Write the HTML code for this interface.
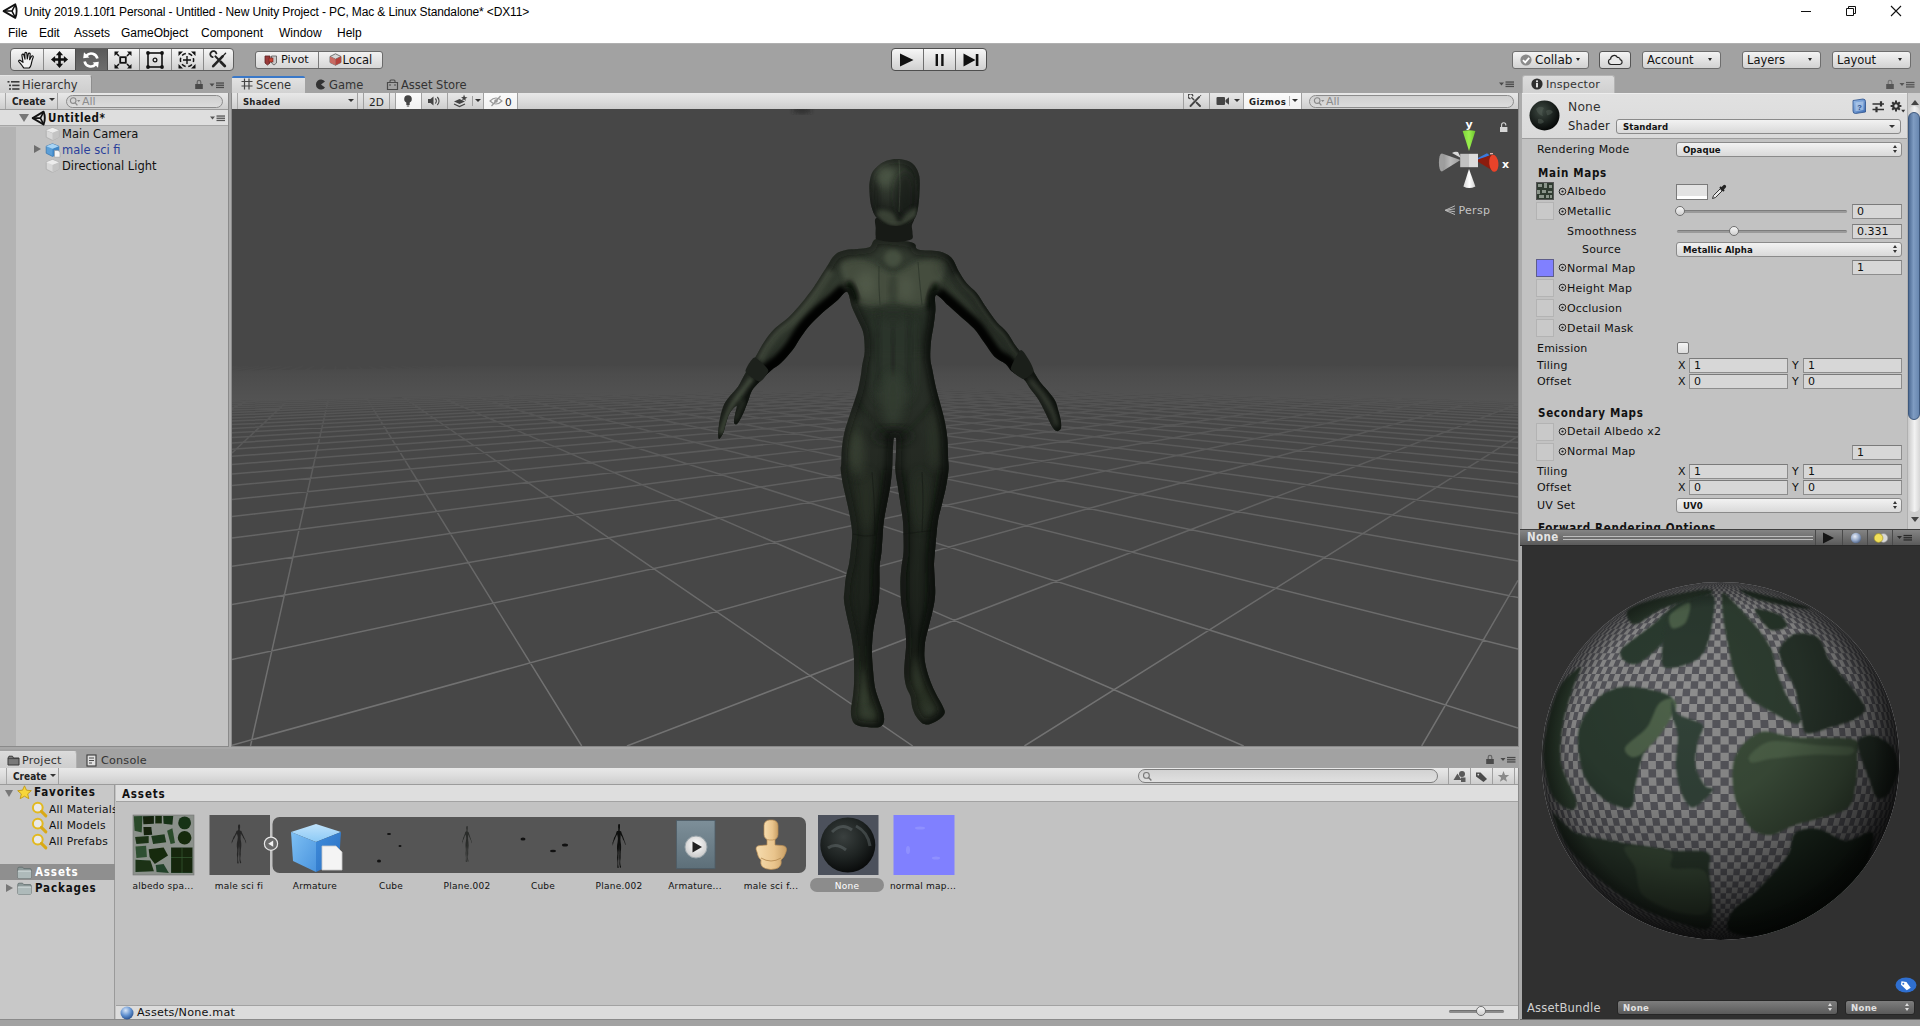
<!DOCTYPE html>
<html lang="en">
<head>
<meta charset="utf-8">
<title>Unity 2019.1.10f1 Personal - Untitled - New Unity Project</title>
<style>
html,body{margin:0;padding:0;width:1920px;height:1026px;overflow:hidden;background:#a2a2a2}
body{font-family:"DejaVu Sans","Liberation Sans",sans-serif;font-size:11px;color:#111;position:relative;line-height:1}
.a{position:absolute;box-sizing:border-box;white-space:nowrap}
.t{position:absolute;white-space:nowrap;line-height:16px;height:16px}
.win{font-family:"Liberation Sans",sans-serif;font-size:12px;color:#000}
.tb{background:linear-gradient(#e9e9e9,#cfcfcf);border:1px solid #7b7b7b}
.btn{background:linear-gradient(#f4f4f4,#d2d2d2);border:1px solid #6e6e6e;border-radius:4px}
.bar{background:linear-gradient(#e8e8e8 0%,#dcdcdc 50%,#cdcdcd 100%)}
.sep{position:absolute;width:1px;background:#8e8e8e}
.fld{position:absolute;box-sizing:border-box;background:#d7d7d7;border:1px solid #8d8d8d;border-top-color:#7a7a7a;height:16px;line-height:14px;padding-left:4px;font-size:11px}
.dd{position:absolute;box-sizing:border-box;background:linear-gradient(#f2f2f2,#d9d9d9);border:1px solid #8a8a8a;border-radius:3px;height:14px;line-height:12px;padding-left:6px;font-size:9.5px;font-weight:bold;font-stretch:condensed;color:#111;letter-spacing:0.1px}
.slot{position:absolute;box-sizing:border-box;width:18px;height:18px;background:#c9c9c9;border:1px solid #b3b3b3}
.lbl{position:absolute;white-space:nowrap;font-size:11.5px;line-height:16px;color:#111}
.ic{position:absolute}
</style>
</head>
<body>
<!-- ===== window title + menu ===== -->
<div class="a" style="left:0;top:0;width:1920px;height:43px;background:#fff"></div>
<svg class="ic" style="left:2px;top:2px" width="18" height="18" viewBox="0 0 18 18"><g fill="none" stroke="#111" stroke-linejoin="round" stroke-linecap="round"><path d="M1.6 9.1 L13.3 2.3 Q16 9.1 13.3 15.9 Z" stroke-width="1.8"/><path d="M1.6 9.1 H10 M10 9.1 L13.2 2.8 M10 9.1 L13.2 15.4" stroke-width="1.5"/></g></svg>
<div class="t win" style="left:24px;top:4px;font-size:12px;letter-spacing:-0.13px">Unity 2019.1.10f1 Personal - Untitled - New Unity Project - PC, Mac &amp; Linux Standalone* &lt;DX11&gt;</div>
<div class="t win" style="left:8px;top:25px">File</div>
<div class="t win" style="left:39px;top:25px">Edit</div>
<div class="t win" style="left:74px;top:25px">Assets</div>
<div class="t win" style="left:121px;top:25px">GameObject</div>
<div class="t win" style="left:201px;top:25px">Component</div>
<div class="t win" style="left:279px;top:25px">Window</div>
<div class="t win" style="left:337px;top:25px">Help</div>
<svg class="ic" style="left:1795px;top:0" width="125" height="24" viewBox="0 0 125 24"><g fill="none" stroke="#111" stroke-width="1"><path d="M6 11.5 H16"/><path d="M51.5 8.5 h7 v7 h-7 z M53.5 8.5 v-2 h7 v7 h-2"/><path d="M96 6 L106 16 M106 6 L96 16" stroke-width="1.1"/></g></svg>

<!-- ===== main toolbar ===== -->
<div class="a" style="left:0;top:43px;width:1920px;height:1px;background:#b0b0b0"></div>
<!-- transform tools -->
<div class="a btn" style="left:10px;top:48px;width:224px;height:23px;border-radius:4px;border-color:#5e5e5e;background:linear-gradient(#f6f6f6,#cfcfcf)"></div>
<div class="a" style="left:75px;top:49px;width:32px;height:21px;background:linear-gradient(#5a5a5a,#6c6c6c)"></div>
<div class="sep" style="left:43px;top:49px;height:21px;background:#8a8a8a"></div>
<div class="sep" style="left:75px;top:49px;height:21px;background:#4d4d4d"></div>
<div class="sep" style="left:107px;top:49px;height:21px;background:#4d4d4d"></div>
<div class="sep" style="left:139px;top:49px;height:21px;background:#8a8a8a"></div>
<div class="sep" style="left:171px;top:49px;height:21px;background:#8a8a8a"></div>
<div class="sep" style="left:203px;top:49px;height:21px;background:#8a8a8a"></div>
<!-- hand -->
<svg class="ic" style="left:17px;top:50px" width="20" height="20" viewBox="0 0 20 20"><path d="M6.8 18 C5.4 16 3.6 13.4 2 11.9 C1 10.9 2.3 9.6 3.5 10.5 L6 12.4 L4.9 5.4 C4.7 4 6.5 3.6 6.9 5 L8 9.2 L7.8 3.4 C7.8 2 9.7 2 9.8 3.4 L10.3 9 L11.3 4 C11.6 2.7 13.4 3 13.2 4.4 L12.6 9.6 L14.5 6.3 C15.2 5.2 16.8 6 16.2 7.3 C15.1 9.8 14.8 11.8 14.2 14.3 C13.8 16.1 13 17.4 12.2 18 Z" fill="#f2f2f2" stroke="#111" stroke-width="1.15" stroke-linejoin="round"/></svg>
<!-- move -->
<svg class="ic" style="left:49.5px;top:49.5px" width="19" height="19" viewBox="0 0 20 20"><path d="M10 1 L13.8 5.4 H11.4 V8.6 H14.6 V6.2 L19 10 L14.6 13.8 V11.4 H11.4 V14.6 H13.8 L10 19 L6.2 14.6 H8.6 V11.4 H5.4 V13.8 L1 10 L5.4 6.2 V8.6 H8.6 V5.4 H6.2 Z" fill="#111"/></svg>
<!-- rotate (active) -->
<svg class="ic" style="left:81px;top:50px;transform:scaleX(-1)" width="20" height="20" viewBox="0 0 20 20"><g fill="none" stroke="#fff" stroke-width="2.6"><path d="M3.6 8.6 A6.4 6.4 0 0 1 14.6 5.6"/><path d="M16.4 11.4 A6.4 6.4 0 0 1 5.4 14.4"/></g><path d="M11.6 7.6 L17.8 8.2 L17 2.2 Z" fill="#fff"/><path d="M8.4 12.4 L2.2 11.8 L3 17.8 Z" fill="#fff"/></svg>
<!-- scale -->
<svg class="ic" style="left:113px;top:50px" width="20" height="20" viewBox="0 0 20 20"><g stroke="#111" stroke-width="1.5" fill="none"><rect x="7.2" y="7.2" width="5.6" height="5.6" stroke-width="1.8"/><path d="M6 6 L2.5 2.5 M14 6 L17.5 2.5 M6 14 L2.5 17.5 M14 14 L17.5 17.5"/></g><path d="M1.5 1.5 H6 L1.5 6 Z M18.5 1.5 V6 L14 1.5 Z M1.5 18.5 V14 L6 18.5 Z M18.5 18.5 H14 L18.5 14 Z" fill="#111"/></svg>
<!-- rect -->
<svg class="ic" style="left:145px;top:50px" width="20" height="20" viewBox="0 0 20 20"><rect x="3" y="3" width="14" height="14" fill="none" stroke="#111" stroke-width="1.6"/><g fill="#111"><circle cx="3" cy="3" r="1.9"/><circle cx="17" cy="3" r="1.9"/><circle cx="3" cy="17" r="1.9"/><circle cx="17" cy="17" r="1.9"/></g><circle cx="10" cy="10" r="1.9" fill="none" stroke="#111" stroke-width="1.2"/></svg>
<!-- transform -->
<svg class="ic" style="left:177px;top:50px" width="20" height="20" viewBox="0 0 20 20"><circle cx="10" cy="10" r="6.6" fill="none" stroke="#111" stroke-width="1.5" stroke-dasharray="4.2 2.7" stroke-dashoffset="2.1"/><path d="M10 6 V14 M6 10 H14" stroke="#111" stroke-width="1.4"/><path d="M1.5 1.5 H6 L1.5 6 Z M18.5 1.5 V6 L14 1.5 Z M1.5 18.5 V14 L6 18.5 Z M18.5 18.5 H14 L18.5 14 Z" fill="#111"/></svg>
<!-- custom tools -->
<svg class="ic" style="left:209px;top:50px" width="20" height="20" viewBox="0 0 20 20"><g stroke="#222" fill="none" stroke-linecap="round"><path d="M4.2 16.2 L13.6 6.4" stroke-width="2.6"/><path d="M13.6 6.4 L16.6 3.2" stroke-width="1.3"/><path d="M9 9 L6.4 6.4" stroke-width="2"/><path d="M11.6 11.8 L15.8 16" stroke-width="2.8"/><path d="M7.4 3.4 A3.1 3.1 0 1 0 3.6 7.2" stroke-width="1.8"/></g></svg>
<!-- pivot / local -->
<div class="a btn" style="left:255px;top:51px;width:128px;height:18px;border-radius:3px;border-color:#6a6a6a;background:linear-gradient(#f2f2f2,#d6d6d6)"></div>
<div class="sep" style="left:318px;top:52px;height:16px;background:#7a7a7a"></div>
<svg class="ic" style="left:264px;top:54px" width="14" height="12" viewBox="0 0 14 12"><path d="M1 2 H6 V9 L3.5 11 L1 9 Z" fill="#9a3a3a" stroke="#5a2222" stroke-width="0.8"/><path d="M7.5 2 H12.5 V9 L10 11 L7.5 9 Z" fill="#c9c9c9" stroke="#555" stroke-width="0.8"/><rect x="5" y="4" width="4" height="4" fill="#c43" stroke="#622" stroke-width="0.6"/></svg>
<div class="t" style="left:281px;top:52px;font-size:11.3px">Pivot</div>
<svg class="ic" style="left:329px;top:53px" width="13" height="13" viewBox="0 0 13 13"><path d="M6.5 0.8 L12 3.5 V9.5 L6.5 12.2 L1 9.5 V3.5 Z" fill="#d9d9d9" stroke="#666" stroke-width="0.9"/><path d="M1 3.5 L6.5 6.2 L12 3.5 M6.5 6.2 V12.2" stroke="#666" stroke-width="0.9" fill="none"/><path d="M6.5 6.2 L12 3.5 V9.5 L6.5 12.2 Z" fill="#b4423c"/><path d="M1 3.5 L6.5 6.2 V12.2 L1 9.5 Z" fill="#c86a62"/></svg>
<div class="t" style="left:342.5px;top:52px;font-size:11.5px">Local</div>
<!-- play controls -->
<div class="a btn" style="left:891px;top:48px;width:96px;height:23px;border-radius:4px;border-color:#4e4e4e;background:linear-gradient(#f6f6f6,#d0d0d0)"></div>
<div class="sep" style="left:923px;top:49px;height:21px;background:#6e6e6e"></div>
<div class="sep" style="left:955px;top:49px;height:21px;background:#6e6e6e"></div>
<svg class="ic" style="left:891px;top:48px" width="96" height="23" viewBox="0 0 96 23"><path d="M9 5.5 L22.5 12 L9 18.5 Z" fill="#111"/><path d="M44.6 6 H47 V18 H44.6 Z M50.2 6 H52.6 V18 H50.2 Z" fill="#111"/><path d="M72.5 5.5 L84.5 12 L72.5 18.5 Z M84.8 6 H87.4 V18 H84.8 Z" fill="#111"/></svg>
<!-- right side -->
<div class="a btn" style="left:1512px;top:51px;width:77px;height:18px;border-radius:3px"></div>
<svg class="ic" style="left:1520px;top:54px" width="12" height="12" viewBox="0 0 12 12"><circle cx="6" cy="6" r="5.6" fill="#8a8a8a"/><path d="M3 6.2 L5.2 8.4 L9.2 3.8" stroke="#fff" stroke-width="1.8" fill="none"/></svg>
<div class="t" style="left:1535px;top:52px;font-size:12px">Collab</div>
<div class="a" style="left:1576px;top:58px;border-left:2.8px solid transparent;border-right:2.8px solid transparent;border-top:3.4px solid #222"></div>
<div class="a btn" style="left:1599px;top:51px;width:32px;height:18px;border-radius:3px;border-color:#555"></div>
<svg class="ic" style="left:1607px;top:54px" width="17" height="12" viewBox="0 0 17 12"><path d="M4 10.5 A2.8 2.8 0 0 1 3.6 5 A3.6 3.6 0 0 1 10.4 3.4 A2.4 2.4 0 0 1 13.2 5.6 A2.5 2.5 0 0 1 13 10.5 Z" fill="#e8e8e8" stroke="#222" stroke-width="1.2"/></svg>
<div class="a btn" style="left:1642px;top:51px;width:79px;height:18px;border-radius:3px"></div>
<div class="t" style="left:1647px;top:52px;font-size:11.5px">Account</div>
<div class="a" style="left:1708px;top:58px;border-left:2.8px solid transparent;border-right:2.8px solid transparent;border-top:3.4px solid #222"></div>
<div class="a btn" style="left:1742px;top:51px;width:79px;height:18px;border-radius:3px"></div>
<div class="t" style="left:1747px;top:52px;font-size:11.5px">Layers</div>
<div class="a" style="left:1808px;top:58px;border-left:2.8px solid transparent;border-right:2.8px solid transparent;border-top:3.4px solid #222"></div>
<div class="a btn" style="left:1832px;top:51px;width:79px;height:18px;border-radius:3px"></div>
<div class="t" style="left:1837px;top:52px;font-size:11.5px">Layout</div>
<div class="a" style="left:1898px;top:58px;border-left:2.8px solid transparent;border-right:2.8px solid transparent;border-top:3.4px solid #222"></div>

<!-- ===== hierarchy ===== -->
<!-- hierarchy tab -->
<div class="a" style="left:0;top:75px;width:92px;height:18px;background:linear-gradient(#dadada,#cecece);border-top:1px solid #e4e4e4;border-top-right-radius:3px;border-right:1px solid #8e8e8e"></div>
<svg class="ic" style="left:7px;top:80px" width="13" height="11" viewBox="0 0 13 11"><g fill="#3c3c3c"><rect x="0.5" y="1" width="2" height="1.6"/><rect x="4" y="1" width="8.5" height="1.6"/><rect x="2" y="4.6" width="2" height="1.6"/><rect x="5.2" y="4.6" width="7.3" height="1.6"/><rect x="2" y="8.2" width="2" height="1.6"/><rect x="5.2" y="8.2" width="7.3" height="1.6"/></g></svg>
<div class="t" style="left:22px;top:77px;font-size:11.5px;color:#333">Hierarchy</div>
<svg class="ic" style="left:193px;top:79px" width="34" height="11" viewBox="0 0 34 11"><g fill="#4a4a4a"><path d="M2.2 5 H9.8 V10 H2.2 Z"/><path d="M3.6 5 V3.2 A2.4 2.4 0 0 1 8.4 3.2 V5 H7.2 V3.3 A1.2 1.2 0 0 0 4.8 3.3 V5 Z" fill="#666"/><path d="M16.5 4.5 H21.5 L19 7.5 Z"/><rect x="23" y="3.4" width="8" height="1.3"/><rect x="23" y="5.6" width="8" height="1.3"/><rect x="23" y="7.8" width="8" height="1.3"/></g></svg>
<!-- panel body -->
<div class="a" style="left:0;top:93px;width:229px;height:654px;background:#c2c2c2;border-right:1px solid #8a8a8a;border-bottom:1px solid #8a8a8a"></div>
<div class="a bar" style="left:0;top:93px;width:228px;height:16px;border-bottom:1px solid #9b9b9b;box-sizing:content-box"></div>
<div class="sep" style="left:5px;top:93px;height:16px;background:#a8a8a8"></div>
<div class="t" style="left:12px;top:94px;font-size:10px;font-weight:bold;font-stretch:condensed;color:#222">Create</div>
<div class="a" style="left:49px;top:98px;border-left:3px solid transparent;border-right:3px solid transparent;border-top:3px solid #333"></div>
<div class="sep" style="left:57px;top:93px;height:16px;background:#a0a0a0"></div>
<div class="a" style="left:66px;top:95px;width:157px;height:13px;border:1px solid #8c8c8c;border-radius:7px;background:linear-gradient(#cfcfcf,#dcdcdc)"></div>
<svg class="ic" style="left:69px;top:96px" width="12" height="11" viewBox="0 0 12 11"><circle cx="4.2" cy="4.6" r="2.8" fill="none" stroke="#8a8a8a" stroke-width="1.1"/><path d="M6.2 6.8 L8.4 9.4" stroke="#8a8a8a" stroke-width="1.3"/><path d="M8 4 H11.4 L9.7 6 Z" fill="#8a8a8a"/></svg>
<div class="t" style="left:82px;top:94px;font-size:11px;color:#8c8c8c">All</div>
<!-- scene row -->
<div class="a" style="left:0;top:110px;width:228px;height:16px;background:#dedede;border-bottom:1px solid #a6a6a6"></div>
<div class="a" style="left:0;top:127px;width:16px;height:619px;background:#b3b3b3"></div>
<div class="a" style="left:19px;top:114px;border-left:5px solid transparent;border-right:5px solid transparent;border-top:8px solid #777"></div>
<svg class="ic" style="left:31px;top:109px" width="17" height="18" viewBox="0 0 18 18"><g fill="none" stroke="#111" stroke-linejoin="round" stroke-linecap="round"><path d="M1.8 9.1 L13.3 2.3 Q16 9.1 13.3 15.9 Z" stroke-width="2"/><path d="M1.8 9.1 H10 M10 9.1 L13.2 2.8 M10 9.1 L13.2 15.4" stroke-width="1.7"/></g></svg>
<div class="t" style="left:48px;top:110px;font-size:11.5px;font-weight:bold;font-stretch:condensed;letter-spacing:0.55px;color:#111">Untitled*</div>
<svg class="ic" style="left:209px;top:113px" width="18" height="10" viewBox="0 0 18 10"><g fill="#555"><path d="M1 3.5 H6 L3.5 6.5 Z"/><rect x="7.5" y="2.4" width="8.5" height="1.3"/><rect x="7.5" y="4.6" width="8.5" height="1.3"/><rect x="7.5" y="6.8" width="8.5" height="1.3"/></g></svg>
<!-- rows -->
<svg class="ic" style="left:45px;top:127px" width="15" height="14" viewBox="0 0 15 14"><path d="M7.5 0.8 L13.8 3.2 V10.2 L7.5 13.4 L1.2 10.2 V3.2 Z" fill="#d8d8d8" stroke="#a9a9a9" stroke-width="0.8"/><path d="M1.2 3.2 L7.5 5.8 L13.8 3.2" fill="none" stroke="#b5b5b5" stroke-width="0.8"/><path d="M7.5 5.8 L13.8 3.2 V10.2 L7.5 13.4 Z" fill="#c4c4c4"/><path d="M1.2 3.2 L7.5 0.8 L13.8 3.2 L7.5 5.8 Z" fill="#ececec"/></svg>
<div class="t" style="left:62px;top:126px;font-size:11.5px">Main Camera</div>
<div class="a" style="left:34px;top:145px;border-top:4.5px solid transparent;border-bottom:4.5px solid transparent;border-left:7px solid #6e6e6e"></div>
<svg class="ic" style="left:45px;top:143px" width="16" height="15" viewBox="0 0 16 15"><path d="M7.5 0.8 L13.8 3.2 V10.2 L7.5 13.4 L1.2 10.2 V3.2 Z" fill="#5b9fd8" stroke="#3d78b0" stroke-width="0.8"/><path d="M7.5 5.8 L13.8 3.2 V10.2 L7.5 13.4 Z" fill="#3f86c6"/><path d="M1.2 3.2 L7.5 0.8 L13.8 3.2 L7.5 5.8 Z" fill="#a8d4f4"/><path d="M9.5 7.5 H13.2 L15 9.3 V14.2 H9.5 Z" fill="#f4f4f4" stroke="#9a9a9a" stroke-width="0.6"/></svg>
<div class="t" style="left:62px;top:142px;font-size:11.5px;color:#2a3f9a">male sci fi</div>
<svg class="ic" style="left:45px;top:159px" width="15" height="14" viewBox="0 0 15 14"><path d="M7.5 0.8 L13.8 3.2 V10.2 L7.5 13.4 L1.2 10.2 V3.2 Z" fill="#d8d8d8" stroke="#a9a9a9" stroke-width="0.8"/><path d="M7.5 5.8 L13.8 3.2 V10.2 L7.5 13.4 Z" fill="#c4c4c4"/><path d="M1.2 3.2 L7.5 0.8 L13.8 3.2 L7.5 5.8 Z" fill="#ececec"/></svg>
<div class="t" style="left:62px;top:158px;font-size:11.5px">Directional Light</div>

<!-- ===== scene ===== -->
<!-- scene tabs -->
<div class="a" style="left:232px;top:76px;width:73px;height:17px;background:linear-gradient(#e2e2e2,#d2d2d2);border-top:2px solid #3a78c8;border-top-right-radius:2px;border-top-left-radius:2px"></div>
<svg class="ic" style="left:241px;top:78px" width="12" height="12" viewBox="0 0 12 12"><path d="M3.5 0.5 V11.5 M8 0.5 V11.5 M0.5 3.5 H11.5 M0.5 8 H11.5" stroke="#444" stroke-width="1.2" fill="none"/></svg>
<div class="t" style="left:256px;top:77px;font-size:11.5px;color:#333">Scene</div>
<svg class="ic" style="left:315px;top:79px" width="11" height="11" viewBox="0 0 11 11"><path d="M10 2.6 A5 5 0 1 0 10 8.4 L6 5.5 Z" fill="#333"/></svg>
<div class="t" style="left:329px;top:77px;font-size:11.5px;color:#333">Game</div>
<svg class="ic" style="left:386px;top:78px" width="13" height="13" viewBox="0 0 13 13"><path d="M1.5 4.5 H11.5 V11.5 H1.5 Z" fill="none" stroke="#4a4a4a" stroke-width="1.2"/><path d="M4 4.5 V3 A1 1 0 0 1 5 2 H8 A1 1 0 0 1 9 3 V4.5" fill="none" stroke="#4a4a4a" stroke-width="1.1"/><path d="M4 6 V8 M9 6 V8" stroke="#4a4a4a" stroke-width="1"/></svg>
<div class="t" style="left:401px;top:77px;font-size:11.5px;color:#333">Asset Store</div>
<svg class="ic" style="left:1498px;top:79px" width="18" height="10" viewBox="0 0 18 10"><g fill="#4a4a4a"><path d="M1 3.5 H6 L3.5 6.5 Z"/><rect x="7.5" y="2.4" width="8.5" height="1.3"/><rect x="7.5" y="4.6" width="8.5" height="1.3"/><rect x="7.5" y="6.8" width="8.5" height="1.3"/></g></svg>
<!-- scene toolbar -->
<div class="a bar" style="left:232px;top:93px;width:1287px;height:16px;border-right:1px solid #8a8a8a"></div>
<div class="a" style="left:231px;top:93px;width:1px;height:654px;background:#8a8a8a"></div>
<div class="sep" style="left:237px;top:93px;height:16px;background:#a8a8a8"></div>
<div class="t" style="left:243px;top:94px;font-size:9.5px;font-weight:bold;font-stretch:condensed;color:#222;letter-spacing:0.2px">Shaded</div>
<div class="a" style="left:348px;top:99px;border-left:3px solid transparent;border-right:3px solid transparent;border-top:3px solid #333"></div>
<div class="sep" style="left:357px;top:93px;height:16px;background:#a0a0a0"></div>
<div class="sep" style="left:363px;top:93px;height:16px;background:#a0a0a0"></div>
<div class="t" style="left:369px;top:93.5px;font-size:10.5px;color:#222">2D</div>
<div class="sep" style="left:389px;top:93px;height:16px;background:#a0a0a0"></div>
<div class="sep" style="left:395px;top:93px;height:16px;background:#a0a0a0"></div>
<div class="a" style="left:396px;top:93px;width:25px;height:16px;background:linear-gradient(#fbfbfb,#f1f1f1)"></div>
<svg class="ic" style="left:402px;top:94px" width="12" height="14" viewBox="0 0 12 14"><circle cx="6" cy="5" r="3.8" fill="#444"/><path d="M4.3 8 H7.7 V11 H4.3 Z" fill="#444"/><path d="M4.8 12 H7.2" stroke="#444" stroke-width="1"/></svg>
<div class="sep" style="left:421px;top:93px;height:16px;background:#a0a0a0"></div>
<svg class="ic" style="left:427px;top:95px" width="14" height="12" viewBox="0 0 14 12"><path d="M1 4 H3.5 L6.5 1.5 V10.5 L3.5 8 H1 Z" fill="#444"/><path d="M8.3 3.5 A3.5 3.5 0 0 1 8.3 8.5 M10.3 2 A5.5 5.5 0 0 1 10.3 10" stroke="#444" stroke-width="1.1" fill="none"/></svg>
<div class="sep" style="left:447px;top:93px;height:16px;background:#a0a0a0"></div>
<svg class="ic" style="left:453px;top:94px" width="15" height="14" viewBox="0 0 15 14"><path d="M1 7.5 L6.5 5 L12 7.5 L6.5 10 Z" fill="#444"/><path d="M1 10 L6.5 12.5 L12 10" stroke="#444" stroke-width="1.2" fill="none"/><path d="M11 0.5 L12 3 L14.5 3.5 L12.4 4.8 L12.8 7 L11 5.6 L9 6.6 L9.8 4.6 L8 3.2 L10.2 3 Z" fill="#444"/></svg>
<div class="sep" style="left:472px;top:96px;height:10px;background:#a0a0a0"></div>
<div class="a" style="left:475px;top:99px;border-left:3px solid transparent;border-right:3px solid transparent;border-top:3px solid #333"></div>
<div class="sep" style="left:483px;top:93px;height:16px;background:#a0a0a0"></div>
<div class="a" style="left:484px;top:93px;width:33px;height:16px;background:linear-gradient(#fbfbfb,#f1f1f1)"></div>
<svg class="ic" style="left:489px;top:95px" width="14" height="12" viewBox="0 0 14 12"><path d="M1 6 Q7 0 13 6 Q7 12 1 6 Z" fill="none" stroke="#9a9a9a" stroke-width="1.1"/><circle cx="7" cy="6" r="1.8" fill="#9a9a9a"/><path d="M11.5 1 L2.5 11" stroke="#9a9a9a" stroke-width="1.2"/></svg>
<div class="t" style="left:505px;top:93.5px;font-size:10.5px;color:#222">0</div>
<div class="sep" style="left:517px;top:93px;height:16px;background:#a0a0a0"></div>
<!-- right part of scene toolbar -->
<div class="sep" style="left:1183px;top:93px;height:16px;background:#a0a0a0"></div>
<svg class="ic" style="left:1188px;top:94px" width="15" height="14" viewBox="0 0 15 14"><g stroke="#444" fill="none" stroke-linecap="round"><path d="M2.5 12 L11 3.2" stroke-width="1.9"/><path d="M11 3.2 L12.8 1.4" stroke-width="1"/><path d="M5.8 5.8 L3.8 3.8" stroke-width="1.5"/><path d="M8.6 8.6 L12 12" stroke-width="2"/><path d="M4.8 1.8 A2.4 2.4 0 1 0 2 4.6" stroke-width="1.3"/></g></svg>
<div class="sep" style="left:1209px;top:93px;height:16px;background:#a0a0a0"></div>
<svg class="ic" style="left:1216px;top:96px" width="14" height="10" viewBox="0 0 14 10"><rect x="0.5" y="1" width="8.5" height="8" rx="1" fill="#444"/><path d="M9.5 4 L13 1.2 V8.8 L9.5 6 Z" fill="#444"/></svg>
<div class="a" style="left:1234px;top:99px;border-left:3px solid transparent;border-right:3px solid transparent;border-top:3px solid #333"></div>
<div class="sep" style="left:1243px;top:93px;height:16px;background:#a0a0a0"></div>
<div class="a" style="left:1244px;top:93px;width:57px;height:16px;background:linear-gradient(#fbfbfb,#f1f1f1)"></div>
<div class="t" style="left:1249px;top:94px;font-size:9.5px;font-weight:bold;font-stretch:condensed;color:#222;letter-spacing:0.4px">Gizmos</div>
<div class="sep" style="left:1289px;top:96px;height:10px;background:#b5b5b5"></div>
<div class="a" style="left:1292px;top:99px;border-left:3px solid transparent;border-right:3px solid transparent;border-top:3px solid #333"></div>
<div class="sep" style="left:1301px;top:93px;height:16px;background:#a0a0a0"></div>
<div class="a" style="left:1309px;top:95px;width:205px;height:13px;border:1px solid #8c8c8c;border-radius:7px;background:linear-gradient(#cfcfcf,#dcdcdc)"></div>
<svg class="ic" style="left:1313px;top:96px" width="12" height="11" viewBox="0 0 12 11"><circle cx="4.2" cy="4.6" r="2.8" fill="none" stroke="#8a8a8a" stroke-width="1.1"/><path d="M6.2 6.8 L8.4 9.4" stroke="#8a8a8a" stroke-width="1.3"/><path d="M8 4 H11.4 L9.7 6 Z" fill="#8a8a8a"/></svg>
<div class="t" style="left:1326px;top:94px;font-size:11px;color:#8c8c8c">All</div>
<!-- viewport -->
<svg class="ic" style="left:232px;top:109px" width="1286" height="637" viewBox="0 0 1286 637">
<defs>
<linearGradient id="gfade" x1="0" y1="0" x2="0" y2="1"><stop offset="0" stop-color="#474747"/><stop offset="0.03" stop-color="#474747" stop-opacity="0.88"/><stop offset="0.1" stop-color="#474747" stop-opacity="0.74"/><stop offset="0.2" stop-color="#474747" stop-opacity="0.62"/><stop offset="0.35" stop-color="#474747" stop-opacity="0.46"/><stop offset="0.5" stop-color="#474747" stop-opacity="0.32"/><stop offset="0.75" stop-color="#474747" stop-opacity="0.14"/><stop offset="1" stop-color="#474747" stop-opacity="0"/></linearGradient>
<linearGradient id="gbody" x1="0" y1="141" x2="0" y2="619" gradientUnits="userSpaceOnUse">
<stop offset="0" stop-color="#2f3a2b"/><stop offset="0.12" stop-color="#303b2b"/><stop offset="0.24" stop-color="#283226"/><stop offset="0.42" stop-color="#232b21"/><stop offset="0.55" stop-color="#1f281d"/><stop offset="0.8" stop-color="#1a2219"/><stop offset="0.92" stop-color="#27321f"/><stop offset="1" stop-color="#2d3a26"/></linearGradient>
<radialGradient id="ghead" cx="658" cy="66" r="40" gradientUnits="userSpaceOnUse"><stop offset="0" stop-color="#414f3a"/><stop offset="0.45" stop-color="#2d372a"/><stop offset="1" stop-color="#181e18"/></radialGradient>
<filter id="b2" x="-20%" y="-20%" width="140%" height="140%"><feGaussianBlur stdDeviation="2"/></filter>
<filter id="b4" x="-30%" y="-30%" width="160%" height="160%"><feGaussianBlur stdDeviation="4"/></filter>
<filter id="b7" x="-40%" y="-40%" width="180%" height="180%"><feGaussianBlur stdDeviation="7"/></filter>
<filter id="desat" filterUnits="userSpaceOnUse" x="450" y="30" width="420" height="610"><feColorMatrix type="saturate" values="0.72"/></filter>
<clipPath id="cbody"><path d="M645.6 129.7 C638.4 130.5 642.0 136.7 636.7 138.6 C631.4 140.5 619.6 139.8 613.9 141.1 C608.2 142.4 605.7 143.4 602.5 146.2 C599.3 148.9 598.3 152.4 594.9 157.6 C591.5 162.9 586.2 171.6 582.0 177.7 C577.8 183.8 573.6 189.1 569.4 194.2 C565.2 199.3 561.1 204.0 556.7 208.2 C552.3 212.4 546.8 215.6 542.8 219.6 C538.8 223.6 535.8 227.6 532.6 232.2 C529.4 236.8 527.0 242.1 523.8 247.4 C520.6 252.7 516.6 258.8 513.6 263.8 C510.6 268.9 508.8 273.7 506.0 277.7 C503.2 281.7 499.4 284.9 497.1 287.9 C494.8 290.9 493.6 292.1 492.1 295.5 C490.6 298.9 489.2 303.8 488.3 308.2 C487.3 312.6 486.6 318.5 486.4 322.1 C486.2 325.7 486.2 329.5 487.0 329.7 C487.8 329.9 490.1 326.3 491.4 323.4 C492.7 320.4 493.4 315.4 494.6 312.0 C495.8 308.6 496.7 305.6 498.4 303.1 C500.1 300.6 504.0 296.2 504.7 296.8 C505.4 297.4 503.2 304.0 502.8 306.9 C502.4 309.8 501.8 312.6 502.2 313.9 C502.6 315.2 503.9 316.1 505.4 314.5 C506.9 312.9 509.3 308.2 511.1 304.4 C512.9 300.6 514.7 295.5 516.2 291.7 C517.7 287.9 518.1 284.7 520.0 281.5 C521.9 278.3 524.4 276.1 527.6 272.7 C530.8 269.3 535.4 264.5 539.0 261.4 C542.6 258.2 545.5 257.2 549.1 253.8 C552.7 250.4 557.1 245.5 560.5 241.1 C563.9 236.7 566.4 231.4 569.4 227.2 C572.4 223.0 574.8 219.6 578.2 215.8 C581.6 212.0 585.2 208.4 589.6 204.4 C594.0 200.4 600.6 195.3 604.8 191.7 C609.0 188.1 612.5 181.8 615.0 182.8 C617.5 183.9 618.1 193.1 620.0 198.0 C621.9 202.9 624.5 207.6 626.4 212.0 C628.3 216.4 630.5 219.5 631.5 224.6 C632.5 229.7 632.9 237.2 632.7 242.4 C632.5 247.6 630.8 252.1 630.2 256.0 C629.6 259.9 629.5 262.2 628.9 266.0 C628.3 269.8 627.4 274.7 626.4 279.0 C625.4 283.3 624.1 287.1 622.6 291.7 C621.1 296.3 619.2 301.6 617.5 306.9 C615.8 312.2 613.7 317.9 612.4 323.4 C611.1 328.9 610.4 334.5 609.9 339.8 C609.4 345.1 609.5 351.5 609.3 355.0 C609.1 358.5 608.4 357.2 608.8 361.0 C609.1 364.8 610.3 372.0 611.4 377.5 C612.5 383.0 614.1 388.6 615.2 393.9 C616.4 399.2 617.5 404.0 618.3 409.1 C619.1 414.2 620.1 419.3 620.2 424.4 C620.3 429.5 619.5 434.5 619.0 439.6 C618.5 444.7 618.0 449.9 617.1 454.8 C616.2 459.6 614.6 464.3 613.9 468.7 C613.1 473.1 612.9 477.7 612.6 481.4 C612.3 485.1 611.6 486.4 612.0 491.0 C612.4 495.6 614.0 503.0 615.2 508.7 C616.4 514.4 618.0 519.7 619.0 525.2 C620.0 530.7 621.0 536.4 621.5 541.7 C622.0 547.0 622.0 551.6 622.1 556.9 C622.2 562.2 622.3 568.3 622.1 573.4 C621.9 578.5 621.4 582.9 620.9 587.3 C620.4 591.7 619.2 596.4 619.0 600.0 C618.8 603.6 618.8 606.2 619.6 608.8 C620.4 611.4 621.1 614.2 624.0 615.8 C626.9 617.4 632.7 618.0 636.7 618.3 C640.7 618.6 645.6 618.7 648.1 617.7 C650.6 616.8 651.4 614.9 651.9 612.6 C652.4 610.3 652.1 607.4 651.3 603.8 C650.4 600.2 648.2 595.3 646.8 591.1 C645.4 586.9 644.0 583.2 643.0 578.4 C642.0 573.5 641.6 567.7 641.1 562.0 C640.6 556.3 640.0 549.7 639.9 544.2 C639.8 538.7 640.1 534.1 640.5 529.0 C640.9 523.9 641.5 518.9 642.4 513.8 C643.2 508.7 644.9 502.4 645.6 498.6 C646.3 494.8 646.5 494.9 646.8 491.0 C647.1 487.1 647.4 480.6 647.5 475.0 C647.6 469.4 647.2 462.6 647.5 457.3 C647.8 452.0 648.9 448.5 649.4 443.4 C649.9 438.3 650.2 432.2 650.6 426.9 C651.0 421.6 651.1 417.2 651.9 411.7 C652.6 406.2 654.0 399.6 655.1 393.9 C656.2 388.2 657.4 383.0 658.2 377.5 C659.0 372.0 659.7 365.8 660.1 361.0 C660.5 356.2 660.4 353.7 660.6 348.7 C660.8 343.7 661.1 334.4 661.5 331.0 C661.9 327.6 662.3 328.5 662.8 328.5 C663.2 328.5 664.0 327.6 664.2 331.0 C664.4 334.4 663.9 343.7 663.8 348.7 C663.6 353.7 663.0 356.2 663.3 361.0 C663.6 365.8 664.9 372.0 665.8 377.5 C666.6 383.0 667.5 388.2 668.4 393.9 C669.2 399.6 670.4 406.2 670.9 411.7 C671.4 417.2 671.4 421.6 671.5 426.9 C671.6 432.2 671.8 438.3 671.5 443.4 C671.2 448.5 670.1 452.4 669.6 457.3 C669.1 462.1 668.5 466.9 668.4 472.5 C668.3 478.1 668.6 485.8 669.0 491.0 C669.4 496.2 670.2 498.9 670.9 503.7 C671.6 508.6 672.9 514.6 673.4 520.1 C673.9 525.6 674.2 531.3 674.1 536.6 C674.0 541.9 673.1 547.1 672.8 551.8 C672.5 556.4 672.0 560.3 672.2 564.5 C672.4 568.7 673.1 573.4 674.1 577.2 C675.1 581.0 677.5 583.7 678.5 587.3 C679.5 590.9 679.4 595.3 680.4 598.7 C681.4 602.1 682.6 605.1 684.2 607.6 C685.8 610.1 687.7 612.6 689.9 613.9 C692.1 615.2 694.5 615.8 697.5 615.2 C700.5 614.6 705.2 612.0 707.7 610.1 C710.2 608.2 712.3 606.1 712.7 603.8 C713.1 601.5 711.7 599.4 710.2 596.2 C708.7 593.0 705.8 588.6 703.9 584.8 C702.0 581.0 700.3 577.2 698.8 573.4 C697.3 569.6 696.1 566.2 695.0 562.0 C693.9 557.8 692.7 552.9 692.4 548.0 C692.1 543.1 692.5 537.6 693.1 532.8 C693.8 527.9 695.1 523.8 696.3 518.9 C697.5 514.0 699.0 508.4 700.1 503.7 C701.2 499.1 702.1 494.7 702.6 491.0 C703.1 487.3 703.2 485.1 703.2 481.4 C703.2 477.7 702.8 473.1 702.6 468.7 C702.4 464.3 701.9 459.6 702.0 454.8 C702.1 449.9 702.8 444.7 703.2 439.6 C703.6 434.5 704.0 429.5 704.5 424.4 C705.0 419.3 705.4 414.2 706.4 409.1 C707.4 404.0 708.9 399.2 710.2 393.9 C711.5 388.6 713.0 383.0 714.0 377.5 C715.0 372.0 716.1 365.8 716.5 361.0 C716.9 356.2 716.3 353.9 716.1 348.7 C715.9 343.5 715.9 335.6 715.4 329.7 C714.9 323.8 713.9 318.5 712.9 313.2 C711.9 307.9 710.6 303.7 709.1 298.0 C707.6 292.3 705.5 285.3 704.0 279.0 C702.5 272.7 701.2 265.1 700.2 260.0 C699.2 254.9 698.5 253.3 698.3 248.7 C698.1 244.1 698.5 237.5 699.0 232.2 C699.5 226.9 700.8 222.1 701.5 217.0 C702.2 211.9 703.0 207.0 703.4 201.8 C703.8 196.6 701.8 186.8 704.0 186.0 C706.2 185.2 712.5 193.1 716.7 196.8 C720.9 200.5 725.2 204.4 729.4 208.2 C733.6 212.0 738.2 215.4 742.0 219.6 C745.8 223.8 748.8 228.9 752.2 233.5 C755.6 238.1 758.7 243.8 762.3 247.4 C765.9 251.0 770.8 252.5 773.7 255.0 C776.7 257.5 777.0 260.1 780.0 262.6 C783.0 265.1 788.5 267.4 791.5 270.1 C794.5 272.8 795.5 275.8 797.8 279.0 C800.1 282.2 803.3 285.9 805.4 289.1 C807.5 292.3 808.8 294.8 810.5 298.0 C812.2 301.2 813.8 304.8 815.5 308.2 C817.2 311.6 819.0 316.0 820.6 318.3 C822.2 320.6 823.6 321.9 825.0 322.1 C826.4 322.3 828.2 321.3 828.8 319.6 C829.4 317.9 829.2 315.0 828.8 312.0 C828.4 309.0 827.2 305.2 826.3 301.8 C825.3 298.4 824.9 295.1 823.1 291.7 C821.3 288.3 818.0 284.7 815.5 281.5 C813.0 278.3 810.2 275.9 807.9 272.7 C805.6 269.5 803.9 266.3 801.6 262.5 C799.3 258.7 797.0 254.2 794.0 250.0 C791.0 245.8 787.1 241.7 783.9 237.3 C780.7 232.9 778.2 227.4 775.0 223.4 C771.8 219.4 768.2 217.2 764.8 213.2 C761.4 209.2 758.1 204.2 754.7 199.3 C751.3 194.5 748.0 188.3 744.6 184.1 C741.2 179.9 737.4 177.5 734.4 173.9 C731.4 170.3 729.3 166.7 726.8 162.5 C724.3 158.3 722.6 152.0 719.2 148.6 C715.8 145.2 712.1 143.7 706.6 142.3 C701.1 141.0 690.6 142.0 686.1 140.5 C681.6 139.0 686.5 135.3 679.8 133.5 C673.0 131.7 652.8 128.8 645.6 129.7 Z"/></clipPath>
<clipPath id="chead"><path d="M664.6 49.9 C661.4 49.9 658.0 50.5 655.0 51.5 C652.0 52.5 649.2 54.3 646.8 56.2 C644.4 58.1 642.0 60.5 640.5 63.0 C639.0 65.5 638.5 68.3 638.0 71.0 C637.5 73.7 637.2 75.1 637.3 79.0 C637.4 82.9 637.8 89.8 638.6 94.2 C639.5 98.6 641.1 103.0 642.4 105.6 C643.7 108.2 644.6 108.4 646.2 110.0 C647.8 111.6 649.0 113.8 652.0 115.0 C655.0 116.2 660.0 117.0 664.0 117.0 C668.0 117.0 673.0 116.2 676.0 115.0 C679.0 113.8 680.7 112.2 682.3 110.0 C683.9 107.8 684.6 105.9 685.5 101.8 C686.4 97.7 687.1 91.0 687.4 85.3 C687.7 79.6 688.2 72.5 687.4 67.6 C686.5 62.7 684.5 58.9 682.3 56.2 C680.1 53.5 677.0 52.4 674.0 51.3 C671.0 50.3 667.8 49.9 664.6 49.9 Z"/></clipPath>
</defs>
<rect width="1286" height="637" fill="#474747"/>
<path d="M5.2 257.0 L0.0 257.7 M16.2 257.0 L0.0 259.3 M27.1 257.0 L0.0 261.4 M38.1 257.0 L0.0 264.2 M49.1 257.0 L0.0 268.0 M60.0 257.0 L0.0 273.7 M71.0 257.0 L0.0 282.8 M81.9 257.0 L0.0 299.9 M92.9 257.0 L0.0 344.0 M103.8 257.0 L18.5 637.0 M114.7 257.0 L349.7 637.0 M125.6 257.0 L680.8 637.0 M136.6 257.0 L1011.7 637.0 M147.5 257.0 L1286.0 619.1 M158.4 257.0 L1286.0 539.9 M169.3 257.0 L1286.0 488.4 M180.2 257.0 L1286.0 452.1 M191.1 257.0 L1286.0 425.3 M201.9 257.0 L1286.0 404.6 M212.8 257.0 L1286.0 388.1 M223.7 257.0 L1286.0 374.7 M234.6 257.0 L1286.0 363.6 M245.4 257.0 L1286.0 354.2 M256.3 257.0 L1286.0 346.2 M267.1 257.0 L1286.0 339.3 M278.0 257.0 L1286.0 333.3 M288.8 257.0 L1286.0 328.0 M299.7 257.0 L1286.0 323.3 M310.5 257.0 L1286.0 319.1 M321.3 257.0 L1286.0 315.3 M332.1 257.0 L1286.0 311.9 M342.9 257.0 L1286.0 308.8 M353.8 257.0 L1286.0 305.9 M364.6 257.0 L1286.0 303.3 M375.4 257.0 L1286.0 300.9 M386.1 257.0 L1286.0 298.7 M396.9 257.0 L1286.0 296.7 M407.7 257.0 L1286.0 294.8 M418.5 257.0 L1286.0 293.1 M429.3 257.0 L1286.0 291.4 M440.0 257.0 L1286.0 289.9 M450.8 257.0 L1286.0 288.5 M461.5 257.0 L1286.0 287.1 M472.3 257.0 L1286.0 285.9 M483.0 257.0 L1286.0 284.7 M493.8 257.0 L1286.0 283.5 M504.5 257.0 L1286.0 282.5 M515.2 257.0 L1286.0 281.5 M526.0 257.0 L1286.0 280.5 M536.7 257.0 L1286.0 279.6 M547.4 257.0 L1286.0 278.7 M558.1 257.0 L1286.0 277.9 M568.8 257.0 L1286.0 277.1 M579.5 257.0 L1286.0 276.4 M590.2 257.0 L1286.0 275.7 M600.9 257.0 L1286.0 275.0 M611.6 257.0 L1286.0 274.3 M622.2 257.0 L1286.0 273.7 M632.9 257.0 L1286.0 273.1 M643.6 257.0 L1286.0 272.5 M654.2 257.0 L1286.0 272.0 M664.9 257.0 L1286.0 271.4 M675.5 257.0 L1286.0 270.9 M686.2 257.0 L1286.0 270.4 M696.8 257.0 L1286.0 269.9 M707.4 257.0 L1286.0 269.5 M718.1 257.0 L1286.0 269.0 M728.7 257.0 L1286.0 268.6 M739.3 257.0 L1286.0 268.2 M749.9 257.0 L1286.0 267.8 M760.5 257.0 L1286.0 267.4 M771.1 257.0 L1286.0 267.0 M781.7 257.0 L1286.0 266.7 M792.3 257.0 L1286.0 266.3 M802.9 257.0 L1286.0 266.0 M813.5 257.0 L1286.0 265.7 M824.1 257.0 L1286.0 265.3 M834.6 257.0 L1286.0 265.0 M845.2 257.0 L1286.0 264.7 M855.8 257.0 L1286.0 264.4 M866.3 257.0 L1286.0 264.2 M876.9 257.0 L1286.0 263.9 M887.4 257.0 L1286.0 263.6 M898.0 257.0 L1286.0 263.4 M908.5 257.0 L1286.0 263.1 M919.0 257.0 L1286.0 262.9 M929.5 257.0 L1286.0 262.6 M940.1 257.0 L1286.0 262.4 M950.6 257.0 L1286.0 262.2 M961.1 257.0 L1286.0 261.9 M971.6 257.0 L1286.0 261.7 M982.1 257.0 L1286.0 261.5 M992.6 257.0 L1286.0 261.3 M1003.1 257.0 L1286.0 261.1 M1013.6 257.0 L1286.0 260.9 M1024.0 257.0 L1286.0 260.7 M1034.5 257.0 L1286.0 260.5 M1045.0 257.0 L1286.0 260.3 M1055.4 257.0 L1286.0 260.2 M421.1 257.0 L0.0 262.3 M434.4 257.0 L0.0 262.6 M447.7 257.0 L0.0 262.8 M461.0 257.0 L0.0 263.1 M474.3 257.0 L0.0 263.3 M487.6 257.0 L0.0 263.6 M500.9 257.0 L0.0 263.9 M514.2 257.0 L0.0 264.2 M527.4 257.0 L0.0 264.4 M540.7 257.0 L0.0 264.8 M553.9 257.0 L0.0 265.1 M567.2 257.0 L0.0 265.4 M580.4 257.0 L0.0 265.7 M593.6 257.0 L0.0 266.1 M606.8 257.0 L0.0 266.4 M620.0 257.0 L0.0 266.8 M633.2 257.0 L0.0 267.1 M646.4 257.0 L0.0 267.5 M659.6 257.0 L0.0 267.9 M672.8 257.0 L0.0 268.4 M685.9 257.0 L0.0 268.8 M699.1 257.0 L0.0 269.2 M712.2 257.0 L0.0 269.7 M725.4 257.0 L0.0 270.2 M738.5 257.0 L0.0 270.7 M751.6 257.0 L0.0 271.2 M764.8 257.0 L0.0 271.7 M777.9 257.0 L0.0 272.3 M791.0 257.0 L0.0 272.9 M804.1 257.0 L0.0 273.5 M817.1 257.0 L0.0 274.1 M830.2 257.0 L0.0 274.8 M843.3 257.0 L0.0 275.5 M856.3 257.0 L0.0 276.2 M869.4 257.0 L0.0 276.9 M882.4 257.0 L0.0 277.7 M895.5 257.0 L0.0 278.6 M908.5 257.0 L0.0 279.4 M921.5 257.0 L0.0 280.3 M934.5 257.0 L0.0 281.3 M947.6 257.0 L0.0 282.3 M960.5 257.0 L0.0 283.4 M973.5 257.0 L0.0 284.6 M986.5 257.0 L0.0 285.8 M999.5 257.0 L0.0 287.0 M1012.5 257.0 L0.0 288.4 M1025.4 257.0 L0.0 289.9 M1038.4 257.0 L0.0 291.4 M1051.3 257.0 L0.0 293.1 M1064.2 257.0 L0.0 294.8 M1077.2 257.0 L0.0 296.8 M1090.1 257.0 L0.0 298.8 M1103.0 257.0 L0.0 301.1 M1115.9 257.0 L0.0 303.5 M1128.8 257.0 L0.0 306.1 M1141.7 257.0 L0.0 309.0 M1154.6 257.0 L0.0 312.1 M1167.4 257.0 L0.0 315.6 M1180.3 257.0 L0.0 319.5 M1193.2 257.0 L0.0 323.8 M1206.0 257.0 L0.0 328.6 M1218.9 257.0 L0.0 334.0 M1231.7 257.0 L0.0 340.2 M1244.5 257.0 L0.0 347.3 M1257.3 257.0 L0.0 355.5 M1270.1 257.0 L0.0 365.1 M1283.0 257.0 L0.0 376.6 M1286.0 258.0 L0.0 390.4 M1286.0 259.6 L0.0 407.5 M1286.0 261.6 L0.0 429.1 M1286.0 264.2 L0.0 457.3 M1286.0 267.8 L0.0 495.5 M1286.0 272.9 L0.0 550.5 M1286.0 280.9 L0.0 636.2 M1286.0 295.0 L394.9 637.0 M1286.0 327.2 L792.4 637.0 M1286.0 471.3 L1189.7 637.0" stroke="#ffffff" stroke-opacity="0.235" stroke-width="1.5" fill="none"/>
<rect x="0" y="255" width="1286" height="330" fill="url(#gfade)"/>
<ellipse cx="570" cy="1.5" rx="9" ry="3.2" fill="#2c2c2c" opacity="0.8" filter="url(#b2)"/>
<!--FIGURE-->
<g filter="url(#desat)"><path d="M645.6 129.7 C638.4 130.5 642.0 136.7 636.7 138.6 C631.4 140.5 619.6 139.8 613.9 141.1 C608.2 142.4 605.7 143.4 602.5 146.2 C599.3 148.9 598.3 152.4 594.9 157.6 C591.5 162.9 586.2 171.6 582.0 177.7 C577.8 183.8 573.6 189.1 569.4 194.2 C565.2 199.3 561.1 204.0 556.7 208.2 C552.3 212.4 546.8 215.6 542.8 219.6 C538.8 223.6 535.8 227.6 532.6 232.2 C529.4 236.8 527.0 242.1 523.8 247.4 C520.6 252.7 516.6 258.8 513.6 263.8 C510.6 268.9 508.8 273.7 506.0 277.7 C503.2 281.7 499.4 284.9 497.1 287.9 C494.8 290.9 493.6 292.1 492.1 295.5 C490.6 298.9 489.2 303.8 488.3 308.2 C487.3 312.6 486.6 318.5 486.4 322.1 C486.2 325.7 486.2 329.5 487.0 329.7 C487.8 329.9 490.1 326.3 491.4 323.4 C492.7 320.4 493.4 315.4 494.6 312.0 C495.8 308.6 496.7 305.6 498.4 303.1 C500.1 300.6 504.0 296.2 504.7 296.8 C505.4 297.4 503.2 304.0 502.8 306.9 C502.4 309.8 501.8 312.6 502.2 313.9 C502.6 315.2 503.9 316.1 505.4 314.5 C506.9 312.9 509.3 308.2 511.1 304.4 C512.9 300.6 514.7 295.5 516.2 291.7 C517.7 287.9 518.1 284.7 520.0 281.5 C521.9 278.3 524.4 276.1 527.6 272.7 C530.8 269.3 535.4 264.5 539.0 261.4 C542.6 258.2 545.5 257.2 549.1 253.8 C552.7 250.4 557.1 245.5 560.5 241.1 C563.9 236.7 566.4 231.4 569.4 227.2 C572.4 223.0 574.8 219.6 578.2 215.8 C581.6 212.0 585.2 208.4 589.6 204.4 C594.0 200.4 600.6 195.3 604.8 191.7 C609.0 188.1 612.5 181.8 615.0 182.8 C617.5 183.9 618.1 193.1 620.0 198.0 C621.9 202.9 624.5 207.6 626.4 212.0 C628.3 216.4 630.5 219.5 631.5 224.6 C632.5 229.7 632.9 237.2 632.7 242.4 C632.5 247.6 630.8 252.1 630.2 256.0 C629.6 259.9 629.5 262.2 628.9 266.0 C628.3 269.8 627.4 274.7 626.4 279.0 C625.4 283.3 624.1 287.1 622.6 291.7 C621.1 296.3 619.2 301.6 617.5 306.9 C615.8 312.2 613.7 317.9 612.4 323.4 C611.1 328.9 610.4 334.5 609.9 339.8 C609.4 345.1 609.5 351.5 609.3 355.0 C609.1 358.5 608.4 357.2 608.8 361.0 C609.1 364.8 610.3 372.0 611.4 377.5 C612.5 383.0 614.1 388.6 615.2 393.9 C616.4 399.2 617.5 404.0 618.3 409.1 C619.1 414.2 620.1 419.3 620.2 424.4 C620.3 429.5 619.5 434.5 619.0 439.6 C618.5 444.7 618.0 449.9 617.1 454.8 C616.2 459.6 614.6 464.3 613.9 468.7 C613.1 473.1 612.9 477.7 612.6 481.4 C612.3 485.1 611.6 486.4 612.0 491.0 C612.4 495.6 614.0 503.0 615.2 508.7 C616.4 514.4 618.0 519.7 619.0 525.2 C620.0 530.7 621.0 536.4 621.5 541.7 C622.0 547.0 622.0 551.6 622.1 556.9 C622.2 562.2 622.3 568.3 622.1 573.4 C621.9 578.5 621.4 582.9 620.9 587.3 C620.4 591.7 619.2 596.4 619.0 600.0 C618.8 603.6 618.8 606.2 619.6 608.8 C620.4 611.4 621.1 614.2 624.0 615.8 C626.9 617.4 632.7 618.0 636.7 618.3 C640.7 618.6 645.6 618.7 648.1 617.7 C650.6 616.8 651.4 614.9 651.9 612.6 C652.4 610.3 652.1 607.4 651.3 603.8 C650.4 600.2 648.2 595.3 646.8 591.1 C645.4 586.9 644.0 583.2 643.0 578.4 C642.0 573.5 641.6 567.7 641.1 562.0 C640.6 556.3 640.0 549.7 639.9 544.2 C639.8 538.7 640.1 534.1 640.5 529.0 C640.9 523.9 641.5 518.9 642.4 513.8 C643.2 508.7 644.9 502.4 645.6 498.6 C646.3 494.8 646.5 494.9 646.8 491.0 C647.1 487.1 647.4 480.6 647.5 475.0 C647.6 469.4 647.2 462.6 647.5 457.3 C647.8 452.0 648.9 448.5 649.4 443.4 C649.9 438.3 650.2 432.2 650.6 426.9 C651.0 421.6 651.1 417.2 651.9 411.7 C652.6 406.2 654.0 399.6 655.1 393.9 C656.2 388.2 657.4 383.0 658.2 377.5 C659.0 372.0 659.7 365.8 660.1 361.0 C660.5 356.2 660.4 353.7 660.6 348.7 C660.8 343.7 661.1 334.4 661.5 331.0 C661.9 327.6 662.3 328.5 662.8 328.5 C663.2 328.5 664.0 327.6 664.2 331.0 C664.4 334.4 663.9 343.7 663.8 348.7 C663.6 353.7 663.0 356.2 663.3 361.0 C663.6 365.8 664.9 372.0 665.8 377.5 C666.6 383.0 667.5 388.2 668.4 393.9 C669.2 399.6 670.4 406.2 670.9 411.7 C671.4 417.2 671.4 421.6 671.5 426.9 C671.6 432.2 671.8 438.3 671.5 443.4 C671.2 448.5 670.1 452.4 669.6 457.3 C669.1 462.1 668.5 466.9 668.4 472.5 C668.3 478.1 668.6 485.8 669.0 491.0 C669.4 496.2 670.2 498.9 670.9 503.7 C671.6 508.6 672.9 514.6 673.4 520.1 C673.9 525.6 674.2 531.3 674.1 536.6 C674.0 541.9 673.1 547.1 672.8 551.8 C672.5 556.4 672.0 560.3 672.2 564.5 C672.4 568.7 673.1 573.4 674.1 577.2 C675.1 581.0 677.5 583.7 678.5 587.3 C679.5 590.9 679.4 595.3 680.4 598.7 C681.4 602.1 682.6 605.1 684.2 607.6 C685.8 610.1 687.7 612.6 689.9 613.9 C692.1 615.2 694.5 615.8 697.5 615.2 C700.5 614.6 705.2 612.0 707.7 610.1 C710.2 608.2 712.3 606.1 712.7 603.8 C713.1 601.5 711.7 599.4 710.2 596.2 C708.7 593.0 705.8 588.6 703.9 584.8 C702.0 581.0 700.3 577.2 698.8 573.4 C697.3 569.6 696.1 566.2 695.0 562.0 C693.9 557.8 692.7 552.9 692.4 548.0 C692.1 543.1 692.5 537.6 693.1 532.8 C693.8 527.9 695.1 523.8 696.3 518.9 C697.5 514.0 699.0 508.4 700.1 503.7 C701.2 499.1 702.1 494.7 702.6 491.0 C703.1 487.3 703.2 485.1 703.2 481.4 C703.2 477.7 702.8 473.1 702.6 468.7 C702.4 464.3 701.9 459.6 702.0 454.8 C702.1 449.9 702.8 444.7 703.2 439.6 C703.6 434.5 704.0 429.5 704.5 424.4 C705.0 419.3 705.4 414.2 706.4 409.1 C707.4 404.0 708.9 399.2 710.2 393.9 C711.5 388.6 713.0 383.0 714.0 377.5 C715.0 372.0 716.1 365.8 716.5 361.0 C716.9 356.2 716.3 353.9 716.1 348.7 C715.9 343.5 715.9 335.6 715.4 329.7 C714.9 323.8 713.9 318.5 712.9 313.2 C711.9 307.9 710.6 303.7 709.1 298.0 C707.6 292.3 705.5 285.3 704.0 279.0 C702.5 272.7 701.2 265.1 700.2 260.0 C699.2 254.9 698.5 253.3 698.3 248.7 C698.1 244.1 698.5 237.5 699.0 232.2 C699.5 226.9 700.8 222.1 701.5 217.0 C702.2 211.9 703.0 207.0 703.4 201.8 C703.8 196.6 701.8 186.8 704.0 186.0 C706.2 185.2 712.5 193.1 716.7 196.8 C720.9 200.5 725.2 204.4 729.4 208.2 C733.6 212.0 738.2 215.4 742.0 219.6 C745.8 223.8 748.8 228.9 752.2 233.5 C755.6 238.1 758.7 243.8 762.3 247.4 C765.9 251.0 770.8 252.5 773.7 255.0 C776.7 257.5 777.0 260.1 780.0 262.6 C783.0 265.1 788.5 267.4 791.5 270.1 C794.5 272.8 795.5 275.8 797.8 279.0 C800.1 282.2 803.3 285.9 805.4 289.1 C807.5 292.3 808.8 294.8 810.5 298.0 C812.2 301.2 813.8 304.8 815.5 308.2 C817.2 311.6 819.0 316.0 820.6 318.3 C822.2 320.6 823.6 321.9 825.0 322.1 C826.4 322.3 828.2 321.3 828.8 319.6 C829.4 317.9 829.2 315.0 828.8 312.0 C828.4 309.0 827.2 305.2 826.3 301.8 C825.3 298.4 824.9 295.1 823.1 291.7 C821.3 288.3 818.0 284.7 815.5 281.5 C813.0 278.3 810.2 275.9 807.9 272.7 C805.6 269.5 803.9 266.3 801.6 262.5 C799.3 258.7 797.0 254.2 794.0 250.0 C791.0 245.8 787.1 241.7 783.9 237.3 C780.7 232.9 778.2 227.4 775.0 223.4 C771.8 219.4 768.2 217.2 764.8 213.2 C761.4 209.2 758.1 204.2 754.7 199.3 C751.3 194.5 748.0 188.3 744.6 184.1 C741.2 179.9 737.4 177.5 734.4 173.9 C731.4 170.3 729.3 166.7 726.8 162.5 C724.3 158.3 722.6 152.0 719.2 148.6 C715.8 145.2 712.1 143.7 706.6 142.3 C701.1 141.0 690.6 142.0 686.1 140.5 C681.6 139.0 686.5 135.3 679.8 133.5 C673.0 131.7 652.8 128.8 645.6 129.7 Z" fill="url(#gbody)"/>
<g clip-path="url(#cbody)">
<mask id="mdark" maskUnits="userSpaceOnUse" x="0" y="0" width="1286" height="637"><rect width="1286" height="637" fill="#fff"/><path d="M645.6 129.7 C638.4 130.5 642.0 136.7 636.7 138.6 C631.4 140.5 619.6 139.8 613.9 141.1 C608.2 142.4 605.7 143.4 602.5 146.2 C599.3 148.9 598.3 152.4 594.9 157.6 C591.5 162.9 586.2 171.6 582.0 177.7 C577.8 183.8 573.6 189.1 569.4 194.2 C565.2 199.3 561.1 204.0 556.7 208.2 C552.3 212.4 546.8 215.6 542.8 219.6 C538.8 223.6 535.8 227.6 532.6 232.2 C529.4 236.8 527.0 242.1 523.8 247.4 C520.6 252.7 516.6 258.8 513.6 263.8 C510.6 268.9 508.8 273.7 506.0 277.7 C503.2 281.7 499.4 284.9 497.1 287.9 C494.8 290.9 493.6 292.1 492.1 295.5 C490.6 298.9 489.2 303.8 488.3 308.2 C487.3 312.6 486.6 318.5 486.4 322.1 C486.2 325.7 486.2 329.5 487.0 329.7 C487.8 329.9 490.1 326.3 491.4 323.4 C492.7 320.4 493.4 315.4 494.6 312.0 C495.8 308.6 496.7 305.6 498.4 303.1 C500.1 300.6 504.0 296.2 504.7 296.8 C505.4 297.4 503.2 304.0 502.8 306.9 C502.4 309.8 501.8 312.6 502.2 313.9 C502.6 315.2 503.9 316.1 505.4 314.5 C506.9 312.9 509.3 308.2 511.1 304.4 C512.9 300.6 514.7 295.5 516.2 291.7 C517.7 287.9 518.1 284.7 520.0 281.5 C521.9 278.3 524.4 276.1 527.6 272.7 C530.8 269.3 535.4 264.5 539.0 261.4 C542.6 258.2 545.5 257.2 549.1 253.8 C552.7 250.4 557.1 245.5 560.5 241.1 C563.9 236.7 566.4 231.4 569.4 227.2 C572.4 223.0 574.8 219.6 578.2 215.8 C581.6 212.0 585.2 208.4 589.6 204.4 C594.0 200.4 600.6 195.3 604.8 191.7 C609.0 188.1 612.5 181.8 615.0 182.8 C617.5 183.9 618.1 193.1 620.0 198.0 C621.9 202.9 624.5 207.6 626.4 212.0 C628.3 216.4 630.5 219.5 631.5 224.6 C632.5 229.7 632.9 237.2 632.7 242.4 C632.5 247.6 630.8 252.1 630.2 256.0 C629.6 259.9 629.5 262.2 628.9 266.0 C628.3 269.8 627.4 274.7 626.4 279.0 C625.4 283.3 624.1 287.1 622.6 291.7 C621.1 296.3 619.2 301.6 617.5 306.9 C615.8 312.2 613.7 317.9 612.4 323.4 C611.1 328.9 610.4 334.5 609.9 339.8 C609.4 345.1 609.5 351.5 609.3 355.0 C609.1 358.5 608.4 357.2 608.8 361.0 C609.1 364.8 610.3 372.0 611.4 377.5 C612.5 383.0 614.1 388.6 615.2 393.9 C616.4 399.2 617.5 404.0 618.3 409.1 C619.1 414.2 620.1 419.3 620.2 424.4 C620.3 429.5 619.5 434.5 619.0 439.6 C618.5 444.7 618.0 449.9 617.1 454.8 C616.2 459.6 614.6 464.3 613.9 468.7 C613.1 473.1 612.9 477.7 612.6 481.4 C612.3 485.1 611.6 486.4 612.0 491.0 C612.4 495.6 614.0 503.0 615.2 508.7 C616.4 514.4 618.0 519.7 619.0 525.2 C620.0 530.7 621.0 536.4 621.5 541.7 C622.0 547.0 622.0 551.6 622.1 556.9 C622.2 562.2 622.3 568.3 622.1 573.4 C621.9 578.5 621.4 582.9 620.9 587.3 C620.4 591.7 619.2 596.4 619.0 600.0 C618.8 603.6 618.8 606.2 619.6 608.8 C620.4 611.4 621.1 614.2 624.0 615.8 C626.9 617.4 632.7 618.0 636.7 618.3 C640.7 618.6 645.6 618.7 648.1 617.7 C650.6 616.8 651.4 614.9 651.9 612.6 C652.4 610.3 652.1 607.4 651.3 603.8 C650.4 600.2 648.2 595.3 646.8 591.1 C645.4 586.9 644.0 583.2 643.0 578.4 C642.0 573.5 641.6 567.7 641.1 562.0 C640.6 556.3 640.0 549.7 639.9 544.2 C639.8 538.7 640.1 534.1 640.5 529.0 C640.9 523.9 641.5 518.9 642.4 513.8 C643.2 508.7 644.9 502.4 645.6 498.6 C646.3 494.8 646.5 494.9 646.8 491.0 C647.1 487.1 647.4 480.6 647.5 475.0 C647.6 469.4 647.2 462.6 647.5 457.3 C647.8 452.0 648.9 448.5 649.4 443.4 C649.9 438.3 650.2 432.2 650.6 426.9 C651.0 421.6 651.1 417.2 651.9 411.7 C652.6 406.2 654.0 399.6 655.1 393.9 C656.2 388.2 657.4 383.0 658.2 377.5 C659.0 372.0 659.7 365.8 660.1 361.0 C660.5 356.2 660.4 353.7 660.6 348.7 C660.8 343.7 661.1 334.4 661.5 331.0 C661.9 327.6 662.3 328.5 662.8 328.5 C663.2 328.5 664.0 327.6 664.2 331.0 C664.4 334.4 663.9 343.7 663.8 348.7 C663.6 353.7 663.0 356.2 663.3 361.0 C663.6 365.8 664.9 372.0 665.8 377.5 C666.6 383.0 667.5 388.2 668.4 393.9 C669.2 399.6 670.4 406.2 670.9 411.7 C671.4 417.2 671.4 421.6 671.5 426.9 C671.6 432.2 671.8 438.3 671.5 443.4 C671.2 448.5 670.1 452.4 669.6 457.3 C669.1 462.1 668.5 466.9 668.4 472.5 C668.3 478.1 668.6 485.8 669.0 491.0 C669.4 496.2 670.2 498.9 670.9 503.7 C671.6 508.6 672.9 514.6 673.4 520.1 C673.9 525.6 674.2 531.3 674.1 536.6 C674.0 541.9 673.1 547.1 672.8 551.8 C672.5 556.4 672.0 560.3 672.2 564.5 C672.4 568.7 673.1 573.4 674.1 577.2 C675.1 581.0 677.5 583.7 678.5 587.3 C679.5 590.9 679.4 595.3 680.4 598.7 C681.4 602.1 682.6 605.1 684.2 607.6 C685.8 610.1 687.7 612.6 689.9 613.9 C692.1 615.2 694.5 615.8 697.5 615.2 C700.5 614.6 705.2 612.0 707.7 610.1 C710.2 608.2 712.3 606.1 712.7 603.8 C713.1 601.5 711.7 599.4 710.2 596.2 C708.7 593.0 705.8 588.6 703.9 584.8 C702.0 581.0 700.3 577.2 698.8 573.4 C697.3 569.6 696.1 566.2 695.0 562.0 C693.9 557.8 692.7 552.9 692.4 548.0 C692.1 543.1 692.5 537.6 693.1 532.8 C693.8 527.9 695.1 523.8 696.3 518.9 C697.5 514.0 699.0 508.4 700.1 503.7 C701.2 499.1 702.1 494.7 702.6 491.0 C703.1 487.3 703.2 485.1 703.2 481.4 C703.2 477.7 702.8 473.1 702.6 468.7 C702.4 464.3 701.9 459.6 702.0 454.8 C702.1 449.9 702.8 444.7 703.2 439.6 C703.6 434.5 704.0 429.5 704.5 424.4 C705.0 419.3 705.4 414.2 706.4 409.1 C707.4 404.0 708.9 399.2 710.2 393.9 C711.5 388.6 713.0 383.0 714.0 377.5 C715.0 372.0 716.1 365.8 716.5 361.0 C716.9 356.2 716.3 353.9 716.1 348.7 C715.9 343.5 715.9 335.6 715.4 329.7 C714.9 323.8 713.9 318.5 712.9 313.2 C711.9 307.9 710.6 303.7 709.1 298.0 C707.6 292.3 705.5 285.3 704.0 279.0 C702.5 272.7 701.2 265.1 700.2 260.0 C699.2 254.9 698.5 253.3 698.3 248.7 C698.1 244.1 698.5 237.5 699.0 232.2 C699.5 226.9 700.8 222.1 701.5 217.0 C702.2 211.9 703.0 207.0 703.4 201.8 C703.8 196.6 701.8 186.8 704.0 186.0 C706.2 185.2 712.5 193.1 716.7 196.8 C720.9 200.5 725.2 204.4 729.4 208.2 C733.6 212.0 738.2 215.4 742.0 219.6 C745.8 223.8 748.8 228.9 752.2 233.5 C755.6 238.1 758.7 243.8 762.3 247.4 C765.9 251.0 770.8 252.5 773.7 255.0 C776.7 257.5 777.0 260.1 780.0 262.6 C783.0 265.1 788.5 267.4 791.5 270.1 C794.5 272.8 795.5 275.8 797.8 279.0 C800.1 282.2 803.3 285.9 805.4 289.1 C807.5 292.3 808.8 294.8 810.5 298.0 C812.2 301.2 813.8 304.8 815.5 308.2 C817.2 311.6 819.0 316.0 820.6 318.3 C822.2 320.6 823.6 321.9 825.0 322.1 C826.4 322.3 828.2 321.3 828.8 319.6 C829.4 317.9 829.2 315.0 828.8 312.0 C828.4 309.0 827.2 305.2 826.3 301.8 C825.3 298.4 824.9 295.1 823.1 291.7 C821.3 288.3 818.0 284.7 815.5 281.5 C813.0 278.3 810.2 275.9 807.9 272.7 C805.6 269.5 803.9 266.3 801.6 262.5 C799.3 258.7 797.0 254.2 794.0 250.0 C791.0 245.8 787.1 241.7 783.9 237.3 C780.7 232.9 778.2 227.4 775.0 223.4 C771.8 219.4 768.2 217.2 764.8 213.2 C761.4 209.2 758.1 204.2 754.7 199.3 C751.3 194.5 748.0 188.3 744.6 184.1 C741.2 179.9 737.4 177.5 734.4 173.9 C731.4 170.3 729.3 166.7 726.8 162.5 C724.3 158.3 722.6 152.0 719.2 148.6 C715.8 145.2 712.1 143.7 706.6 142.3 C701.1 141.0 690.6 142.0 686.1 140.5 C681.6 139.0 686.5 135.3 679.8 133.5 C673.0 131.7 652.8 128.8 645.6 129.7 Z" fill="#000" transform="translate(-5,-3)" filter="url(#b2)"/></mask>
<mask id="mlight" maskUnits="userSpaceOnUse" x="0" y="0" width="1286" height="637"><rect width="1286" height="637" fill="#fff"/><path d="M645.6 129.7 C638.4 130.5 642.0 136.7 636.7 138.6 C631.4 140.5 619.6 139.8 613.9 141.1 C608.2 142.4 605.7 143.4 602.5 146.2 C599.3 148.9 598.3 152.4 594.9 157.6 C591.5 162.9 586.2 171.6 582.0 177.7 C577.8 183.8 573.6 189.1 569.4 194.2 C565.2 199.3 561.1 204.0 556.7 208.2 C552.3 212.4 546.8 215.6 542.8 219.6 C538.8 223.6 535.8 227.6 532.6 232.2 C529.4 236.8 527.0 242.1 523.8 247.4 C520.6 252.7 516.6 258.8 513.6 263.8 C510.6 268.9 508.8 273.7 506.0 277.7 C503.2 281.7 499.4 284.9 497.1 287.9 C494.8 290.9 493.6 292.1 492.1 295.5 C490.6 298.9 489.2 303.8 488.3 308.2 C487.3 312.6 486.6 318.5 486.4 322.1 C486.2 325.7 486.2 329.5 487.0 329.7 C487.8 329.9 490.1 326.3 491.4 323.4 C492.7 320.4 493.4 315.4 494.6 312.0 C495.8 308.6 496.7 305.6 498.4 303.1 C500.1 300.6 504.0 296.2 504.7 296.8 C505.4 297.4 503.2 304.0 502.8 306.9 C502.4 309.8 501.8 312.6 502.2 313.9 C502.6 315.2 503.9 316.1 505.4 314.5 C506.9 312.9 509.3 308.2 511.1 304.4 C512.9 300.6 514.7 295.5 516.2 291.7 C517.7 287.9 518.1 284.7 520.0 281.5 C521.9 278.3 524.4 276.1 527.6 272.7 C530.8 269.3 535.4 264.5 539.0 261.4 C542.6 258.2 545.5 257.2 549.1 253.8 C552.7 250.4 557.1 245.5 560.5 241.1 C563.9 236.7 566.4 231.4 569.4 227.2 C572.4 223.0 574.8 219.6 578.2 215.8 C581.6 212.0 585.2 208.4 589.6 204.4 C594.0 200.4 600.6 195.3 604.8 191.7 C609.0 188.1 612.5 181.8 615.0 182.8 C617.5 183.9 618.1 193.1 620.0 198.0 C621.9 202.9 624.5 207.6 626.4 212.0 C628.3 216.4 630.5 219.5 631.5 224.6 C632.5 229.7 632.9 237.2 632.7 242.4 C632.5 247.6 630.8 252.1 630.2 256.0 C629.6 259.9 629.5 262.2 628.9 266.0 C628.3 269.8 627.4 274.7 626.4 279.0 C625.4 283.3 624.1 287.1 622.6 291.7 C621.1 296.3 619.2 301.6 617.5 306.9 C615.8 312.2 613.7 317.9 612.4 323.4 C611.1 328.9 610.4 334.5 609.9 339.8 C609.4 345.1 609.5 351.5 609.3 355.0 C609.1 358.5 608.4 357.2 608.8 361.0 C609.1 364.8 610.3 372.0 611.4 377.5 C612.5 383.0 614.1 388.6 615.2 393.9 C616.4 399.2 617.5 404.0 618.3 409.1 C619.1 414.2 620.1 419.3 620.2 424.4 C620.3 429.5 619.5 434.5 619.0 439.6 C618.5 444.7 618.0 449.9 617.1 454.8 C616.2 459.6 614.6 464.3 613.9 468.7 C613.1 473.1 612.9 477.7 612.6 481.4 C612.3 485.1 611.6 486.4 612.0 491.0 C612.4 495.6 614.0 503.0 615.2 508.7 C616.4 514.4 618.0 519.7 619.0 525.2 C620.0 530.7 621.0 536.4 621.5 541.7 C622.0 547.0 622.0 551.6 622.1 556.9 C622.2 562.2 622.3 568.3 622.1 573.4 C621.9 578.5 621.4 582.9 620.9 587.3 C620.4 591.7 619.2 596.4 619.0 600.0 C618.8 603.6 618.8 606.2 619.6 608.8 C620.4 611.4 621.1 614.2 624.0 615.8 C626.9 617.4 632.7 618.0 636.7 618.3 C640.7 618.6 645.6 618.7 648.1 617.7 C650.6 616.8 651.4 614.9 651.9 612.6 C652.4 610.3 652.1 607.4 651.3 603.8 C650.4 600.2 648.2 595.3 646.8 591.1 C645.4 586.9 644.0 583.2 643.0 578.4 C642.0 573.5 641.6 567.7 641.1 562.0 C640.6 556.3 640.0 549.7 639.9 544.2 C639.8 538.7 640.1 534.1 640.5 529.0 C640.9 523.9 641.5 518.9 642.4 513.8 C643.2 508.7 644.9 502.4 645.6 498.6 C646.3 494.8 646.5 494.9 646.8 491.0 C647.1 487.1 647.4 480.6 647.5 475.0 C647.6 469.4 647.2 462.6 647.5 457.3 C647.8 452.0 648.9 448.5 649.4 443.4 C649.9 438.3 650.2 432.2 650.6 426.9 C651.0 421.6 651.1 417.2 651.9 411.7 C652.6 406.2 654.0 399.6 655.1 393.9 C656.2 388.2 657.4 383.0 658.2 377.5 C659.0 372.0 659.7 365.8 660.1 361.0 C660.5 356.2 660.4 353.7 660.6 348.7 C660.8 343.7 661.1 334.4 661.5 331.0 C661.9 327.6 662.3 328.5 662.8 328.5 C663.2 328.5 664.0 327.6 664.2 331.0 C664.4 334.4 663.9 343.7 663.8 348.7 C663.6 353.7 663.0 356.2 663.3 361.0 C663.6 365.8 664.9 372.0 665.8 377.5 C666.6 383.0 667.5 388.2 668.4 393.9 C669.2 399.6 670.4 406.2 670.9 411.7 C671.4 417.2 671.4 421.6 671.5 426.9 C671.6 432.2 671.8 438.3 671.5 443.4 C671.2 448.5 670.1 452.4 669.6 457.3 C669.1 462.1 668.5 466.9 668.4 472.5 C668.3 478.1 668.6 485.8 669.0 491.0 C669.4 496.2 670.2 498.9 670.9 503.7 C671.6 508.6 672.9 514.6 673.4 520.1 C673.9 525.6 674.2 531.3 674.1 536.6 C674.0 541.9 673.1 547.1 672.8 551.8 C672.5 556.4 672.0 560.3 672.2 564.5 C672.4 568.7 673.1 573.4 674.1 577.2 C675.1 581.0 677.5 583.7 678.5 587.3 C679.5 590.9 679.4 595.3 680.4 598.7 C681.4 602.1 682.6 605.1 684.2 607.6 C685.8 610.1 687.7 612.6 689.9 613.9 C692.1 615.2 694.5 615.8 697.5 615.2 C700.5 614.6 705.2 612.0 707.7 610.1 C710.2 608.2 712.3 606.1 712.7 603.8 C713.1 601.5 711.7 599.4 710.2 596.2 C708.7 593.0 705.8 588.6 703.9 584.8 C702.0 581.0 700.3 577.2 698.8 573.4 C697.3 569.6 696.1 566.2 695.0 562.0 C693.9 557.8 692.7 552.9 692.4 548.0 C692.1 543.1 692.5 537.6 693.1 532.8 C693.8 527.9 695.1 523.8 696.3 518.9 C697.5 514.0 699.0 508.4 700.1 503.7 C701.2 499.1 702.1 494.7 702.6 491.0 C703.1 487.3 703.2 485.1 703.2 481.4 C703.2 477.7 702.8 473.1 702.6 468.7 C702.4 464.3 701.9 459.6 702.0 454.8 C702.1 449.9 702.8 444.7 703.2 439.6 C703.6 434.5 704.0 429.5 704.5 424.4 C705.0 419.3 705.4 414.2 706.4 409.1 C707.4 404.0 708.9 399.2 710.2 393.9 C711.5 388.6 713.0 383.0 714.0 377.5 C715.0 372.0 716.1 365.8 716.5 361.0 C716.9 356.2 716.3 353.9 716.1 348.7 C715.9 343.5 715.9 335.6 715.4 329.7 C714.9 323.8 713.9 318.5 712.9 313.2 C711.9 307.9 710.6 303.7 709.1 298.0 C707.6 292.3 705.5 285.3 704.0 279.0 C702.5 272.7 701.2 265.1 700.2 260.0 C699.2 254.9 698.5 253.3 698.3 248.7 C698.1 244.1 698.5 237.5 699.0 232.2 C699.5 226.9 700.8 222.1 701.5 217.0 C702.2 211.9 703.0 207.0 703.4 201.8 C703.8 196.6 701.8 186.8 704.0 186.0 C706.2 185.2 712.5 193.1 716.7 196.8 C720.9 200.5 725.2 204.4 729.4 208.2 C733.6 212.0 738.2 215.4 742.0 219.6 C745.8 223.8 748.8 228.9 752.2 233.5 C755.6 238.1 758.7 243.8 762.3 247.4 C765.9 251.0 770.8 252.5 773.7 255.0 C776.7 257.5 777.0 260.1 780.0 262.6 C783.0 265.1 788.5 267.4 791.5 270.1 C794.5 272.8 795.5 275.8 797.8 279.0 C800.1 282.2 803.3 285.9 805.4 289.1 C807.5 292.3 808.8 294.8 810.5 298.0 C812.2 301.2 813.8 304.8 815.5 308.2 C817.2 311.6 819.0 316.0 820.6 318.3 C822.2 320.6 823.6 321.9 825.0 322.1 C826.4 322.3 828.2 321.3 828.8 319.6 C829.4 317.9 829.2 315.0 828.8 312.0 C828.4 309.0 827.2 305.2 826.3 301.8 C825.3 298.4 824.9 295.1 823.1 291.7 C821.3 288.3 818.0 284.7 815.5 281.5 C813.0 278.3 810.2 275.9 807.9 272.7 C805.6 269.5 803.9 266.3 801.6 262.5 C799.3 258.7 797.0 254.2 794.0 250.0 C791.0 245.8 787.1 241.7 783.9 237.3 C780.7 232.9 778.2 227.4 775.0 223.4 C771.8 219.4 768.2 217.2 764.8 213.2 C761.4 209.2 758.1 204.2 754.7 199.3 C751.3 194.5 748.0 188.3 744.6 184.1 C741.2 179.9 737.4 177.5 734.4 173.9 C731.4 170.3 729.3 166.7 726.8 162.5 C724.3 158.3 722.6 152.0 719.2 148.6 C715.8 145.2 712.1 143.7 706.6 142.3 C701.1 141.0 690.6 142.0 686.1 140.5 C681.6 139.0 686.5 135.3 679.8 133.5 C673.0 131.7 652.8 128.8 645.6 129.7 Z" fill="#000" transform="translate(3,3)" filter="url(#b2)"/></mask>
<path d="M610.0 153.0 C614.0 148.5 629.5 147.3 638.0 149.0 C646.5 150.7 653.0 163.0 661.0 163.0 C669.0 163.0 677.2 150.7 686.0 149.0 C694.8 147.3 710.3 148.5 714.0 153.0 C717.7 157.5 710.0 169.2 708.0 176.0 C706.0 182.8 706.2 190.5 702.0 194.0 C697.8 197.5 689.8 197.0 683.0 197.0 C676.2 197.0 668.2 194.0 661.0 194.0 C653.8 194.0 646.8 197.0 640.0 197.0 C633.2 197.0 624.3 197.5 620.0 194.0 C615.7 190.5 615.7 182.8 614.0 176.0 C612.3 169.2 606.0 157.5 610.0 153.0 Z" fill="#46533d" opacity="0.85" filter="url(#b2)"/>
<path d="M640.0 135.0 C646.2 134.0 653.8 138.0 661.0 138.0 C668.2 138.0 676.8 134.0 683.0 135.0 C689.2 136.0 701.7 139.7 698.0 144.0 C694.3 148.3 673.3 161.0 661.0 161.0 C648.7 161.0 627.5 148.3 624.0 144.0 C620.5 139.7 633.8 136.0 640.0 135.0 Z" fill="#323e2e" opacity="0.75" filter="url(#b2)"/>
<ellipse cx="661.0" cy="149.0" rx="9" ry="9" fill="#4b5a40" opacity="0.7" filter="url(#b2)"/>
<ellipse cx="661.0" cy="181.0" rx="5" ry="16" fill="#2e3a2a" opacity="0.55" filter="url(#b2)"/>
<ellipse cx="634.0" cy="175.0" rx="10" ry="13" fill="#59664c" opacity="0.5" filter="url(#b4)"/>
<ellipse cx="674.0" cy="179.0" rx="8" ry="13" fill="#56634a" opacity="0.45" filter="url(#b4)"/>
<path d="M618.0 196.0 C620.0 192.5 632.8 199.8 640.0 200.0 C647.2 200.2 653.8 197.0 661.0 197.0 C668.2 197.0 675.8 200.2 683.0 200.0 C690.2 199.8 700.8 192.5 704.0 196.0 C707.2 199.5 702.8 213.5 702.0 221.0 C701.2 228.5 711.0 237.7 699.0 241.0 C687.0 244.3 641.8 244.3 630.0 241.0 C618.2 237.7 630.0 228.5 628.0 221.0 C626.0 213.5 616.0 199.5 618.0 196.0 Z" fill="#232d21" opacity="0.75" filter="url(#b4)"/>
<path d="M642.0 209.0 C645.5 205.2 654.7 213.0 661.0 213.0 C667.3 213.0 676.5 205.2 680.0 209.0 C683.5 212.8 682.0 223.2 682.0 236.0 C682.0 248.8 683.5 276.5 680.0 286.0 C676.5 295.5 667.3 293.0 661.0 293.0 C654.7 293.0 645.5 295.5 642.0 286.0 C638.5 276.5 640.0 248.8 640.0 236.0 C640.0 223.2 638.5 212.8 642.0 209.0 Z" fill="#2c3829" opacity="0.7" filter="url(#b4)"/>
<ellipse cx="661.0" cy="251.0" rx="2" ry="36" fill="#1c241b" opacity="0.55" filter="url(#b2)"/>
<ellipse cx="646.0" cy="241.0" rx="3" ry="40" fill="#1f281d" opacity="0.45" filter="url(#b2)"/>
<ellipse cx="677.0" cy="241.0" rx="3" ry="40" fill="#1f281d" opacity="0.45" filter="url(#b2)"/>
<ellipse cx="661.0" cy="289.0" rx="12" ry="27" fill="#33402d" opacity="0.8" filter="url(#b4)"/>
<ellipse cx="661.0" cy="327.0" rx="20" ry="8" fill="#161c15" opacity="0.7" filter="url(#b4)"/>
<ellipse cx="620.0" cy="331.0" rx="7" ry="30" fill="#36432e" opacity="0.7" filter="url(#b4)"/>
<ellipse cx="703.0" cy="331.0" rx="7" ry="30" fill="#2e3a28" opacity="0.5" filter="url(#b4)"/>
<ellipse cx="620.0" cy="183.0" rx="5" ry="12" fill="#050805" opacity="0.85" filter="url(#b2)" transform="rotate(-20 620.0 183.0)"/>
<ellipse cx="701.0" cy="187.0" rx="5" ry="14" fill="#050805" opacity="0.8" filter="url(#b2)" transform="rotate(15 701.0 187.0)"/>
<path d="M647.0 157.0 C647.0 160.2 646.8 169.5 647.0 176.0 C647.2 182.5 647.8 192.7 648.0 196.0" fill="none" stroke="#2c3828" stroke-width="1.1" opacity="0.8"/>
<path d="M686.0 153.0 C686.3 156.8 687.3 168.8 688.0 176.0 C688.7 183.2 689.7 192.7 690.0 196.0" fill="none" stroke="#2c3828" stroke-width="1.1" opacity="0.8"/>
<path d="M613.0 153.0 C617.2 152.5 630.0 148.2 638.0 150.0 C646.0 151.8 653.0 164.0 661.0 164.0 C669.0 164.0 677.2 151.8 686.0 150.0 C694.8 148.2 709.3 152.5 714.0 153.0" fill="none" stroke="#2a3526" stroke-width="1.2" opacity="0.55" filter="url(#b2)"/>
<path d="M712.0 153.0 C715.0 156.3 723.7 165.3 730.0 173.0 C736.3 180.7 743.0 190.3 750.0 199.0 C757.0 207.7 765.0 216.3 772.0 225.0 C779.0 233.7 788.7 246.7 792.0 251.0" fill="none" stroke="#222b20" stroke-width="16" opacity="0.6" filter="url(#b4)"/>
<path d="M724.0 159.0 C727.3 163.7 737.3 177.7 744.0 187.0 C750.7 196.3 757.3 206.0 764.0 215.0 C770.7 224.0 780.7 236.7 784.0 241.0" fill="none" stroke="#465640" stroke-width="3" opacity="0.5" filter="url(#b2)"/>
<path d="M614.0 361.0 C614.7 366.0 616.7 381.0 618.0 391.0 C619.3 401.0 622.0 410.2 622.0 421.0 C622.0 431.8 619.2 444.3 618.0 456.0 C616.8 467.7 614.5 478.5 615.0 491.0 C615.5 503.5 619.3 517.7 621.0 531.0 C622.7 544.3 624.3 564.3 625.0 571.0" fill="none" stroke="#2c3826" stroke-width="7" opacity="0.7" filter="url(#b4)"/>
<path d="M656.0 361.0 C655.3 367.7 653.3 388.5 652.0 401.0 C650.7 413.5 649.2 424.3 648.0 436.0 C646.8 447.7 646.0 458.5 645.0 471.0 C644.0 483.5 642.5 504.3 642.0 511.0" fill="none" stroke="#0d120d" stroke-width="8" opacity="0.7" filter="url(#b4)"/>
<path d="M667.0 361.0 C667.8 367.7 670.8 388.5 672.0 401.0 C673.2 413.5 674.2 424.3 674.0 436.0 C673.8 447.7 671.2 456.8 671.0 471.0 C670.8 485.2 672.3 504.3 673.0 521.0 C673.7 537.7 674.7 562.7 675.0 571.0" fill="none" stroke="#0e130e" stroke-width="7" opacity="0.65" filter="url(#b4)"/>
<path d="M712.0 361.0 C711.0 367.7 707.8 388.5 706.0 401.0 C704.2 413.5 702.0 424.3 701.0 436.0 C700.0 447.7 700.5 458.5 700.0 471.0 C699.5 483.5 699.3 499.3 698.0 511.0 C696.7 522.7 693.0 536.0 692.0 541.0" fill="none" stroke="#10150f" stroke-width="8" opacity="0.7" filter="url(#b4)"/>
<ellipse cx="688.0" cy="391.0" rx="9" ry="30" fill="#283222" opacity="0.6" filter="url(#b4)"/>
<ellipse cx="634.0" cy="391.0" rx="9" ry="30" fill="#2a3524" opacity="0.5" filter="url(#b4)"/>
<path d="M621.0 425.0 C623.2 425.3 629.2 427.0 634.0 427.0 C638.8 427.0 647.3 425.3 650.0 425.0" fill="none" stroke="#151b14" stroke-width="1" opacity="0.7"/>
<path d="M671.0 425.0 C673.8 424.7 682.3 423.7 688.0 423.0 C693.7 422.3 702.2 421.3 705.0 421.0" fill="none" stroke="#151b14" stroke-width="1" opacity="0.7"/>
<path d="M640.0 363.0 C640.3 367.7 641.5 380.7 642.0 391.0 C642.5 401.3 642.8 419.3 643.0 425.0" fill="none" stroke="#131912" stroke-width="1" opacity="0.6"/>
<path d="M690.0 363.0 C690.2 367.7 691.0 381.0 691.0 391.0 C691.0 401.0 690.2 417.7 690.0 423.0" fill="none" stroke="#131912" stroke-width="1" opacity="0.6"/>
<ellipse cx="630.0" cy="581.0" rx="4" ry="22" fill="#4a5b40" opacity="0.6" filter="url(#b4)"/>
<ellipse cx="634.0" cy="606.0" rx="10" ry="8" fill="#34422d" opacity="0.7" filter="url(#b4)"/>
<ellipse cx="686.0" cy="566.0" rx="4" ry="18" fill="#3d4c36" opacity="0.55" filter="url(#b4)"/>
<ellipse cx="698.0" cy="603.0" rx="9" ry="7" fill="#2f3b29" opacity="0.6" filter="url(#b4)"/>
<path d="M645.6 129.7 C638.4 130.5 642.0 136.7 636.7 138.6 C631.4 140.5 619.6 139.8 613.9 141.1 C608.2 142.4 605.7 143.4 602.5 146.2 C599.3 148.9 598.3 152.4 594.9 157.6 C591.5 162.9 586.2 171.6 582.0 177.7 C577.8 183.8 573.6 189.1 569.4 194.2 C565.2 199.3 561.1 204.0 556.7 208.2 C552.3 212.4 546.8 215.6 542.8 219.6 C538.8 223.6 535.8 227.6 532.6 232.2 C529.4 236.8 527.0 242.1 523.8 247.4 C520.6 252.7 516.6 258.8 513.6 263.8 C510.6 268.9 508.8 273.7 506.0 277.7 C503.2 281.7 499.4 284.9 497.1 287.9 C494.8 290.9 493.6 292.1 492.1 295.5 C490.6 298.9 489.2 303.8 488.3 308.2 C487.3 312.6 486.6 318.5 486.4 322.1 C486.2 325.7 486.2 329.5 487.0 329.7 C487.8 329.9 490.1 326.3 491.4 323.4 C492.7 320.4 493.4 315.4 494.6 312.0 C495.8 308.6 496.7 305.6 498.4 303.1 C500.1 300.6 504.0 296.2 504.7 296.8 C505.4 297.4 503.2 304.0 502.8 306.9 C502.4 309.8 501.8 312.6 502.2 313.9 C502.6 315.2 503.9 316.1 505.4 314.5 C506.9 312.9 509.3 308.2 511.1 304.4 C512.9 300.6 514.7 295.5 516.2 291.7 C517.7 287.9 518.1 284.7 520.0 281.5 C521.9 278.3 524.4 276.1 527.6 272.7 C530.8 269.3 535.4 264.5 539.0 261.4 C542.6 258.2 545.5 257.2 549.1 253.8 C552.7 250.4 557.1 245.5 560.5 241.1 C563.9 236.7 566.4 231.4 569.4 227.2 C572.4 223.0 574.8 219.6 578.2 215.8 C581.6 212.0 585.2 208.4 589.6 204.4 C594.0 200.4 600.6 195.3 604.8 191.7 C609.0 188.1 612.5 181.8 615.0 182.8 C617.5 183.9 618.1 193.1 620.0 198.0 C621.9 202.9 624.5 207.6 626.4 212.0 C628.3 216.4 630.5 219.5 631.5 224.6 C632.5 229.7 632.9 237.2 632.7 242.4 C632.5 247.6 630.8 252.1 630.2 256.0 C629.6 259.9 629.5 262.2 628.9 266.0 C628.3 269.8 627.4 274.7 626.4 279.0 C625.4 283.3 624.1 287.1 622.6 291.7 C621.1 296.3 619.2 301.6 617.5 306.9 C615.8 312.2 613.7 317.9 612.4 323.4 C611.1 328.9 610.4 334.5 609.9 339.8 C609.4 345.1 609.5 351.5 609.3 355.0 C609.1 358.5 608.4 357.2 608.8 361.0 C609.1 364.8 610.3 372.0 611.4 377.5 C612.5 383.0 614.1 388.6 615.2 393.9 C616.4 399.2 617.5 404.0 618.3 409.1 C619.1 414.2 620.1 419.3 620.2 424.4 C620.3 429.5 619.5 434.5 619.0 439.6 C618.5 444.7 618.0 449.9 617.1 454.8 C616.2 459.6 614.6 464.3 613.9 468.7 C613.1 473.1 612.9 477.7 612.6 481.4 C612.3 485.1 611.6 486.4 612.0 491.0 C612.4 495.6 614.0 503.0 615.2 508.7 C616.4 514.4 618.0 519.7 619.0 525.2 C620.0 530.7 621.0 536.4 621.5 541.7 C622.0 547.0 622.0 551.6 622.1 556.9 C622.2 562.2 622.3 568.3 622.1 573.4 C621.9 578.5 621.4 582.9 620.9 587.3 C620.4 591.7 619.2 596.4 619.0 600.0 C618.8 603.6 618.8 606.2 619.6 608.8 C620.4 611.4 621.1 614.2 624.0 615.8 C626.9 617.4 632.7 618.0 636.7 618.3 C640.7 618.6 645.6 618.7 648.1 617.7 C650.6 616.8 651.4 614.9 651.9 612.6 C652.4 610.3 652.1 607.4 651.3 603.8 C650.4 600.2 648.2 595.3 646.8 591.1 C645.4 586.9 644.0 583.2 643.0 578.4 C642.0 573.5 641.6 567.7 641.1 562.0 C640.6 556.3 640.0 549.7 639.9 544.2 C639.8 538.7 640.1 534.1 640.5 529.0 C640.9 523.9 641.5 518.9 642.4 513.8 C643.2 508.7 644.9 502.4 645.6 498.6 C646.3 494.8 646.5 494.9 646.8 491.0 C647.1 487.1 647.4 480.6 647.5 475.0 C647.6 469.4 647.2 462.6 647.5 457.3 C647.8 452.0 648.9 448.5 649.4 443.4 C649.9 438.3 650.2 432.2 650.6 426.9 C651.0 421.6 651.1 417.2 651.9 411.7 C652.6 406.2 654.0 399.6 655.1 393.9 C656.2 388.2 657.4 383.0 658.2 377.5 C659.0 372.0 659.7 365.8 660.1 361.0 C660.5 356.2 660.4 353.7 660.6 348.7 C660.8 343.7 661.1 334.4 661.5 331.0 C661.9 327.6 662.3 328.5 662.8 328.5 C663.2 328.5 664.0 327.6 664.2 331.0 C664.4 334.4 663.9 343.7 663.8 348.7 C663.6 353.7 663.0 356.2 663.3 361.0 C663.6 365.8 664.9 372.0 665.8 377.5 C666.6 383.0 667.5 388.2 668.4 393.9 C669.2 399.6 670.4 406.2 670.9 411.7 C671.4 417.2 671.4 421.6 671.5 426.9 C671.6 432.2 671.8 438.3 671.5 443.4 C671.2 448.5 670.1 452.4 669.6 457.3 C669.1 462.1 668.5 466.9 668.4 472.5 C668.3 478.1 668.6 485.8 669.0 491.0 C669.4 496.2 670.2 498.9 670.9 503.7 C671.6 508.6 672.9 514.6 673.4 520.1 C673.9 525.6 674.2 531.3 674.1 536.6 C674.0 541.9 673.1 547.1 672.8 551.8 C672.5 556.4 672.0 560.3 672.2 564.5 C672.4 568.7 673.1 573.4 674.1 577.2 C675.1 581.0 677.5 583.7 678.5 587.3 C679.5 590.9 679.4 595.3 680.4 598.7 C681.4 602.1 682.6 605.1 684.2 607.6 C685.8 610.1 687.7 612.6 689.9 613.9 C692.1 615.2 694.5 615.8 697.5 615.2 C700.5 614.6 705.2 612.0 707.7 610.1 C710.2 608.2 712.3 606.1 712.7 603.8 C713.1 601.5 711.7 599.4 710.2 596.2 C708.7 593.0 705.8 588.6 703.9 584.8 C702.0 581.0 700.3 577.2 698.8 573.4 C697.3 569.6 696.1 566.2 695.0 562.0 C693.9 557.8 692.7 552.9 692.4 548.0 C692.1 543.1 692.5 537.6 693.1 532.8 C693.8 527.9 695.1 523.8 696.3 518.9 C697.5 514.0 699.0 508.4 700.1 503.7 C701.2 499.1 702.1 494.7 702.6 491.0 C703.1 487.3 703.2 485.1 703.2 481.4 C703.2 477.7 702.8 473.1 702.6 468.7 C702.4 464.3 701.9 459.6 702.0 454.8 C702.1 449.9 702.8 444.7 703.2 439.6 C703.6 434.5 704.0 429.5 704.5 424.4 C705.0 419.3 705.4 414.2 706.4 409.1 C707.4 404.0 708.9 399.2 710.2 393.9 C711.5 388.6 713.0 383.0 714.0 377.5 C715.0 372.0 716.1 365.8 716.5 361.0 C716.9 356.2 716.3 353.9 716.1 348.7 C715.9 343.5 715.9 335.6 715.4 329.7 C714.9 323.8 713.9 318.5 712.9 313.2 C711.9 307.9 710.6 303.7 709.1 298.0 C707.6 292.3 705.5 285.3 704.0 279.0 C702.5 272.7 701.2 265.1 700.2 260.0 C699.2 254.9 698.5 253.3 698.3 248.7 C698.1 244.1 698.5 237.5 699.0 232.2 C699.5 226.9 700.8 222.1 701.5 217.0 C702.2 211.9 703.0 207.0 703.4 201.8 C703.8 196.6 701.8 186.8 704.0 186.0 C706.2 185.2 712.5 193.1 716.7 196.8 C720.9 200.5 725.2 204.4 729.4 208.2 C733.6 212.0 738.2 215.4 742.0 219.6 C745.8 223.8 748.8 228.9 752.2 233.5 C755.6 238.1 758.7 243.8 762.3 247.4 C765.9 251.0 770.8 252.5 773.7 255.0 C776.7 257.5 777.0 260.1 780.0 262.6 C783.0 265.1 788.5 267.4 791.5 270.1 C794.5 272.8 795.5 275.8 797.8 279.0 C800.1 282.2 803.3 285.9 805.4 289.1 C807.5 292.3 808.8 294.8 810.5 298.0 C812.2 301.2 813.8 304.8 815.5 308.2 C817.2 311.6 819.0 316.0 820.6 318.3 C822.2 320.6 823.6 321.9 825.0 322.1 C826.4 322.3 828.2 321.3 828.8 319.6 C829.4 317.9 829.2 315.0 828.8 312.0 C828.4 309.0 827.2 305.2 826.3 301.8 C825.3 298.4 824.9 295.1 823.1 291.7 C821.3 288.3 818.0 284.7 815.5 281.5 C813.0 278.3 810.2 275.9 807.9 272.7 C805.6 269.5 803.9 266.3 801.6 262.5 C799.3 258.7 797.0 254.2 794.0 250.0 C791.0 245.8 787.1 241.7 783.9 237.3 C780.7 232.9 778.2 227.4 775.0 223.4 C771.8 219.4 768.2 217.2 764.8 213.2 C761.4 209.2 758.1 204.2 754.7 199.3 C751.3 194.5 748.0 188.3 744.6 184.1 C741.2 179.9 737.4 177.5 734.4 173.9 C731.4 170.3 729.3 166.7 726.8 162.5 C724.3 158.3 722.6 152.0 719.2 148.6 C715.8 145.2 712.1 143.7 706.6 142.3 C701.1 141.0 690.6 142.0 686.1 140.5 C681.6 139.0 686.5 135.3 679.8 133.5 C673.0 131.7 652.8 128.8 645.6 129.7 Z" fill="none" stroke="#0a0e0a" stroke-width="11" opacity="0.62" filter="url(#b4)"/>
<rect width="1286" height="637" fill="#0c110c" opacity="0.8" mask="url(#mdark)"/>
<rect width="1286" height="637" fill="#6a7c5c" opacity="0.04" mask="url(#mlight)"/>
<path d="M598.9 161.6 C596.8 165.0 590.2 175.6 586.0 181.7 C581.8 187.8 577.6 193.1 573.4 198.2 C569.2 203.3 565.1 208.0 560.7 212.2 C556.3 216.4 550.8 219.6 546.8 223.6 C542.8 227.6 539.8 231.6 536.6 236.2 C533.4 240.8 529.3 248.9 527.8 251.4" fill="none" stroke="#56654b" stroke-width="7" opacity="0.5" filter="url(#b2)"/>
<path d="M612.5 180.0 C610.8 181.5 606.5 185.3 602.3 188.9 C598.1 192.5 591.5 197.6 587.1 201.6 C582.7 205.6 579.1 209.2 575.7 213.0 C572.3 216.8 569.9 220.2 566.9 224.4 C563.9 228.6 561.4 233.9 558.0 238.3 C554.6 242.7 550.2 247.6 546.6 251.0 C543.0 254.4 540.1 255.4 536.5 258.6 C532.9 261.7 527.0 268.0 525.1 269.9" fill="none" stroke="#040604" stroke-width="11" opacity="0.92" filter="url(#b2)"/>
<path d="M706.5 183.2 C708.6 185.0 715.0 190.3 719.2 194.0 C723.4 197.7 727.7 201.6 731.9 205.4 C736.1 209.2 740.7 212.6 744.5 216.8 C748.3 221.0 751.3 226.1 754.7 230.7 C758.1 235.3 761.2 241.0 764.8 244.6 C768.4 248.2 773.2 249.7 776.2 252.2 C779.2 254.7 779.5 257.3 782.5 259.8 C785.5 262.3 792.1 266.1 794.0 267.3" fill="none" stroke="#030503" stroke-width="11" opacity="0.92" filter="url(#b2)"/>
<path d="M723.3 166.0 C724.6 167.9 727.9 173.8 730.9 177.4 C733.9 181.0 737.7 183.4 741.1 187.6 C744.5 191.8 747.8 198.0 751.2 202.8 C754.6 207.7 757.9 212.7 761.3 216.7 C764.7 220.7 768.3 222.9 771.5 226.9 C774.7 230.9 777.2 236.4 780.4 240.8 C783.6 245.2 788.8 251.4 790.5 253.5" fill="none" stroke="#3f4d38" stroke-width="4" opacity="0.5" filter="url(#b2)"/>
<path d="M520.0 269.0 C518.0 271.7 511.7 280.0 508.0 285.0 C504.3 290.0 500.7 294.0 498.0 299.0 C495.3 304.0 493.5 310.7 492.0 315.0 C490.5 319.3 489.5 323.3 489.0 325.0" fill="none" stroke="#55654a" stroke-width="4.5" opacity="0.75" filter="url(#b2)"/>
<path d="M512.0 291.0 C511.2 293.0 508.3 299.7 507.0 303.0 C505.7 306.3 504.5 309.7 504.0 311.0" fill="none" stroke="#4a5a42" stroke-width="2.5" opacity="0.6" filter="url(#b2)"/>
<path d="M798.0 271.0 C800.2 273.7 807.3 281.8 811.0 287.0 C814.7 292.2 817.7 297.0 820.0 302.0 C822.3 307.0 824.2 314.5 825.0 317.0" fill="none" stroke="#46553e" stroke-width="3.5" opacity="0.7" filter="url(#b2)"/>
<path d="M624.0 289.0 C625.7 291.3 630.0 298.0 634.0 303.0 C638.0 308.0 644.0 314.7 648.0 319.0 C652.0 323.3 656.3 327.3 658.0 329.0" fill="none" stroke="#161c15" stroke-width="1.2" opacity="0.6" filter="url(#b2)"/>
<path d="M702.0 291.0 C700.3 293.3 696.3 300.0 692.0 305.0 C687.7 310.0 680.3 317.0 676.0 321.0 C671.7 325.0 667.7 327.7 666.0 329.0" fill="none" stroke="#161c15" stroke-width="1.2" opacity="0.6" filter="url(#b2)"/>
<ellipse cx="626.0" cy="346.0" rx="8" ry="22" fill="#3a4732" opacity="0.55" filter="url(#b4)"/>

</g>
<path d="M644.5 109.0 C641.5 110.0 643.8 115.9 643.7 118.9 C643.6 121.9 643.4 125.3 643.7 127.2 C644.0 129.1 642.6 129.5 645.6 130.5 C648.6 131.5 656.4 133.0 662.0 133.0 C667.6 133.0 676.0 132.0 679.1 130.5 C682.2 129.0 680.4 126.2 680.5 124.0 C680.6 121.8 679.7 119.5 679.8 117.0 C679.9 114.5 684.0 109.7 681.0 109.0 C678.0 108.3 668.1 113.0 662.0 113.0 C655.9 113.0 647.5 108.0 644.5 109.0 Z" fill="#161a15"/>
<path d="M664.6 49.9 C661.4 49.9 658.0 50.5 655.0 51.5 C652.0 52.5 649.2 54.3 646.8 56.2 C644.4 58.1 642.0 60.5 640.5 63.0 C639.0 65.5 638.5 68.3 638.0 71.0 C637.5 73.7 637.2 75.1 637.3 79.0 C637.4 82.9 637.8 89.8 638.6 94.2 C639.5 98.6 641.1 103.0 642.4 105.6 C643.7 108.2 644.6 108.4 646.2 110.0 C647.8 111.6 649.0 113.8 652.0 115.0 C655.0 116.2 660.0 117.0 664.0 117.0 C668.0 117.0 673.0 116.2 676.0 115.0 C679.0 113.8 680.7 112.2 682.3 110.0 C683.9 107.8 684.6 105.9 685.5 101.8 C686.4 97.7 687.1 91.0 687.4 85.3 C687.7 79.6 688.2 72.5 687.4 67.6 C686.5 62.7 684.5 58.9 682.3 56.2 C680.1 53.5 677.0 52.4 674.0 51.3 C671.0 50.3 667.8 49.9 664.6 49.9 Z" fill="url(#ghead)"/>
<g clip-path="url(#chead)">
<path d="M664.6 49.9 C661.4 49.9 658.0 50.5 655.0 51.5 C652.0 52.5 649.2 54.3 646.8 56.2 C644.4 58.1 642.0 60.5 640.5 63.0 C639.0 65.5 638.5 68.3 638.0 71.0 C637.5 73.7 637.2 75.1 637.3 79.0 C637.4 82.9 637.8 89.8 638.6 94.2 C639.5 98.6 641.1 103.0 642.4 105.6 C643.7 108.2 644.6 108.4 646.2 110.0 C647.8 111.6 649.0 113.8 652.0 115.0 C655.0 116.2 660.0 117.0 664.0 117.0 C668.0 117.0 673.0 116.2 676.0 115.0 C679.0 113.8 680.7 112.2 682.3 110.0 C683.9 107.8 684.6 105.9 685.5 101.8 C686.4 97.7 687.1 91.0 687.4 85.3 C687.7 79.6 688.2 72.5 687.4 67.6 C686.5 62.7 684.5 58.9 682.3 56.2 C680.1 53.5 677.0 52.4 674.0 51.3 C671.0 50.3 667.8 49.9 664.6 49.9 Z" fill="none" stroke="#0a0e0a" stroke-width="9" opacity="0.55" filter="url(#b4)"/>
<ellipse cx="652.0" cy="67.0" rx="8" ry="11" fill="#4b5a42" opacity="0.75" filter="url(#b4)"/>
<ellipse cx="673.0" cy="86.0" rx="10" ry="24" fill="#151a15" opacity="0.7" filter="url(#b4)"/>
<ellipse cx="644.0" cy="91.0" rx="4" ry="18" fill="#1a201a" opacity="0.5" filter="url(#b2)"/>
<path d="M667.0 51.0 C667.2 55.2 668.0 67.3 668.0 76.0 C668.0 84.7 667.2 98.5 667.0 103.0" fill="none" stroke="#566a4c" stroke-width="1" opacity="0.35"/>
<path d="M646.0 101.0 C648.2 99.7 657.5 102.0 661.0 104.0 C664.5 106.0 664.7 113.0 667.0 113.0 C669.3 113.0 672.2 106.3 675.0 104.0 C677.8 101.7 682.8 97.8 684.0 99.0 C685.2 100.2 685.3 107.8 682.0 111.0 C678.7 114.2 669.7 117.8 664.0 118.0 C658.3 118.2 651.0 114.8 648.0 112.0 C645.0 109.2 643.8 102.3 646.0 101.0 Z" fill="#46553d" opacity="0.7" filter="url(#b2)"/>
<path d="M644.0 110.0 C647.2 109.8 656.3 120.0 663.0 120.0 C669.7 120.0 680.5 109.8 684.0 110.0 C687.5 110.2 690.7 119.2 684.0 121.0 C677.3 122.8 650.7 122.8 644.0 121.0 C637.3 119.2 640.8 110.2 644.0 110.0 Z" fill="#0c0f0c" opacity="0.85" filter="url(#b2)"/>

</g>
<path d="M522.5 248.6 C520.2 248.7 513.1 260.1 513.6 262.5 C514.1 264.9 525.3 272.8 527.6 272.7 C529.9 272.6 536.9 263.7 536.4 261.3 C535.9 258.9 524.8 248.5 522.5 248.6 Z" fill="#1c211b"/><path d="M788.9 241.0 C787.0 241.8 778.5 257.1 778.8 260.0 C779.1 262.9 789.2 269.9 791.5 270.1 C793.8 270.4 801.0 264.3 801.6 262.5 C802.2 260.7 799.1 254.5 797.8 252.4 C796.5 250.2 790.8 240.2 788.9 241.0 Z" fill="#1a1f19"/></g>
<defs><linearGradient id="gzL" x1="0" y1="0" x2="1" y2="0"><stop offset="0" stop-color="#8a8a8a"/><stop offset="0.5" stop-color="#b9b9b9"/><stop offset="1" stop-color="#9c9c9c"/></linearGradient><linearGradient id="gzW" x1="0" y1="0" x2="1" y2="0"><stop offset="0" stop-color="#d8d8d8"/><stop offset="0.5" stop-color="#ffffff"/><stop offset="1" stop-color="#d0d0d0"/></linearGradient><linearGradient id="gzG" x1="0" y1="0" x2="1" y2="0"><stop offset="0" stop-color="#7fd83a"/><stop offset="0.5" stop-color="#9aef4e"/><stop offset="1" stop-color="#6cc22e"/></linearGradient></defs><path d="M1228.5 51.0 L1210.0 44.5 Q1206.5 53.0 1210.0 62.5 Z" fill="url(#gzL)"/><ellipse cx="1209.5" cy="53.5" rx="2.6" ry="9" fill="#9e9e9e"/><path d="M1229.0 49.0 L1220.0 44.0 Q1223.0 42.0 1226.0 43.0 Z" fill="#d9d9d9"/><path d="M1237.0 60.0 L1231.4 77.5 Q1237.0 80.5 1243.4 77.5 Z" fill="url(#gzW)"/><path d="M1237.0 42.0 L1230.7 22.0 Q1237.0 20.5 1243.4 22.0 Z" fill="url(#gzG)"/><path d="M1245.0 49.5 L1255.0 44.2 L1257.5 46.2 L1247.0 52.0 Z" fill="#3a7be0"/><path d="M1258.0 44.0 h3 v1.4 h-3 z" fill="#e8b0a8"/><path d="M1243.5 51.2 L1260.5 45.6 L1262.5 62.8 Z" fill="#8c1c0e"/><ellipse cx="1261.8" cy="54.30000000000001" rx="4.6" ry="8.6" fill="#e8432a" transform="rotate(-6 1261.8 54.30000000000001)"/><rect x="1228.2" y="44.80000000000001" width="8.8" height="13.4" fill="#c2c2c2"/><rect x="1237" y="44.80000000000001" width="9" height="13.4" fill="#dcdcdc"/><text x="1237" y="18.5" text-anchor="middle" font-family="DejaVu Sans,Liberation Sans,sans-serif" font-size="11" font-weight="bold" fill="#ffffff">y</text><text x="1273.5" y="59" text-anchor="middle" font-family="DejaVu Sans,Liberation Sans,sans-serif" font-size="11" font-weight="bold" fill="#ffffff">x</text><g fill="#d6d6d6"><rect x="1268" y="18" width="7.4" height="5" /><path d="M1269.6 18.0 V15.799999999999997 A2.1 2.1 0 0 1 1273.8 15.8 V16.400000000000006" fill="none" stroke="#d6d6d6" stroke-width="1.1"/></g><g stroke="#b8b8b8" stroke-width="1" fill="none"><path d="M1213.2 101.3 L1223.0 96.8 M1213.2 101.3 L1223.0 99.8 M1213.2 101.3 L1223.0 102.8 M1213.2 101.3 L1223.0 105.6"/></g><text x="1226.5" y="105.30000000000001" font-family="DejaVu Sans,Liberation Sans,sans-serif" font-size="11" fill="#c4c4c4" letter-spacing="0.3">Persp</text>
</svg>
<div class="a" style="left:1518px;top:93px;width:1px;height:654px;background:#8a8a8a"></div><div class="a" style="left:1519px;top:93px;width:3px;height:927px;background:#ababab"></div>
<div class="a" style="left:231px;top:746px;width:1288px;height:1px;background:#8a8a8a"></div><div class="a" style="left:0;top:747px;width:1519px;height:2px;background:#a8a8a8"></div><div class="a" style="left:229px;top:93px;width:2px;height:654px;background:#ababab"></div>

<!-- ===== inspector ===== -->
<div class="a" style="left:1522px;top:75px;width:93px;height:18px;background:linear-gradient(#dcdcdc,#d0d0d0);border-top-right-radius:3px;border-top-left-radius:3px;border:1px solid #b4b4b4;border-bottom:none"></div>
<svg class="ic" style="left:1531px;top:78px" width="12" height="12" viewBox="0 0 12 12"><circle cx="6" cy="6" r="5.6" fill="#2e2e2e"/><rect x="5" y="5" width="2" height="4.4" fill="#ddd"/><rect x="5" y="2.4" width="2" height="1.8" fill="#ddd"/></svg>
<div class="t" style="left:1546px;top:77px;font-size:11.2px;color:#333;letter-spacing:0.2px">Inspector</div>
<svg class="ic" style="left:1884px;top:78px" width="34" height="12" viewBox="0 0 34 12"><g fill="#555"><path d="M2.2 6 H9.8 V11 H2.2 Z"/><path d="M3.6 6 V4.2 A2.4 2.4 0 0 1 8.4 4.2 V6 H7.2 V4.3 A1.2 1.2 0 0 0 4.8 4.3 V6 Z" fill="#777"/><path d="M15.5 5 H20.5 L18 8 Z"/><rect x="22" y="3.9" width="8.5" height="1.3"/><rect x="22" y="6.1" width="8.5" height="1.3"/><rect x="22" y="8.3" width="8.5" height="1.3"/></g></svg>
<div class="a" style="left:1520px;top:93px;width:400px;height:436px;background:#c2c2c2;border-left:2px solid #ababab"></div>
<div class="a" style="left:1522px;top:93px;width:385px;height:46px;background:linear-gradient(#e1e1e1,#dadada);border-bottom:1px solid #9d9d9d;border-top:1px solid #ededed"></div>
<svg class="ic" style="left:1528px;top:99px" width="34" height="34" viewBox="0 0 34 34"><defs><radialGradient id="mb" cx="0.4" cy="0.35" r="0.65"><stop offset="0" stop-color="#3f4a43"/><stop offset="0.55" stop-color="#1f2622"/><stop offset="1" stop-color="#070908"/></radialGradient></defs><circle cx="16.5" cy="16.5" r="15" fill="url(#mb)"/><path d="M8 10 Q12 6 16 9 Q13 13 15 17 Q10 16 8 10 Z M18 12 Q22 9 25 13 Q22 17 19 16 Z M10 20 Q14 19 16 23 Q13 26 10 24 Z" fill="#59635c" opacity="0.45"/></svg>
<div class="t" style="left:1568px;top:99px;font-size:12.3px;color:#333;letter-spacing:0.2px">None</div>
<div class="t" style="left:1568px;top:118px;font-size:11.5px;color:#222;letter-spacing:0.2px">Shader</div>
<div class="dd" style="left:1616px;top:119px;width:285px;height:15px;line-height:13px">Standard</div>
<div class="a" style="left:1889px;top:125px;border-left:3px solid transparent;border-right:3px solid transparent;border-top:3px solid #333"></div>
<svg class="ic" style="left:1851px;top:98px" width="56" height="17" viewBox="0 0 56 17"><defs><linearGradient id="bk" x1="0" y1="0" x2="1" y2="1"><stop offset="0" stop-color="#9ec0ea"/><stop offset="1" stop-color="#3d6db4"/></linearGradient></defs><path d="M2 2.5 L12 1 Q14.5 1 14.5 3.5 V14 L4.5 15.5 Q2 15.5 2 13 Z" fill="url(#bk)" stroke="#2a4f8a" stroke-width="0.8"/><path d="M4.5 4.5 L12.5 3.3 V12 L4.5 13.2 Z" fill="#c9dcf4" opacity="0.55"/><text x="6.2" y="11.5" font-size="7.5" font-family="Liberation Sans,sans-serif" font-weight="bold" fill="#2a4f8a">?</text><g stroke="#333" stroke-width="1.5" fill="none"><path d="M21.5 6 H33 M21.5 11.5 H33"/><path d="M30 3.2 V8.6 M25.5 8.8 V14.2" stroke-width="2.2"/></g><g fill="#333"><circle cx="45" cy="8" r="3.8"/><g stroke="#333" stroke-width="2"><path d="M45 2.6 V13.4 M39.6 8 H50.4 M41.2 4.2 L48.8 11.8 M48.8 4.2 L41.2 11.8"/></g><circle cx="45" cy="8" r="1.7" fill="#dedede"/><path d="M50.2 11.8 H54.2 L52.2 14.4 Z"/></g></svg>
<div class="a" style="left:1907px;top:93px;width:13px;height:436px;background:#cdcdcd;border-left:1px solid #b0b0b0"></div>
<div class="a" style="left:1911px;top:100px;border-left:4px solid transparent;border-right:4px solid transparent;border-bottom:5px solid #444"></div>
<div class="a" style="left:1911px;top:517px;border-left:4px solid transparent;border-right:4px solid transparent;border-top:5px solid #444"></div>
<div class="a" style="left:1908px;top:106px;width:12px;height:406px;border-radius:6px;background:linear-gradient(90deg,#c9c9c9,#f2f2f2 55%,#d6d6d6)"></div>
<div class="a" style="left:1908px;top:112px;width:12px;height:308px;border-radius:6px;background:linear-gradient(90deg,#4f6d96,#7f9cc2 45%,#6887b0);border:1px solid #3d587d"></div>
<div class="t" style="left:1537px;top:141.5px;font-size:11px;color:#111;letter-spacing:0.2px">Rendering Mode</div>
<div class="dd" style="left:1676px;top:142px;width:226px;height:15px;line-height:13px">Opaque</div>
<div class="a" style="left:1893px;top:145px;border-left:2.5px solid transparent;border-right:2.5px solid transparent;border-bottom:3px solid #333"></div>
<div class="a" style="left:1893px;top:150px;border-left:2.5px solid transparent;border-right:2.5px solid transparent;border-top:3px solid #333"></div>
<div class="t" style="left:1538px;top:164.5px;font-size:11.5px;font-weight:bold;font-stretch:condensed;color:#111;letter-spacing:0.7px">Main Maps</div>
<svg class="ic" style="left:1536px;top:182px" width="18" height="18" viewBox="0 0 18 18"><rect width="18" height="18" fill="#2f3b30"/><g fill="#8a948a"><rect x="2" y="2" width="4" height="3"/><rect x="8" y="1" width="3" height="5"/><rect x="13" y="3" width="3" height="3"/><rect x="1" y="8" width="3" height="4"/><rect x="6" y="8" width="4" height="3"/><rect x="12" y="9" width="4" height="2"/><rect x="3" y="13" width="5" height="3"/><rect x="10" y="13" width="3" height="3"/><rect x="14" y="13" width="2" height="3"/></g><rect x="0.5" y="0.5" width="17" height="17" fill="none" stroke="#555"/></svg>
<svg class="ic" style="left:1558px;top:186.5px" width="9" height="9" viewBox="0 0 9 9"><circle cx="4.5" cy="4.5" r="3.3" fill="none" stroke="#222" stroke-width="1"/><circle cx="4.5" cy="4.5" r="1.1" fill="#222"/></svg>
<div class="t" style="left:1567px;top:184.0px;font-size:11px;color:#111;letter-spacing:0.2px">Albedo</div>
<div class="a" style="left:1676px;top:184px;width:32px;height:16px;background:#e3e3e3;border:1px solid #7a7a7a"></div>
<div class="a" style="left:1677px;top:196px;width:30px;height:3px;background:#fff"></div>
<svg class="ic" style="left:1711px;top:184px" width="16" height="16" viewBox="0 0 16 16"><path d="M1.5 14.5 L2.5 11.5 L9.5 4.5 L11.5 6.5 L4.5 13.5 Z" fill="#e8e8e8" stroke="#333" stroke-width="1"/><path d="M9 3 L13 7" stroke="#222" stroke-width="2"/><path d="M11 5 L13.5 2.5" stroke="#222" stroke-width="3.2" stroke-linecap="round"/></svg>
<div class="slot" style="left:1536px;top:202px;"></div>
<svg class="ic" style="left:1558px;top:206.5px" width="9" height="9" viewBox="0 0 9 9"><circle cx="4.5" cy="4.5" r="3.3" fill="none" stroke="#222" stroke-width="1"/><circle cx="4.5" cy="4.5" r="1.1" fill="#222"/></svg>
<div class="t" style="left:1567px;top:204.0px;font-size:11px;color:#111;letter-spacing:0.2px">Metallic</div>
<div class="a" style="left:1677px;top:210px;width:170px;height:3px;background:#9a9a9a;border-radius:2px;border-top:1px solid #7c7c7c"></div>
<div class="a" style="left:1675px;top:206px;width:10px;height:10px;border-radius:5px;background:linear-gradient(#f6f6f6,#d0d0d0);border:1px solid #707070"></div>
<div class="fld" style="left:1852px;top:204px;width:50px;height:15px;line-height:13px">0</div>
<div class="t" style="left:1567px;top:224.0px;font-size:11px;color:#111;letter-spacing:0.2px">Smoothness</div>
<div class="a" style="left:1677px;top:230px;width:170px;height:3px;background:#9a9a9a;border-radius:2px;border-top:1px solid #7c7c7c"></div>
<div class="a" style="left:1729px;top:226px;width:10px;height:10px;border-radius:5px;background:linear-gradient(#f6f6f6,#d0d0d0);border:1px solid #707070"></div>
<div class="fld" style="left:1852px;top:224px;width:50px;height:15px;line-height:13px">0.331</div>
<div class="t" style="left:1582px;top:242.0px;font-size:11px;color:#111;letter-spacing:0.2px">Source</div>
<div class="dd" style="left:1676px;top:242px;width:226px;height:15px;line-height:13px">Metallic Alpha</div>
<div class="a" style="left:1893px;top:245px;border-left:2.5px solid transparent;border-right:2.5px solid transparent;border-bottom:3px solid #333"></div>
<div class="a" style="left:1893px;top:250px;border-left:2.5px solid transparent;border-right:2.5px solid transparent;border-top:3px solid #333"></div>
<div class="slot" style="left:1536px;top:259px;background:#8080ff;border-color:#5d5d8a"></div>
<svg class="ic" style="left:1558px;top:263px" width="9" height="9" viewBox="0 0 9 9"><circle cx="4.5" cy="4.5" r="3.3" fill="none" stroke="#222" stroke-width="1"/><circle cx="4.5" cy="4.5" r="1.1" fill="#222"/></svg>
<div class="t" style="left:1567px;top:260.5px;font-size:11px;color:#111;letter-spacing:0.2px">Normal Map</div>
<div class="fld" style="left:1852px;top:260px;width:50px;height:15px;line-height:13px">1</div>
<div class="slot" style="left:1536px;top:279px;"></div>
<svg class="ic" style="left:1558px;top:283px" width="9" height="9" viewBox="0 0 9 9"><circle cx="4.5" cy="4.5" r="3.3" fill="none" stroke="#222" stroke-width="1"/><circle cx="4.5" cy="4.5" r="1.1" fill="#222"/></svg>
<div class="t" style="left:1567px;top:280.5px;font-size:11px;color:#111;letter-spacing:0.2px">Height Map</div>
<div class="slot" style="left:1536px;top:299px;"></div>
<svg class="ic" style="left:1558px;top:303px" width="9" height="9" viewBox="0 0 9 9"><circle cx="4.5" cy="4.5" r="3.3" fill="none" stroke="#222" stroke-width="1"/><circle cx="4.5" cy="4.5" r="1.1" fill="#222"/></svg>
<div class="t" style="left:1567px;top:300.5px;font-size:11px;color:#111;letter-spacing:0.2px">Occlusion</div>
<div class="slot" style="left:1536px;top:319px;"></div>
<svg class="ic" style="left:1558px;top:323px" width="9" height="9" viewBox="0 0 9 9"><circle cx="4.5" cy="4.5" r="3.3" fill="none" stroke="#222" stroke-width="1"/><circle cx="4.5" cy="4.5" r="1.1" fill="#222"/></svg>
<div class="t" style="left:1567px;top:320.5px;font-size:11px;color:#111;letter-spacing:0.2px">Detail Mask</div>
<div class="t" style="left:1537px;top:340.5px;font-size:11px;color:#111;letter-spacing:0.2px">Emission</div>
<div class="a" style="left:1677px;top:342px;width:12px;height:12px;border-radius:2px;background:linear-gradient(#f4f4f4,#dcdcdc);border:1px solid #777"></div>
<div class="t" style="left:1537px;top:358.0px;font-size:11px;color:#111;letter-spacing:0.2px">Tiling</div>
<div class="t" style="left:1678px;top:358.0px;font-size:11px;color:#111;letter-spacing:0.2px">X</div>
<div class="fld" style="left:1689px;top:358px;width:99px;height:15px;line-height:13px">1</div>
<div class="t" style="left:1792px;top:358.0px;font-size:11px;color:#111;letter-spacing:0.2px">Y</div>
<div class="fld" style="left:1803px;top:358px;width:99px;height:15px;line-height:13px">1</div>
<div class="t" style="left:1537px;top:374.0px;font-size:11px;color:#111;letter-spacing:0.2px">Offset</div>
<div class="t" style="left:1678px;top:374.0px;font-size:11px;color:#111;letter-spacing:0.2px">X</div>
<div class="fld" style="left:1689px;top:374px;width:99px;height:15px;line-height:13px">0</div>
<div class="t" style="left:1792px;top:374.0px;font-size:11px;color:#111;letter-spacing:0.2px">Y</div>
<div class="fld" style="left:1803px;top:374px;width:99px;height:15px;line-height:13px">0</div>
<div class="t" style="left:1538px;top:404.5px;font-size:11.5px;font-weight:bold;font-stretch:condensed;color:#111;letter-spacing:0.7px">Secondary Maps</div>
<div class="slot" style="left:1536px;top:423px;"></div>
<svg class="ic" style="left:1558px;top:426.5px" width="9" height="9" viewBox="0 0 9 9"><circle cx="4.5" cy="4.5" r="3.3" fill="none" stroke="#222" stroke-width="1"/><circle cx="4.5" cy="4.5" r="1.1" fill="#222"/></svg>
<div class="t" style="left:1567px;top:424.0px;font-size:11px;color:#111;letter-spacing:0.2px">Detail Albedo x2</div>
<div class="slot" style="left:1536px;top:443px;"></div>
<svg class="ic" style="left:1558px;top:446.5px" width="9" height="9" viewBox="0 0 9 9"><circle cx="4.5" cy="4.5" r="3.3" fill="none" stroke="#222" stroke-width="1"/><circle cx="4.5" cy="4.5" r="1.1" fill="#222"/></svg>
<div class="t" style="left:1567px;top:444.0px;font-size:11px;color:#111;letter-spacing:0.2px">Normal Map</div>
<div class="fld" style="left:1852px;top:445px;width:50px;height:15px;line-height:13px">1</div>
<div class="t" style="left:1537px;top:464.0px;font-size:11px;color:#111;letter-spacing:0.2px">Tiling</div>
<div class="t" style="left:1678px;top:464.0px;font-size:11px;color:#111;letter-spacing:0.2px">X</div>
<div class="fld" style="left:1689px;top:464px;width:99px;height:15px;line-height:13px">1</div>
<div class="t" style="left:1792px;top:464.0px;font-size:11px;color:#111;letter-spacing:0.2px">Y</div>
<div class="fld" style="left:1803px;top:464px;width:99px;height:15px;line-height:13px">1</div>
<div class="t" style="left:1537px;top:480.0px;font-size:11px;color:#111;letter-spacing:0.2px">Offset</div>
<div class="t" style="left:1678px;top:480.0px;font-size:11px;color:#111;letter-spacing:0.2px">X</div>
<div class="fld" style="left:1689px;top:480px;width:99px;height:15px;line-height:13px">0</div>
<div class="t" style="left:1792px;top:480.0px;font-size:11px;color:#111;letter-spacing:0.2px">Y</div>
<div class="fld" style="left:1803px;top:480px;width:99px;height:15px;line-height:13px">0</div>
<div class="t" style="left:1537px;top:498.0px;font-size:11px;color:#111;letter-spacing:0.2px">UV Set</div>
<div class="dd" style="left:1676px;top:498px;width:226px;height:15px;line-height:13px">UV0</div>
<div class="a" style="left:1893px;top:501px;border-left:2.5px solid transparent;border-right:2.5px solid transparent;border-bottom:3px solid #333"></div>
<div class="a" style="left:1893px;top:506px;border-left:2.5px solid transparent;border-right:2.5px solid transparent;border-top:3px solid #333"></div>
<div class="a" style="left:1522px;top:519px;width:385px;height:10px;overflow:hidden"><div class="t" style="left:16px;top:1px;font-size:11.5px;font-weight:bold;font-stretch:condensed;color:#111;letter-spacing:0.7px">Forward Rendering Options</div></div>
<div class="a" style="left:1520px;top:529px;width:400px;height:17px;background:linear-gradient(#848484,#5a5a5a);border-top:1px solid #3f3f3f;border-bottom:1px solid #2a2a2a"></div>
<div class="t" style="left:1527px;top:529px;font-size:11.5px;font-weight:bold;font-stretch:condensed;color:#e4e4e4;letter-spacing:0.4px">None</div>
<div class="a" style="left:1563px;top:536px;width:250px;height:1px;background:#bdbdbd"></div><div class="a" style="left:1563px;top:539px;width:250px;height:1px;background:#bdbdbd"></div>
<div class="sep" style="left:1815px;top:530px;height:15px;background:#4a4a4a"></div><div class="sep" style="left:1842px;top:530px;height:15px;background:#4a4a4a"></div><div class="sep" style="left:1867px;top:530px;height:15px;background:#4a4a4a"></div><div class="sep" style="left:1892px;top:530px;height:15px;background:#4a4a4a"></div>
<svg class="ic" style="left:1820px;top:531px" width="96" height="14" viewBox="0 0 96 14"><defs><radialGradient id="pb" cx="0.4" cy="0.35" r="0.7"><stop offset="0" stop-color="#e8eef8"/><stop offset="0.6" stop-color="#8fa3c4"/><stop offset="1" stop-color="#4c5f82"/></radialGradient></defs><path d="M3 1.5 L14 7 L3 12.5 Z" fill="#151515"/><circle cx="36" cy="7" r="5.2" fill="url(#pb)"/><circle cx="63.5" cy="7" r="4.4" fill="#d8d8d8" stroke="#8a8a8a" stroke-width="0.6"/><circle cx="58.5" cy="7" r="4.4" fill="#f1e05a" stroke="#9a8c20" stroke-width="0.6"/><g fill="#2a2a2a"><path d="M77 5 H82 L79.5 8 Z"/><rect x="83.5" y="3.9" width="8.5" height="1.3"/><rect x="83.5" y="6.1" width="8.5" height="1.3"/><rect x="83.5" y="8.3" width="8.5" height="1.3"/></g></svg>
<div class="a" style="left:1520px;top:546px;width:400px;height:473px;background:#303030;border-left:2px solid #ababab"></div>
<svg class="ic" style="left:1522px;top:547px" width="398" height="452" viewBox="0 0 398 452"><defs><clipPath id="csph"><circle cx="198.5" cy="214" r="179.0"/></clipPath><radialGradient id="sphsh" cx="0.4" cy="0.3" r="0.86"><stop offset="0" stop-color="#000" stop-opacity="0.08"/><stop offset="0.38" stop-color="#000" stop-opacity="0.16"/><stop offset="0.58" stop-color="#000" stop-opacity="0.4"/><stop offset="0.78" stop-color="#000" stop-opacity="0.76"/><stop offset="1" stop-color="#000" stop-opacity="0.93"/></radialGradient><radialGradient id="sphrim" cx="0.5" cy="0.5" r="0.5"><stop offset="0.86" stop-color="#000" stop-opacity="0"/><stop offset="1" stop-color="#000" stop-opacity="0.45"/></radialGradient><filter id="sb1"><feGaussianBlur stdDeviation="0.8"/><feColorMatrix type="saturate" values="0.78"/></filter></defs><g clip-path="url(#csph)"><rect width="398" height="452" fill="#9a9a9a"/><path d="M198.5 35.0 A179.00 179.0 0 0 0 198.5 393.0 A178.81 179.0 0 0 1 198.5 35.0 Z M198.5 35.0 A178.24 179.0 0 0 0 198.5 393.0 A177.28 179.0 0 0 1 198.5 35.0 Z M198.5 35.0 A175.95 179.0 0 0 0 198.5 393.0 A174.25 179.0 0 0 1 198.5 35.0 Z M198.5 35.0 A172.17 179.0 0 0 0 198.5 393.0 A169.72 179.0 0 0 1 198.5 35.0 Z M198.5 35.0 A166.91 179.0 0 0 0 198.5 393.0 A163.75 179.0 0 0 1 198.5 35.0 Z M198.5 35.0 A160.23 179.0 0 0 0 198.5 393.0 A156.38 179.0 0 0 1 198.5 35.0 Z M198.5 35.0 A152.19 179.0 0 0 0 198.5 393.0 A147.67 179.0 0 0 1 198.5 35.0 Z M198.5 35.0 A142.85 179.0 0 0 0 198.5 393.0 A137.71 179.0 0 0 1 198.5 35.0 Z M198.5 35.0 A132.28 179.0 0 0 0 198.5 393.0 A126.57 179.0 0 0 1 198.5 35.0 Z M198.5 35.0 A120.59 179.0 0 0 0 198.5 393.0 A114.35 179.0 0 0 1 198.5 35.0 Z M198.5 35.0 A107.87 179.0 0 0 0 198.5 393.0 A101.16 179.0 0 0 1 198.5 35.0 Z M198.5 35.0 A94.23 179.0 0 0 0 198.5 393.0 A87.10 179.0 0 0 1 198.5 35.0 Z M198.5 35.0 A79.79 179.0 0 0 0 198.5 393.0 A72.30 179.0 0 0 1 198.5 35.0 Z M198.5 35.0 A64.66 179.0 0 0 0 198.5 393.0 A56.88 179.0 0 0 1 198.5 35.0 Z M198.5 35.0 A48.99 179.0 0 0 0 198.5 393.0 A40.98 179.0 0 0 1 198.5 35.0 Z M198.5 35.0 A32.89 179.0 0 0 0 198.5 393.0 A24.73 179.0 0 0 1 198.5 35.0 Z M198.5 35.0 A16.52 179.0 0 0 0 198.5 393.0 A8.27 179.0 0 0 1 198.5 35.0 Z M198.5 35.0 L198.5 393.0 A8.27 179.0 0 0 0 198.5 35.0 Z M198.5 35.0 A16.52 179.0 0 0 1 198.5 393.0 A24.73 179.0 0 0 0 198.5 35.0 Z M198.5 35.0 A32.89 179.0 0 0 1 198.5 393.0 A40.98 179.0 0 0 0 198.5 35.0 Z M198.5 35.0 A48.99 179.0 0 0 1 198.5 393.0 A56.88 179.0 0 0 0 198.5 35.0 Z M198.5 35.0 A64.66 179.0 0 0 1 198.5 393.0 A72.30 179.0 0 0 0 198.5 35.0 Z M198.5 35.0 A79.79 179.0 0 0 1 198.5 393.0 A87.10 179.0 0 0 0 198.5 35.0 Z M198.5 35.0 A94.23 179.0 0 0 1 198.5 393.0 A101.16 179.0 0 0 0 198.5 35.0 Z M198.5 35.0 A107.87 179.0 0 0 1 198.5 393.0 A114.35 179.0 0 0 0 198.5 35.0 Z M198.5 35.0 A120.59 179.0 0 0 1 198.5 393.0 A126.57 179.0 0 0 0 198.5 35.0 Z M198.5 35.0 A132.28 179.0 0 0 1 198.5 393.0 A137.71 179.0 0 0 0 198.5 35.0 Z M198.5 35.0 A142.85 179.0 0 0 1 198.5 393.0 A147.67 179.0 0 0 0 198.5 35.0 Z M198.5 35.0 A152.19 179.0 0 0 1 198.5 393.0 A156.38 179.0 0 0 0 198.5 35.0 Z M198.5 35.0 A160.23 179.0 0 0 1 198.5 393.0 A163.75 179.0 0 0 0 198.5 35.0 Z M198.5 35.0 A166.91 179.0 0 0 1 198.5 393.0 A169.72 179.0 0 0 0 198.5 35.0 Z M198.5 35.0 A172.17 179.0 0 0 1 198.5 393.0 A174.25 179.0 0 0 0 198.5 35.0 Z M198.5 35.0 A175.95 179.0 0 0 1 198.5 393.0 A177.28 179.0 0 0 0 198.5 35.0 Z M198.5 35.0 A178.24 179.0 0 0 1 198.5 393.0 A178.81 179.0 0 0 0 198.5 35.0 Z M18.5 393.00 H378.5 V392.81 H18.5 Z M18.5 392.24 H378.5 V391.28 H18.5 Z M18.5 389.95 H378.5 V388.25 H18.5 Z M18.5 386.17 H378.5 V383.72 H18.5 Z M18.5 380.91 H378.5 V377.75 H18.5 Z M18.5 374.23 H378.5 V370.38 H18.5 Z M18.5 366.19 H378.5 V361.67 H18.5 Z M18.5 356.85 H378.5 V351.71 H18.5 Z M18.5 346.28 H378.5 V340.57 H18.5 Z M18.5 334.59 H378.5 V328.35 H18.5 Z M18.5 321.87 H378.5 V315.16 H18.5 Z M18.5 308.23 H378.5 V301.10 H18.5 Z M18.5 293.79 H378.5 V286.30 H18.5 Z M18.5 278.66 H378.5 V270.88 H18.5 Z M18.5 262.99 H378.5 V254.98 H18.5 Z M18.5 246.89 H378.5 V238.73 H18.5 Z M18.5 230.52 H378.5 V222.27 H18.5 Z M18.5 214.00 H378.5 V205.73 H18.5 Z M18.5 197.48 H378.5 V189.27 H18.5 Z M18.5 181.11 H378.5 V173.02 H18.5 Z M18.5 165.01 H378.5 V157.12 H18.5 Z M18.5 149.34 H378.5 V141.70 H18.5 Z M18.5 134.21 H378.5 V126.90 H18.5 Z M18.5 119.77 H378.5 V112.84 H18.5 Z M18.5 106.13 H378.5 V99.65 H18.5 Z M18.5 93.41 H378.5 V87.43 H18.5 Z M18.5 81.72 H378.5 V76.29 H18.5 Z M18.5 71.15 H378.5 V66.33 H18.5 Z M18.5 61.81 H378.5 V57.62 H18.5 Z M18.5 53.77 H378.5 V50.25 H18.5 Z M18.5 47.09 H378.5 V44.28 H18.5 Z M18.5 41.83 H378.5 V39.75 H18.5 Z M18.5 38.05 H378.5 V36.72 H18.5 Z M18.5 35.76 H378.5 V35.19 H18.5 Z" fill="#5e5e64" fill-rule="evenodd"/><path d="M105.3 63.7 C108.2 59.9 120.9 55.2 132.6 52.0 C144.2 48.8 175.0 42.8 183.2 42.2 C191.4 41.7 193.6 45.2 187.1 48.1 C180.7 51.0 151.5 57.3 140.4 61.7 C129.2 66.1 118.3 77.0 113.1 77.3 C107.8 77.6 102.3 67.5 105.3 63.7 Z" fill="#2a3f2e" filter="url(#sb1)"/><path d="M99.4 102.7 C103.2 97.4 120.2 86.3 128.7 79.3 C137.1 72.3 147.8 60.3 155.9 55.9 C164.1 51.5 182.1 47.7 183.2 50.0 C184.4 52.4 170.2 64.5 163.7 71.5 C157.3 78.5 147.4 90.1 140.4 96.8 C133.3 103.5 122.5 113.7 117.0 116.3 C111.4 118.9 105.9 116.4 103.3 114.4 C100.7 112.3 95.6 107.9 99.4 102.7 Z" fill="#2c4230" filter="url(#sb1)"/><path d="M146.2 71.5 C150.3 64.8 160.9 57.4 167.6 53.9 C174.4 50.4 187.5 45.5 191.0 48.1 C194.5 50.7 192.2 63.3 191.0 71.5 C189.9 79.7 186.7 95.9 183.2 102.7 C179.7 109.4 173.8 113.7 167.6 116.3 C161.5 118.9 146.4 122.8 142.3 120.2 C138.2 117.6 139.8 106.1 140.4 98.8 C140.9 91.5 142.1 78.2 146.2 71.5 Z" fill="#2b4130" filter="url(#sb1)"/><path d="M148.1 67.6 C150.8 63.8 165.3 54.7 167.6 55.9 C170.0 57.1 166.4 71.6 163.7 75.4 C161.1 79.2 152.4 82.4 150.1 81.2 C147.8 80.1 145.5 71.4 148.1 67.6 Z" fill="#4d6a48" filter="url(#sb1)"/><path d="M200.8 46.1 C202.5 44.4 207.5 50.9 212.5 55.9 C217.4 60.9 228.4 72.3 233.9 79.3 C239.5 86.3 246.3 95.7 249.5 102.7 C252.7 109.7 253.0 119.0 255.4 126.1 C257.7 133.1 261.6 142.7 265.1 149.5 C268.6 156.2 277.6 166.8 278.8 170.9 C279.9 175.0 277.3 177.6 272.9 176.7 C268.5 175.9 256.5 169.1 249.5 165.0 C242.5 161.0 231.7 155.3 226.1 149.5 C220.6 143.6 215.7 134.8 212.5 126.1 C209.3 117.3 206.4 99.7 204.7 91.0 C202.9 82.2 201.4 74.3 200.8 67.6 C200.2 60.9 199.0 47.9 200.8 46.1 Z" fill="#2e4533" filter="url(#sb1)"/><path d="M218.3 42.2 C224.2 42.8 262.4 53.0 272.9 55.9 C283.4 58.8 289.1 61.1 288.5 61.7 C287.9 62.3 277.2 61.2 269.0 59.8 C260.8 58.3 241.5 54.6 233.9 52.0 C226.3 49.4 212.5 41.7 218.3 42.2 Z" fill="#273a2b" filter="url(#sb1)"/><path d="M233.9 61.7 C236.8 61.1 252.6 64.9 257.3 67.6 C262.0 70.2 266.3 76.9 265.1 79.3 C263.9 81.6 253.6 84.3 249.5 83.2 C245.4 82.0 240.2 74.7 237.8 71.5 C235.5 68.3 231.0 62.3 233.9 61.7 Z" fill="#273a2b" filter="url(#sb1)"/><path d="M257.3 102.7 C258.8 97.4 267.1 88.8 272.9 87.1 C278.8 85.3 291.0 86.9 296.3 91.0 C301.6 95.1 303.3 107.3 308.0 114.4 C312.7 121.4 322.2 130.7 327.5 137.8 C332.7 144.8 342.5 155.9 343.1 161.1 C343.7 166.4 336.6 169.9 331.4 172.8 C326.1 175.8 315.0 178.6 308.0 180.6 C301.0 182.7 289.0 188.2 284.6 186.5 C280.2 184.7 280.5 175.7 278.8 168.9 C277.0 162.2 275.2 148.7 272.9 141.7 C270.6 134.6 265.5 128.0 263.2 122.2 C260.8 116.3 255.8 107.9 257.3 102.7 Z" fill="#25382a" filter="url(#sb1)"/><path d="M58.5 176.7 C61.7 168.6 71.5 155.0 78.0 149.5 C84.4 143.9 93.2 140.6 101.4 139.7 C109.6 138.8 125.2 141.8 132.6 143.6 C139.9 145.4 148.3 147.6 150.1 151.4 C151.9 155.2 146.9 164.0 144.2 168.9 C141.6 173.9 136.1 178.7 132.6 184.5 C129.0 190.4 123.8 199.7 120.9 207.9 C117.9 216.1 114.8 231.2 113.1 239.1 C111.3 247.0 113.3 258.2 109.2 260.6 C105.1 262.9 92.5 258.8 85.8 254.7 C79.0 250.6 68.7 240.9 64.3 233.3 C59.9 225.7 57.4 212.5 56.5 204.0 C55.7 195.6 55.3 184.9 58.5 176.7 Z" fill="#2c4331" filter="url(#sb1)"/><path d="M103.3 200.1 C105.7 195.7 119.8 187.1 124.8 180.6 C129.7 174.2 132.7 161.6 136.5 157.2 C140.3 152.9 147.5 150.8 150.1 151.4 C152.7 152.0 155.5 156.2 154.0 161.1 C152.5 166.1 145.3 177.8 140.4 184.5 C135.4 191.3 125.5 202.2 120.9 206.0 C116.2 209.8 111.8 210.8 109.2 209.9 C106.5 209.0 101.0 204.5 103.3 200.1 Z" fill="#506c49" filter="url(#sb1)"/><path d="M150.1 153.4 C151.0 153.1 152.1 163.8 155.9 167.0 C159.7 170.2 171.6 172.7 175.4 174.8 C179.2 176.8 181.3 177.4 181.3 180.6 C181.3 183.9 176.6 190.4 175.4 196.2 C174.3 202.1 172.3 213.2 173.5 219.6 C174.7 226.1 180.6 235.6 183.2 239.1 C185.9 242.6 192.8 239.8 191.0 243.0 C189.3 246.2 176.2 260.0 171.5 260.6 C166.9 261.1 162.5 253.1 159.8 246.9 C157.2 240.8 154.6 228.4 154.0 219.6 C153.4 210.9 156.5 196.0 155.9 188.4 C155.4 180.8 151.0 174.2 150.1 168.9 C149.2 163.7 149.2 153.6 150.1 153.4 Z" fill="#31493a" filter="url(#sb1)"/><path d="M212.5 211.8 C214.2 206.6 217.8 200.3 222.2 196.2 C226.6 192.1 234.1 185.4 241.7 184.5 C249.3 183.7 259.5 189.2 272.9 190.4 C286.4 191.6 322.0 189.7 331.4 192.3 C340.7 195.0 335.0 200.9 335.3 207.9 C335.6 214.9 335.1 230.9 333.3 239.1 C331.6 247.3 332.7 256.7 323.6 262.5 C314.5 268.4 284.0 274.3 272.9 278.1 C261.8 281.9 255.9 287.3 249.5 287.9 C243.1 288.4 235.3 287.0 230.0 282.0 C224.8 277.0 217.3 262.3 214.4 254.7 C211.5 247.1 210.8 237.8 210.5 231.3 C210.2 224.9 210.7 217.1 212.5 211.8 Z" fill="#3b5439" filter="url(#sb1)"/><path d="M228.1 207.9 C231.0 204.7 239.3 195.7 249.5 194.3 C259.7 192.8 284.3 197.3 296.3 198.2 C308.3 199.1 324.8 198.7 329.4 200.1 C334.1 201.6 333.6 206.8 327.5 207.9 C321.3 209.1 300.2 207.3 288.5 207.9 C276.8 208.5 258.3 210.7 249.5 211.8 C240.7 213.0 233.2 216.3 230.0 215.7 C226.8 215.1 225.1 211.1 228.1 207.9 Z" fill="#4e6a46" filter="url(#sb1)"/><path d="M21.4 207.9 C21.2 196.2 24.7 179.5 27.3 168.9 C29.9 158.4 34.3 145.1 39.0 137.8 C43.7 130.4 56.7 119.6 58.5 120.2 C60.2 120.8 53.3 133.2 50.7 141.7 C48.1 150.1 42.7 165.6 40.9 176.7 C39.2 187.9 36.9 204.0 39.0 215.7 C41.0 227.4 53.4 247.7 54.6 254.7 C55.8 261.7 50.6 263.7 46.8 262.5 C43.0 261.3 33.0 255.1 29.2 246.9 C25.4 238.7 21.7 219.6 21.4 207.9 Z" fill="#2f4632" filter="url(#sb1)"/><path d="M31.2 266.4 C32.4 264.1 44.1 281.5 54.6 285.9 C65.1 290.3 87.3 293.0 101.4 295.7 C115.4 298.3 135.6 302.0 148.1 303.4 C160.7 304.9 179.3 302.2 185.2 305.4 C191.0 308.6 186.5 313.8 187.1 324.9 C187.7 336.0 193.8 371.9 189.1 379.5 C184.4 387.1 166.8 378.5 155.9 375.6 C145.1 372.6 128.7 366.4 117.0 360.0 C105.3 353.5 88.5 341.5 78.0 332.7 C67.4 323.9 53.8 311.4 46.8 301.5 C39.8 291.6 30.0 268.8 31.2 266.4 Z" fill="#29402f" filter="url(#sb1)"/><path d="M103.3 299.5 C108.6 297.1 141.1 301.4 148.1 304.6 C155.2 307.8 144.8 318.0 150.1 321.0 C155.4 324.0 177.8 318.5 183.2 324.9 C188.7 331.3 190.4 357.7 186.4 363.9 C182.3 370.0 165.8 368.2 155.9 365.8 C146.1 363.5 127.3 355.0 120.9 348.3 C114.4 341.6 115.7 328.3 113.1 321.0 C110.4 313.7 98.1 302.0 103.3 299.5 Z" fill="#3a5238" filter="url(#sb1)"/><path d="M210.5 363.9 C214.6 358.0 225.7 352.6 233.9 344.4 C242.1 336.2 259.3 318.1 265.1 309.3 C271.0 300.5 268.2 290.0 272.9 285.9 C277.6 281.8 288.7 280.8 296.3 282.0 C303.9 283.2 315.4 293.1 323.6 293.7 C331.8 294.3 348.0 281.8 350.9 285.9 C353.8 290.0 348.9 310.5 343.1 321.0 C337.2 331.5 322.4 347.3 311.9 356.1 C301.4 364.9 284.6 374.5 272.9 379.5 C261.2 384.4 243.9 388.6 233.9 389.2 C224.0 389.8 210.1 387.2 206.6 383.4 C203.1 379.6 206.4 369.7 210.5 363.9 Z" fill="#1f3024" filter="url(#sb1)"/><path d="M335.3 196.2 C335.9 189.8 345.6 187.9 350.9 188.4 C356.1 189.0 366.6 194.9 370.4 200.1 C374.2 205.4 376.8 216.5 376.2 223.5 C375.6 230.5 369.7 242.8 366.5 246.9 C363.3 251.0 357.7 253.2 354.8 250.8 C351.9 248.5 349.9 239.5 347.0 231.3 C344.1 223.1 334.7 202.7 335.3 196.2 Z" fill="#26392b" filter="url(#sb1)"/><circle cx="198.5" cy="214" r="179.0" fill="url(#sphsh)"/><circle cx="198.5" cy="214" r="179.0" fill="url(#sphrim)"/></g></svg>
<div class="t" style="left:1527px;top:1000px;font-size:11.5px;color:#d0d0d0;letter-spacing:0.2px">AssetBundle</div>
<div class="a" style="left:1617px;top:1000px;width:221px;height:15px;border-radius:3px;background:linear-gradient(#7d7d7d,#5a5a5a);border:1px solid #262626;color:#e2e2e2;font-size:9.5px;font-weight:bold;font-stretch:condensed;line-height:13px;padding-left:5px;letter-spacing:0.3px">None</div>
<div class="a" style="left:1828px;top:1003px;border-left:2.5px solid transparent;border-right:2.5px solid transparent;border-bottom:3px solid #ddd"></div>
<div class="a" style="left:1828px;top:1008px;border-left:2.5px solid transparent;border-right:2.5px solid transparent;border-top:3px solid #ddd"></div>
<div class="a" style="left:1845px;top:1000px;width:70px;height:15px;border-radius:3px;background:linear-gradient(#7d7d7d,#5a5a5a);border:1px solid #262626;color:#e2e2e2;font-size:9.5px;font-weight:bold;font-stretch:condensed;line-height:13px;padding-left:5px;letter-spacing:0.3px">None</div>
<div class="a" style="left:1905px;top:1003px;border-left:2.5px solid transparent;border-right:2.5px solid transparent;border-bottom:3px solid #ddd"></div>
<div class="a" style="left:1905px;top:1008px;border-left:2.5px solid transparent;border-right:2.5px solid transparent;border-top:3px solid #ddd"></div>
<svg class="ic" style="left:1895px;top:977px" width="22" height="16" viewBox="0 0 22 16"><ellipse cx="11" cy="8" rx="10.5" ry="7.5" fill="#2f6fd0"/><path d="M6 5 H11 L16 10 L12.5 13 L6 8.5 Z" fill="#fff" transform="rotate(8 11 8)"/><circle cx="8.3" cy="6.8" r="1" fill="#2f6fd0"/></svg>
<div class="a" style="left:1520px;top:1019px;width:400px;height:7px;background:#a2a2a2;border-top:1px solid #6a6a6a"></div>
<!-- ===== project ===== -->
<div class="a" style="left:0;top:751px;width:77px;height:17px;background:linear-gradient(#dadada,#cecece);border-top-right-radius:3px;border-right:1px solid #b0b0b0;border-top:1px solid #dcdcdc"></div>
<svg class="ic" style="left:7px;top:755px" width="13" height="11" viewBox="0 0 13 11"><path d="M1 3 V10 H12 V3 H6.5 L5.5 1.2 H2 L1 3 Z" fill="#7a7a7a" stroke="#3a3a3a" stroke-width="1"/><path d="M1 3.6 H12" stroke="#3a3a3a" stroke-width="0.8"/></svg>
<div class="t" style="left:22px;top:753px;font-size:11.2px;color:#333;letter-spacing:0.2px">Project</div>
<svg class="ic" style="left:86px;top:754px" width="11" height="13" viewBox="0 0 11 13"><rect x="1" y="1" width="9" height="11" fill="#e0e0e0" stroke="#3a3a3a" stroke-width="1.1"/><path d="M3 4 H8 M3 6.5 H8 M3 9 H6" stroke="#3a3a3a" stroke-width="0.9"/></svg>
<div class="t" style="left:101px;top:753px;font-size:11.2px;color:#333;letter-spacing:0.2px">Console</div>
<svg class="ic" style="left:1483px;top:753px" width="34" height="12" viewBox="0 0 34 12"><g fill="#4a4a4a"><path d="M3.2 6 H10.8 V11 H3.2 Z"/><path d="M4.6 6 V4.2 A2.4 2.4 0 0 1 9.4 4.2 V6 H8.2 V4.3 A1.2 1.2 0 0 0 5.8 4.3 V6 Z" fill="#666"/><path d="M17.5 5 H22.5 L20 8 Z"/><rect x="24" y="3.9" width="8.5" height="1.3"/><rect x="24" y="6.1" width="8.5" height="1.3"/><rect x="24" y="8.3" width="8.5" height="1.3"/></g></svg>
<div class="a" style="left:0;top:768px;width:1519px;height:252px;background:#c2c2c2;border-right:1px solid #8a8a8a;border-bottom:1px solid #8a8a8a"></div>
<div class="a bar" style="left:0;top:768px;width:1518px;height:16px;border-bottom:1px solid #9b9b9b;box-sizing:content-box"></div>
<div class="sep" style="left:6px;top:768px;height:16px;background:#a8a8a8"></div>
<div class="t" style="left:13px;top:769px;font-size:10px;font-weight:bold;font-stretch:condensed;color:#222">Create</div>
<div class="a" style="left:50px;top:774px;border-left:3px solid transparent;border-right:3px solid transparent;border-top:3px solid #333"></div>
<div class="sep" style="left:58px;top:768px;height:16px;background:#a0a0a0"></div>
<div class="a" style="left:1138px;top:769px;width:300px;height:14px;border:1px solid #7e7e7e;border-radius:7px;background:linear-gradient(#d2d2d2,#e0e0e0)"></div>
<svg class="ic" style="left:1142px;top:771px" width="11" height="11" viewBox="0 0 11 11"><circle cx="4.4" cy="4.4" r="2.9" fill="none" stroke="#777" stroke-width="1.1"/><path d="M6.5 6.6 L9.4 9.6" stroke="#777" stroke-width="1.4"/></svg>
<div class="sep" style="left:1448px;top:768px;height:16px;background:#a0a0a0"></div>
<div class="sep" style="left:1470px;top:768px;height:16px;background:#a0a0a0"></div>
<div class="sep" style="left:1492px;top:768px;height:16px;background:#a0a0a0"></div>
<div class="sep" style="left:1514px;top:768px;height:16px;background:#a0a0a0"></div>
<svg class="ic" style="left:1449px;top:769px" width="66" height="15" viewBox="0 0 66 15"><g fill="#5a5a5a"><circle cx="13" cy="5" r="3"/><path d="M4.5 11 L8.5 4.5 L12.5 11 Z"/><rect x="12" y="8.5" width="4.5" height="4.5"/></g><path d="M27 3.5 H31.5 L38 10 L34.5 13 L27 7.5 Z" fill="#4a4a4a"/><circle cx="29.3" cy="5.6" r="0.9" fill="#ddd"/><path d="M54.5 2 L56 6 L60.2 6.1 L56.9 8.7 L58.1 12.8 L54.5 10.4 L50.9 12.8 L52.1 8.7 L48.8 6.1 L53 6 Z" fill="#8a8a8a"/></svg>
<div class="a" style="left:0;top:785px;width:115px;height:234px;background:#c8c8c8;border-right:1px solid #9a9a9a"></div>
<div class="a" style="left:5px;top:790px;border-left:4.5px solid transparent;border-right:4.5px solid transparent;border-top:7px solid #777"></div>
<svg class="ic" style="left:17px;top:785px" width="15" height="15" viewBox="0 0 15 15"><path d="M7.5 0.8 L9.5 5.2 L14.3 5.7 L10.7 8.9 L11.8 13.7 L7.5 11.2 L3.2 13.7 L4.3 8.9 L0.7 5.7 L5.5 5.2 Z" fill="#f7d63a" stroke="#c39a12" stroke-width="0.9"/></svg>
<div class="t" style="left:34px;top:784px;font-size:11.5px;font-weight:bold;font-stretch:condensed;color:#111;letter-spacing:0.85px">Favorites</div>
<svg class="ic" style="left:31px;top:801px" width="17" height="17" viewBox="0 0 16 16"><circle cx="6.4" cy="6.2" r="4.6" fill="#e9e9e9" stroke="#e2b91f" stroke-width="1.9"/><path d="M9.8 9.8 L14 14" stroke="#d9a916" stroke-width="2.8" stroke-linecap="round"/></svg>
<div class="t" style="left:49px;top:802px;font-size:10.7px;color:#111;letter-spacing:0.25px;max-width:66px;overflow:hidden">All Materials</div>
<svg class="ic" style="left:31px;top:817px" width="17" height="17" viewBox="0 0 16 16"><circle cx="6.4" cy="6.2" r="4.6" fill="#e9e9e9" stroke="#e2b91f" stroke-width="1.9"/><path d="M9.8 9.8 L14 14" stroke="#d9a916" stroke-width="2.8" stroke-linecap="round"/></svg>
<div class="t" style="left:49px;top:818px;font-size:10.7px;color:#111;letter-spacing:0.25px;max-width:66px;overflow:hidden">All Models</div>
<svg class="ic" style="left:31px;top:833px" width="17" height="17" viewBox="0 0 16 16"><circle cx="6.4" cy="6.2" r="4.6" fill="#e9e9e9" stroke="#e2b91f" stroke-width="1.9"/><path d="M9.8 9.8 L14 14" stroke="#d9a916" stroke-width="2.8" stroke-linecap="round"/></svg>
<div class="t" style="left:49px;top:834px;font-size:10.7px;color:#111;letter-spacing:0.25px;max-width:66px;overflow:hidden">All Prefabs</div>
<div class="a" style="left:0;top:864px;width:115px;height:16px;background:#8f8f8f"></div>
<svg class="ic" style="left:17px;top:866px" width="15" height="13" viewBox="0 0 15 13"><path d="M0.8 2.6 Q0.8 1.2 2 1.2 H5.6 L6.8 2.6 H13 Q14.2 2.6 14.2 3.8 V11 Q14.2 12.2 13 12.2 H2 Q0.8 12.2 0.8 11 Z" fill="#8d9a9a" stroke="#5f6b6b" stroke-width="0.8"/><path d="M0.8 5 H14.2 V11 Q14.2 12.2 13 12.2 H2 Q0.8 12.2 0.8 11 Z" fill="#aebaba"/><path d="M1 5 H14" stroke="#dfe6e6" stroke-width="0.9"/></svg>
<div class="t" style="left:35px;top:864px;font-size:11.5px;font-weight:bold;font-stretch:condensed;color:#fff;letter-spacing:0.85px">Assets</div>
<div class="a" style="left:6px;top:884px;border-top:4.5px solid transparent;border-bottom:4.5px solid transparent;border-left:7px solid #777"></div>
<svg class="ic" style="left:17px;top:882px" width="15" height="13" viewBox="0 0 15 13"><path d="M0.8 2.6 Q0.8 1.2 2 1.2 H5.6 L6.8 2.6 H13 Q14.2 2.6 14.2 3.8 V11 Q14.2 12.2 13 12.2 H2 Q0.8 12.2 0.8 11 Z" fill="#8d9a9a" stroke="#5f6b6b" stroke-width="0.8"/><path d="M0.8 5 H14.2 V11 Q14.2 12.2 13 12.2 H2 Q0.8 12.2 0.8 11 Z" fill="#aebaba"/><path d="M1 5 H14" stroke="#dfe6e6" stroke-width="0.9"/></svg>
<div class="t" style="left:35px;top:880px;font-size:11.5px;font-weight:bold;font-stretch:condensed;color:#111;letter-spacing:0.85px">Packages</div>
<div class="a" style="left:116px;top:785px;width:1402px;height:17px;background:#dedede;border-bottom:1px solid #a2a2a2"></div>
<div class="t" style="left:122px;top:786px;font-size:11.5px;font-weight:bold;font-stretch:condensed;color:#111;letter-spacing:0.85px">Assets</div>
<div class="a" style="left:116px;top:1005px;width:1402px;height:14px;background:#dcdcdc;border-top:1px solid #a2a2a2"></div>
<svg class="ic" style="left:120px;top:1006px" width="14" height="14" viewBox="0 0 14 14"><defs><radialGradient id="bb" cx="0.4" cy="0.3" r="0.75"><stop offset="0" stop-color="#d8e6f8"/><stop offset="0.55" stop-color="#5e8fcf"/><stop offset="1" stop-color="#244a86"/></radialGradient></defs><circle cx="7" cy="7" r="6.5" fill="url(#bb)"/></svg>
<div class="t" style="left:137px;top:1005px;font-size:11.2px;color:#111;letter-spacing:0.2px">Assets/None.mat</div>
<div class="a" style="left:1449px;top:1010px;width:55px;height:3px;background:#8c8c8c;border-radius:2px;border-top:1px solid #707070"></div>
<div class="a" style="left:1476px;top:1006px;width:10px;height:10px;border-radius:5px;background:linear-gradient(#f6f6f6,#d0d0d0);border:1px solid #707070"></div>
<div class="a" style="left:0;top:1020px;width:1520px;height:6px;background:#a2a2a2"></div>
<svg class="ic" style="left:116px;top:803px" width="1402" height="202" viewBox="0 0 1402 202"><defs><linearGradient id="cubeL" x1="0" y1="0" x2="1" y2="1"><stop offset="0" stop-color="#7ec0f4"/><stop offset="1" stop-color="#4a94de"/></linearGradient><linearGradient id="cubeR" x1="0" y1="0" x2="1" y2="1"><stop offset="0" stop-color="#3f8cdc"/><stop offset="1" stop-color="#2a6fc0"/></linearGradient><linearGradient id="cubeT" x1="0" y1="0" x2="0" y2="1"><stop offset="0" stop-color="#bfe2fb"/><stop offset="1" stop-color="#8ccaf6"/></linearGradient><linearGradient id="clip" x1="0" y1="0" x2="0" y2="1"><stop offset="0" stop-color="#7d8f99"/><stop offset="1" stop-color="#5d6f79"/></linearGradient><radialGradient id="msph" cx="0.42" cy="0.35" r="0.65"><stop offset="0" stop-color="#3a403f"/><stop offset="0.6" stop-color="#1e2322"/><stop offset="1" stop-color="#0a0c0c"/></radialGradient><radialGradient id="pbtn" cx="0.5" cy="0.4" r="0.6"><stop offset="0" stop-color="#ffffff"/><stop offset="1" stop-color="#c9c9c9"/></radialGradient><linearGradient id="skin" x1="0" y1="0" x2="1" y2="0"><stop offset="0" stop-color="#f6dcae"/><stop offset="0.6" stop-color="#e9c48c"/><stop offset="1" stop-color="#c9a066"/></linearGradient><filter id="tb1"><feGaussianBlur stdDeviation="0.7"/></filter></defs><rect x="17.0" y="12.0" width="61" height="60" fill="#8b918b" /><polygon points="17.8,13.3 26.5,12.9 25.7,29.6 18.6,27.8" fill="#2a4a2c" filter="url(#tb1)"/><polygon points="27.0,13.3 37.9,12.9 37.9,20.8 27.4,21.2" fill="#12240f" filter="url(#tb1)"/><polygon points="39.3,12.9 45.8,12.9 45.8,20.4 39.3,20.4" fill="#14290f" filter="url(#tb1)"/><polygon points="47.2,12.9 57.2,12.9 56.4,21.7 47.6,20.8" fill="#183016" filter="url(#tb1)"/><polygon points="27.4,23.9 35.3,23.9 36.2,31.8 27.9,32.2" fill="#12240f" filter="url(#tb1)"/><polygon points="51.1,27.8 56.4,25.2 59.0,40.1 54.6,41.0" fill="#2b4b2c" filter="url(#tb1)"/><polygon points="19.1,33.9 32.7,33.1 32.7,40.1 20.4,41.0" fill="#1a3317" filter="url(#tb1)"/><polygon points="35.3,33.1 48.5,31.3 50.2,39.2 37.1,41.0" fill="#1d381a" filter="url(#tb1)"/><polygon points="19.5,43.6 30.1,42.7 30.9,54.1 20.4,55.0" fill="#2f5030" filter="url(#tb1)"/><polygon points="32.7,46.2 47.6,44.5 52.0,52.4 38.8,61.1 33.6,54.1" fill="#15290f" filter="url(#tb1)"/><polygon points="55.1,44.5 76.5,44.5 76.5,69.9 55.1,69.9" fill="#14280f" filter="url(#tb1)"/><polygon points="19.5,56.8 34.4,57.6 37.9,68.2 19.5,69.0" fill="#1a3317" filter="url(#tb1)"/><polygon points="39.7,62.0 47.6,61.1 52.9,69.9 40.6,69.0" fill="#24422a" filter="url(#tb1)"/><circle cx="68.6" cy="19.9" r="6.4" fill="#183016" filter="url(#tb1)"/><circle cx="68.6" cy="34.8" r="6.8" fill="#15290f" filter="url(#tb1)"/><path d="M55 54.5 H76.5 M66 45 V70" stroke="#3f6a3f" stroke-width="0.8" opacity="0.7"/><rect x="17.0" y="12.0" width="61" height="60" fill="none" stroke="#777" stroke-width="0.6"/><rect x="93.5" y="12.0" width="60.5" height="60" fill="#555555" /><path d="M122.3 27.0 C122.0 27.0 122.2 27.5 121.9 27.6 C121.7 27.7 121.2 27.7 121.0 27.8 C120.7 27.8 120.6 27.9 120.5 28.1 C120.4 28.3 120.3 28.5 120.2 28.9 C120.0 29.2 119.8 29.9 119.6 30.3 C119.4 30.7 119.3 31.1 119.1 31.4 C118.9 31.7 118.7 32.1 118.5 32.4 C118.4 32.7 118.1 32.9 118.0 33.1 C117.8 33.4 117.7 33.7 117.5 34.0 C117.4 34.3 117.3 34.7 117.1 35.1 C117.0 35.4 116.8 35.8 116.7 36.2 C116.6 36.5 116.5 36.9 116.4 37.1 C116.3 37.4 116.1 37.6 116.0 37.8 C115.9 38.0 115.9 38.1 115.8 38.4 C115.7 38.6 115.7 38.9 115.6 39.2 C115.6 39.5 115.6 39.9 115.6 40.2 C115.5 40.4 115.5 40.7 115.6 40.7 C115.6 40.7 115.7 40.5 115.8 40.3 C115.8 40.1 115.9 39.7 115.9 39.5 C115.9 39.3 116.0 39.0 116.1 38.9 C116.1 38.7 116.3 38.4 116.3 38.4 C116.4 38.5 116.3 38.9 116.2 39.1 C116.2 39.3 116.2 39.5 116.2 39.6 C116.2 39.7 116.3 39.8 116.4 39.7 C116.4 39.5 116.5 39.2 116.6 39.0 C116.7 38.7 116.8 38.4 116.8 38.1 C116.9 37.8 116.9 37.6 117.0 37.4 C117.1 37.2 117.2 37.0 117.3 36.8 C117.4 36.6 117.6 36.2 117.8 36.0 C117.9 35.8 118.1 35.7 118.2 35.5 C118.4 35.3 118.6 34.9 118.7 34.6 C118.8 34.3 119.0 34.0 119.1 33.7 C119.2 33.4 119.3 33.1 119.5 32.9 C119.6 32.6 119.8 32.4 119.9 32.1 C120.1 31.8 120.4 31.5 120.6 31.2 C120.8 31.0 120.9 30.5 121.0 30.6 C121.1 30.7 121.2 31.3 121.2 31.7 C121.3 32.0 121.4 32.3 121.5 32.6 C121.6 32.9 121.7 33.1 121.7 33.5 C121.8 33.8 121.8 34.3 121.8 34.7 C121.8 35.1 121.7 35.4 121.7 35.6 C121.6 35.9 121.6 36.1 121.6 36.3 C121.6 36.6 121.6 36.9 121.5 37.2 C121.5 37.5 121.4 37.8 121.3 38.1 C121.3 38.4 121.2 38.8 121.1 39.1 C121.1 39.5 121.0 39.9 120.9 40.3 C120.9 40.6 120.8 41.0 120.8 41.4 C120.8 41.8 120.8 42.2 120.8 42.4 C120.8 42.7 120.7 42.6 120.8 42.8 C120.8 43.1 120.8 43.6 120.9 44.0 C120.9 44.4 121.0 44.7 121.0 45.1 C121.1 45.5 121.1 45.8 121.2 46.1 C121.2 46.5 121.2 46.8 121.2 47.2 C121.2 47.5 121.2 47.9 121.2 48.2 C121.2 48.6 121.1 48.9 121.1 49.3 C121.1 49.6 121.0 49.9 121.0 50.2 C120.9 50.5 120.9 50.9 120.9 51.1 C120.9 51.4 120.9 51.5 120.9 51.8 C120.9 52.1 121.0 52.6 121.0 53.0 C121.1 53.4 121.1 53.7 121.2 54.1 C121.2 54.5 121.3 54.9 121.3 55.2 C121.3 55.6 121.3 55.9 121.3 56.3 C121.3 56.6 121.3 57.1 121.3 57.4 C121.3 57.8 121.3 58.1 121.3 58.4 C121.3 58.7 121.2 59.0 121.2 59.2 C121.2 59.5 121.2 59.7 121.2 59.8 C121.3 60.0 121.3 60.2 121.4 60.3 C121.5 60.4 121.8 60.5 121.9 60.5 C122.1 60.5 122.3 60.5 122.4 60.5 C122.5 60.4 122.6 60.3 122.6 60.1 C122.6 59.9 122.6 59.8 122.6 59.5 C122.5 59.3 122.4 58.9 122.4 58.6 C122.3 58.3 122.3 58.1 122.2 57.8 C122.2 57.4 122.2 57.0 122.1 56.6 C122.1 56.2 122.1 55.8 122.1 55.4 C122.1 55.0 122.1 54.7 122.1 54.4 C122.1 54.0 122.2 53.7 122.2 53.3 C122.2 53.0 122.3 52.5 122.3 52.3 C122.4 52.0 122.4 52.0 122.4 51.8 C122.4 51.5 122.4 51.1 122.4 50.7 C122.4 50.3 122.4 49.8 122.4 49.5 C122.4 49.1 122.5 48.8 122.5 48.5 C122.5 48.2 122.5 47.7 122.5 47.4 C122.6 47.0 122.6 46.7 122.6 46.3 C122.6 45.9 122.7 45.5 122.7 45.1 C122.8 44.7 122.8 44.4 122.9 44.0 C122.9 43.6 122.9 43.2 122.9 42.8 C123.0 42.5 123.0 42.3 123.0 42.0 C123.0 41.7 123.0 41.0 123.0 40.8 C123.0 40.6 123.0 40.6 123.1 40.6 C123.1 40.6 123.1 40.6 123.1 40.8 C123.1 41.0 123.1 41.7 123.1 42.0 C123.1 42.3 123.1 42.5 123.1 42.8 C123.1 43.2 123.1 43.6 123.2 44.0 C123.2 44.4 123.3 44.7 123.3 45.1 C123.3 45.5 123.4 45.9 123.4 46.3 C123.4 46.7 123.4 47.0 123.4 47.4 C123.4 47.7 123.4 48.2 123.4 48.5 C123.4 48.8 123.4 49.1 123.3 49.5 C123.3 49.8 123.3 50.1 123.3 50.5 C123.3 50.9 123.3 51.4 123.3 51.8 C123.3 52.1 123.4 52.3 123.4 52.6 C123.4 53.0 123.5 53.4 123.5 53.8 C123.5 54.1 123.5 54.5 123.5 54.9 C123.5 55.3 123.5 55.6 123.5 55.9 C123.5 56.3 123.4 56.5 123.5 56.8 C123.5 57.1 123.5 57.4 123.5 57.7 C123.6 57.9 123.7 58.1 123.7 58.4 C123.8 58.6 123.8 58.9 123.8 59.2 C123.8 59.4 123.9 59.6 124.0 59.8 C124.0 59.9 124.1 60.1 124.2 60.2 C124.3 60.3 124.4 60.3 124.5 60.3 C124.7 60.2 124.9 60.1 125.0 59.9 C125.1 59.8 125.2 59.7 125.2 59.5 C125.2 59.3 125.1 59.2 125.1 59.0 C125.0 58.8 124.9 58.5 124.8 58.2 C124.7 57.9 124.6 57.7 124.6 57.4 C124.5 57.2 124.5 56.9 124.4 56.6 C124.4 56.3 124.3 56.0 124.3 55.7 C124.3 55.3 124.3 55.0 124.3 54.6 C124.4 54.3 124.4 54.0 124.5 53.7 C124.5 53.3 124.6 53.0 124.6 52.6 C124.7 52.3 124.7 52.0 124.7 51.8 C124.8 51.5 124.8 51.4 124.8 51.1 C124.8 50.9 124.8 50.5 124.7 50.2 C124.7 49.9 124.7 49.6 124.7 49.3 C124.7 48.9 124.8 48.6 124.8 48.2 C124.8 47.9 124.8 47.5 124.8 47.2 C124.9 46.8 124.9 46.5 124.9 46.1 C125.0 45.8 125.0 45.5 125.1 45.1 C125.1 44.7 125.2 44.4 125.2 44.0 C125.3 43.6 125.3 43.2 125.3 42.8 C125.4 42.5 125.3 42.4 125.3 42.0 C125.3 41.6 125.3 41.1 125.3 40.7 C125.3 40.3 125.2 39.9 125.2 39.6 C125.1 39.2 125.1 38.9 125.0 38.5 C125.0 38.1 124.9 37.7 124.8 37.2 C124.7 36.8 124.7 36.3 124.6 35.9 C124.6 35.6 124.6 35.5 124.6 35.1 C124.6 34.8 124.6 34.4 124.6 34.0 C124.6 33.6 124.7 33.3 124.7 33.0 C124.7 32.6 124.8 32.3 124.8 31.9 C124.8 31.6 124.7 30.9 124.8 30.8 C124.9 30.8 125.2 31.3 125.3 31.6 C125.5 31.8 125.7 32.1 125.9 32.4 C126.1 32.6 126.3 32.9 126.4 33.1 C126.6 33.4 126.7 33.8 126.9 34.1 C127.0 34.4 127.1 34.8 127.3 35.1 C127.4 35.3 127.6 35.4 127.8 35.6 C127.9 35.7 127.9 35.9 128.0 36.1 C128.2 36.3 128.4 36.4 128.5 36.6 C128.7 36.8 128.7 37.0 128.8 37.2 C128.9 37.4 129.0 37.7 129.1 37.9 C129.2 38.1 129.3 38.3 129.3 38.5 C129.4 38.7 129.5 39.0 129.6 39.2 C129.6 39.5 129.7 39.8 129.8 39.9 C129.8 40.1 129.9 40.2 130.0 40.2 C130.0 40.2 130.1 40.1 130.1 40.0 C130.1 39.9 130.1 39.7 130.1 39.5 C130.1 39.3 130.1 39.0 130.0 38.8 C130.0 38.6 130.0 38.3 129.9 38.1 C129.8 37.9 129.7 37.6 129.6 37.4 C129.4 37.2 129.3 37.0 129.2 36.8 C129.1 36.6 129.1 36.3 129.0 36.1 C128.9 35.8 128.8 35.5 128.6 35.2 C128.5 34.9 128.3 34.7 128.2 34.4 C128.1 34.1 128.0 33.7 127.8 33.4 C127.7 33.1 127.5 33.0 127.4 32.7 C127.3 32.4 127.1 32.1 127.0 31.8 C126.8 31.4 126.7 31.0 126.5 30.7 C126.4 30.4 126.2 30.3 126.1 30.0 C126.0 29.8 125.9 29.5 125.8 29.2 C125.7 28.9 125.6 28.5 125.5 28.3 C125.3 28.0 125.2 27.9 124.9 27.8 C124.7 27.7 124.2 27.8 124.0 27.7 C123.9 27.6 124.1 27.4 123.8 27.2 C123.5 27.1 122.6 26.9 122.3 27.0 Z" fill="#262626" opacity="1.0"/><path d="M123.1 21.5 C123.0 21.5 122.8 21.5 122.7 21.6 C122.6 21.7 122.5 21.8 122.4 21.9 C122.3 22.1 122.2 22.2 122.1 22.4 C122.0 22.6 122.0 22.8 122.0 22.9 C122.0 23.1 122.0 23.2 122.0 23.5 C122.0 23.8 122.0 24.2 122.0 24.5 C122.1 24.8 122.1 25.1 122.2 25.3 C122.2 25.5 122.3 25.5 122.3 25.6 C122.4 25.7 122.5 25.9 122.6 26.0 C122.7 26.0 122.9 26.1 123.1 26.1 C123.3 26.1 123.5 26.0 123.6 26.0 C123.7 25.9 123.8 25.8 123.9 25.6 C124.0 25.5 124.0 25.3 124.0 25.1 C124.1 24.8 124.1 24.3 124.1 23.9 C124.1 23.5 124.1 23.0 124.1 22.7 C124.1 22.4 124.0 22.1 123.9 21.9 C123.8 21.7 123.7 21.7 123.5 21.6 C123.4 21.5 123.3 21.5 123.1 21.5 Z" fill="#262626" opacity="1.0"/><path d="M122.3 25.6 C122.1 25.6 122.2 26.0 122.2 26.2 C122.2 26.4 122.2 26.7 122.2 26.8 C122.3 26.9 122.2 27.0 122.3 27.0 C122.5 27.1 122.8 27.2 123.0 27.2 C123.3 27.2 123.6 27.1 123.7 27.0 C123.9 26.9 123.8 26.7 123.8 26.6 C123.8 26.4 123.8 26.3 123.8 26.1 C123.8 25.9 124.0 25.6 123.8 25.6 C123.7 25.5 123.3 25.8 123.0 25.8 C122.8 25.8 122.4 25.5 122.3 25.6 Z" fill="#262626" opacity="1.0"/><rect x="156.5" y="14" width="533.5" height="56" rx="7" fill="#555555"/><circle cx="155" cy="40.700000000000045" r="6.6" fill="#6a6a6a" stroke="#e6e6e6" stroke-width="1.2"/><path d="M157.2 37.60000000000002 V43.799999999999955 L152.2 40.700000000000045 Z" fill="#f2f2f2"/><path d="M175.0 29.0 L200.0 21.0 L225.0 29.0 L200.0 39.0 Z" fill="url(#cubeT)"/><path d="M175.0 29.0 L200.0 39.0 L200.0 69.0 L177.0 58.0 Z" fill="url(#cubeL)"/><path d="M225.0 29.0 L200.0 39.0 L200.0 69.0 L223.0 58.0 Z" fill="url(#cubeR)"/><path d="M206.0 43.0 H220 L226.0 49.0 V67 H206 Z" fill="#f4f4f4" stroke="#c8c8c8" stroke-width="0.8"/><ellipse cx="273" cy="31" rx="2.0" ry="1.0" fill="#111"/><ellipse cx="284" cy="43" rx="1.5" ry="1.0" fill="#111"/><ellipse cx="263" cy="58" rx="2.0" ry="1.5" fill="#111"/><path d="M350.5 28.1 C350.3 28.1 350.4 28.5 350.3 28.6 C350.1 28.7 349.8 28.7 349.6 28.8 C349.5 28.9 349.4 28.9 349.3 29.1 C349.2 29.3 349.2 29.5 349.1 29.8 C349.0 30.2 348.9 30.7 348.7 31.1 C348.6 31.5 348.5 31.8 348.4 32.1 C348.3 32.5 348.1 32.8 348.0 33.0 C347.9 33.3 347.7 33.5 347.6 33.7 C347.5 34.0 347.4 34.3 347.3 34.5 C347.2 34.8 347.2 35.2 347.1 35.5 C347.0 35.8 346.9 36.2 346.8 36.5 C346.7 36.9 346.6 37.2 346.6 37.4 C346.5 37.7 346.4 37.9 346.3 38.1 C346.2 38.3 346.2 38.3 346.2 38.6 C346.1 38.8 346.1 39.1 346.1 39.4 C346.0 39.6 346.0 40.0 346.0 40.2 C346.0 40.5 346.0 40.7 346.0 40.7 C346.1 40.7 346.1 40.5 346.2 40.3 C346.2 40.1 346.2 39.8 346.2 39.6 C346.3 39.4 346.3 39.2 346.4 39.0 C346.4 38.9 346.5 38.6 346.5 38.6 C346.6 38.7 346.5 39.1 346.5 39.3 C346.5 39.5 346.4 39.6 346.5 39.7 C346.5 39.8 346.5 39.9 346.6 39.8 C346.6 39.7 346.7 39.4 346.7 39.1 C346.8 38.9 346.8 38.6 346.9 38.3 C346.9 38.1 346.9 37.9 347.0 37.7 C347.0 37.5 347.1 37.3 347.2 37.1 C347.3 36.9 347.4 36.6 347.5 36.4 C347.6 36.2 347.7 36.1 347.8 35.9 C347.9 35.7 348.0 35.4 348.1 35.1 C348.2 34.8 348.3 34.5 348.4 34.2 C348.5 34.0 348.5 33.7 348.6 33.5 C348.7 33.3 348.8 33.0 349.0 32.8 C349.1 32.5 349.3 32.2 349.4 32.0 C349.5 31.8 349.6 31.4 349.7 31.4 C349.7 31.5 349.8 32.1 349.8 32.4 C349.9 32.7 349.9 33.0 350.0 33.3 C350.1 33.5 350.1 33.7 350.1 34.1 C350.2 34.4 350.2 34.9 350.2 35.2 C350.2 35.5 350.1 35.8 350.1 36.1 C350.1 36.3 350.1 36.4 350.1 36.7 C350.1 36.9 350.0 37.2 350.0 37.5 C350.0 37.8 349.9 38.0 349.9 38.3 C349.8 38.6 349.8 38.9 349.7 39.3 C349.7 39.6 349.6 40.0 349.6 40.3 C349.6 40.7 349.5 41.0 349.5 41.4 C349.5 41.7 349.5 42.1 349.5 42.3 C349.5 42.5 349.5 42.5 349.5 42.7 C349.5 42.9 349.5 43.4 349.6 43.7 C349.6 44.1 349.6 44.5 349.7 44.8 C349.7 45.1 349.7 45.4 349.8 45.8 C349.8 46.1 349.8 46.4 349.8 46.7 C349.8 47.0 349.8 47.4 349.8 47.7 C349.8 48.0 349.8 48.3 349.7 48.6 C349.7 49.0 349.7 49.2 349.6 49.5 C349.6 49.8 349.6 50.1 349.6 50.3 C349.6 50.6 349.6 50.6 349.6 50.9 C349.6 51.2 349.6 51.7 349.7 52.1 C349.7 52.4 349.8 52.8 349.8 53.1 C349.8 53.5 349.8 53.8 349.9 54.1 C349.9 54.5 349.9 54.8 349.9 55.1 C349.9 55.4 349.9 55.8 349.9 56.2 C349.9 56.5 349.9 56.8 349.8 57.0 C349.8 57.3 349.8 57.6 349.8 57.8 C349.8 58.1 349.8 58.2 349.8 58.4 C349.8 58.6 349.8 58.7 349.9 58.8 C350.0 58.9 350.2 59.0 350.3 59.0 C350.4 59.0 350.5 59.0 350.6 59.0 C350.7 58.9 350.7 58.8 350.7 58.6 C350.7 58.5 350.7 58.3 350.7 58.1 C350.7 57.9 350.6 57.5 350.6 57.3 C350.5 57.0 350.5 56.8 350.5 56.5 C350.4 56.2 350.4 55.8 350.4 55.4 C350.4 55.1 350.4 54.7 350.4 54.3 C350.4 54.0 350.4 53.7 350.4 53.3 C350.4 53.0 350.4 52.7 350.5 52.4 C350.5 52.1 350.5 51.7 350.5 51.4 C350.6 51.2 350.6 51.2 350.6 50.9 C350.6 50.7 350.6 50.3 350.6 49.9 C350.6 49.6 350.6 49.1 350.6 48.8 C350.6 48.5 350.6 48.2 350.7 47.9 C350.7 47.6 350.7 47.2 350.7 46.9 C350.7 46.5 350.7 46.3 350.7 45.9 C350.7 45.6 350.8 45.1 350.8 44.8 C350.8 44.4 350.9 44.1 350.9 43.7 C350.9 43.4 350.9 43.0 351.0 42.7 C351.0 42.4 351.0 42.2 351.0 41.9 C351.0 41.6 351.0 41.0 351.0 40.8 C351.0 40.6 351.0 40.6 351.0 40.6 C351.0 40.6 351.1 40.6 351.1 40.8 C351.1 41.0 351.1 41.6 351.1 41.9 C351.1 42.2 351.0 42.4 351.1 42.7 C351.1 43.0 351.1 43.4 351.1 43.7 C351.1 44.1 351.2 44.4 351.2 44.8 C351.2 45.1 351.3 45.6 351.3 45.9 C351.3 46.3 351.3 46.5 351.3 46.9 C351.3 47.2 351.3 47.6 351.3 47.9 C351.3 48.2 351.2 48.5 351.2 48.8 C351.2 49.1 351.2 49.4 351.2 49.8 C351.2 50.1 351.2 50.6 351.2 50.9 C351.2 51.3 351.2 51.4 351.3 51.7 C351.3 52.0 351.3 52.4 351.3 52.8 C351.4 53.1 351.4 53.5 351.4 53.8 C351.4 54.2 351.3 54.5 351.3 54.8 C351.3 55.1 351.3 55.3 351.3 55.6 C351.3 55.9 351.3 56.2 351.4 56.4 C351.4 56.6 351.5 56.8 351.5 57.0 C351.5 57.3 351.5 57.5 351.5 57.8 C351.6 58.0 351.6 58.2 351.6 58.3 C351.7 58.5 351.7 58.6 351.8 58.7 C351.9 58.8 351.9 58.8 352.0 58.8 C352.1 58.8 352.2 58.6 352.3 58.5 C352.4 58.4 352.4 58.2 352.5 58.1 C352.5 57.9 352.4 57.8 352.4 57.6 C352.3 57.4 352.3 57.1 352.2 56.9 C352.2 56.6 352.1 56.4 352.1 56.2 C352.0 55.9 352.0 55.7 352.0 55.4 C351.9 55.2 351.9 54.9 351.9 54.5 C351.9 54.2 351.9 53.9 351.9 53.6 C351.9 53.3 352.0 53.0 352.0 52.7 C352.0 52.4 352.1 52.0 352.1 51.7 C352.1 51.4 352.2 51.2 352.2 50.9 C352.2 50.7 352.2 50.6 352.2 50.3 C352.2 50.1 352.2 49.8 352.2 49.5 C352.2 49.2 352.2 49.0 352.2 48.6 C352.2 48.3 352.2 48.0 352.2 47.7 C352.2 47.4 352.2 47.0 352.2 46.7 C352.2 46.4 352.3 46.1 352.3 45.8 C352.3 45.4 352.4 45.1 352.4 44.8 C352.4 44.5 352.5 44.1 352.5 43.7 C352.5 43.4 352.6 43.0 352.6 42.7 C352.6 42.4 352.6 42.3 352.6 41.9 C352.6 41.6 352.6 41.1 352.5 40.7 C352.5 40.3 352.5 40.0 352.5 39.7 C352.4 39.3 352.4 39.1 352.4 38.7 C352.3 38.4 352.3 37.9 352.2 37.5 C352.2 37.1 352.1 36.6 352.1 36.3 C352.1 36.0 352.1 35.9 352.0 35.6 C352.0 35.3 352.1 34.9 352.1 34.5 C352.1 34.2 352.1 33.9 352.1 33.6 C352.2 33.3 352.2 32.9 352.2 32.6 C352.2 32.3 352.1 31.7 352.2 31.6 C352.3 31.6 352.5 32.1 352.6 32.3 C352.7 32.5 352.8 32.8 352.9 33.0 C353.1 33.3 353.2 33.5 353.3 33.7 C353.4 34.0 353.5 34.3 353.6 34.6 C353.7 34.9 353.8 35.3 353.9 35.5 C354.0 35.7 354.1 35.8 354.2 36.0 C354.3 36.2 354.3 36.3 354.4 36.5 C354.5 36.6 354.6 36.8 354.7 36.9 C354.8 37.1 354.8 37.3 354.9 37.5 C355.0 37.7 355.0 37.9 355.1 38.1 C355.2 38.4 355.2 38.5 355.2 38.7 C355.3 38.9 355.3 39.1 355.4 39.4 C355.4 39.6 355.5 39.9 355.5 40.0 C355.6 40.1 355.6 40.2 355.7 40.2 C355.7 40.3 355.8 40.2 355.8 40.1 C355.8 40.0 355.8 39.8 355.8 39.6 C355.8 39.4 355.7 39.2 355.7 39.0 C355.7 38.7 355.7 38.5 355.6 38.3 C355.6 38.1 355.5 37.9 355.4 37.7 C355.3 37.5 355.2 37.3 355.2 37.1 C355.1 36.9 355.1 36.7 355.0 36.5 C354.9 36.2 354.9 35.9 354.8 35.7 C354.7 35.4 354.6 35.1 354.5 34.9 C354.4 34.6 354.3 34.2 354.2 34.0 C354.1 33.7 354.0 33.6 353.9 33.3 C353.8 33.1 353.8 32.8 353.7 32.5 C353.6 32.2 353.5 31.8 353.4 31.5 C353.3 31.2 353.2 31.1 353.1 30.9 C353.0 30.6 352.9 30.4 352.9 30.1 C352.8 29.9 352.7 29.5 352.6 29.3 C352.5 29.0 352.4 28.9 352.3 28.9 C352.1 28.8 351.8 28.8 351.7 28.7 C351.6 28.6 351.7 28.4 351.5 28.3 C351.3 28.2 350.8 28.0 350.5 28.1 Z" fill="#2a2c2a" opacity="1.0"/><path d="M351.1 23.0 C351.0 23.0 350.9 23.0 350.8 23.1 C350.7 23.2 350.6 23.3 350.6 23.4 C350.5 23.5 350.4 23.7 350.4 23.8 C350.4 24.0 350.3 24.2 350.3 24.3 C350.3 24.5 350.3 24.6 350.3 24.8 C350.3 25.1 350.3 25.5 350.3 25.8 C350.4 26.1 350.4 26.4 350.5 26.5 C350.5 26.7 350.5 26.7 350.6 26.8 C350.6 26.9 350.6 27.0 350.7 27.1 C350.8 27.2 351.0 27.2 351.1 27.2 C351.2 27.2 351.3 27.2 351.4 27.1 C351.5 27.0 351.5 26.9 351.6 26.8 C351.6 26.7 351.7 26.5 351.7 26.3 C351.7 26.0 351.7 25.6 351.7 25.2 C351.7 24.9 351.8 24.4 351.7 24.1 C351.7 23.8 351.7 23.6 351.6 23.4 C351.5 23.2 351.4 23.2 351.4 23.1 C351.3 23.0 351.2 23.0 351.1 23.0 Z" fill="#2a2c2a" opacity="1.0"/><path d="M350.5 26.7 C350.4 26.8 350.5 27.2 350.5 27.4 C350.5 27.6 350.5 27.8 350.5 27.9 C350.5 28.0 350.5 28.0 350.5 28.1 C350.6 28.2 350.9 28.3 351.0 28.3 C351.2 28.3 351.4 28.2 351.5 28.1 C351.6 28.0 351.5 27.8 351.5 27.7 C351.5 27.6 351.5 27.4 351.5 27.2 C351.5 27.1 351.6 26.8 351.6 26.7 C351.5 26.7 351.2 27.0 351.0 27.0 C350.8 27.0 350.6 26.7 350.5 26.7 Z" fill="#2a2c2a" opacity="1.0"/><ellipse cx="407" cy="36" rx="2.5" ry="1.5" fill="#111"/><ellipse cx="449" cy="42" rx="3.0" ry="1.5" fill="#111"/><ellipse cx="437" cy="48" rx="3.0" ry="1.25" fill="#111"/><path d="M502.4 27.2 C502.1 27.2 502.2 27.7 502.0 27.9 C501.8 28.0 501.4 28.0 501.2 28.1 C500.9 28.2 500.8 28.2 500.7 28.5 C500.6 28.7 500.6 28.9 500.4 29.3 C500.3 29.7 500.1 30.4 499.9 30.9 C499.8 31.4 499.6 31.8 499.4 32.2 C499.3 32.6 499.1 32.9 498.9 33.3 C498.8 33.6 498.6 33.8 498.4 34.1 C498.3 34.4 498.1 34.8 498.0 35.1 C497.9 35.5 497.8 35.9 497.7 36.3 C497.5 36.7 497.4 37.2 497.3 37.6 C497.2 37.9 497.1 38.3 497.0 38.6 C496.9 38.9 496.7 39.2 496.6 39.4 C496.5 39.7 496.5 39.8 496.4 40.0 C496.4 40.3 496.3 40.7 496.3 41.0 C496.3 41.3 496.2 41.8 496.2 42.1 C496.2 42.3 496.2 42.6 496.2 42.7 C496.3 42.7 496.4 42.4 496.4 42.2 C496.5 41.9 496.5 41.6 496.5 41.3 C496.6 41.0 496.6 40.8 496.7 40.6 C496.8 40.4 496.9 40.1 496.9 40.1 C497.0 40.2 496.9 40.7 496.9 40.9 C496.8 41.1 496.8 41.3 496.8 41.4 C496.9 41.5 496.9 41.6 497.0 41.5 C497.0 41.4 497.1 41.0 497.2 40.7 C497.2 40.4 497.3 40.0 497.4 39.7 C497.4 39.4 497.4 39.2 497.5 38.9 C497.6 38.7 497.7 38.5 497.8 38.2 C497.9 38.0 498.1 37.6 498.3 37.4 C498.4 37.1 498.5 37.0 498.6 36.8 C498.8 36.5 499.0 36.1 499.1 35.8 C499.2 35.5 499.3 35.1 499.4 34.7 C499.5 34.4 499.6 34.1 499.8 33.8 C499.9 33.5 500.0 33.3 500.2 33.0 C500.4 32.6 500.6 32.3 500.8 32.0 C501.0 31.7 501.1 31.2 501.2 31.3 C501.3 31.4 501.3 32.1 501.4 32.5 C501.5 32.8 501.6 33.2 501.6 33.5 C501.7 33.9 501.8 34.1 501.8 34.5 C501.9 34.9 501.9 35.5 501.9 35.9 C501.9 36.3 501.8 36.6 501.8 37.0 C501.8 37.3 501.8 37.4 501.7 37.7 C501.7 38.0 501.7 38.4 501.6 38.7 C501.6 39.1 501.6 39.4 501.5 39.7 C501.4 40.1 501.4 40.5 501.3 40.9 C501.2 41.3 501.1 41.7 501.1 42.2 C501.1 42.6 501.0 43.0 501.0 43.4 C501.0 43.8 501.0 44.3 501.0 44.6 C501.0 44.9 500.9 44.8 501.0 45.1 C501.0 45.4 501.0 45.9 501.1 46.4 C501.1 46.8 501.2 47.2 501.2 47.6 C501.3 48.0 501.3 48.4 501.3 48.8 C501.4 49.2 501.4 49.6 501.4 50.0 C501.4 50.4 501.4 50.8 501.4 51.2 C501.3 51.6 501.3 52.0 501.3 52.3 C501.2 52.7 501.2 53.1 501.2 53.4 C501.1 53.8 501.1 54.1 501.1 54.4 C501.1 54.7 501.1 54.8 501.1 55.1 C501.1 55.5 501.2 56.1 501.2 56.5 C501.3 57.0 501.3 57.4 501.4 57.8 C501.4 58.2 501.4 58.7 501.5 59.1 C501.5 59.5 501.5 59.8 501.5 60.2 C501.5 60.7 501.5 61.1 501.5 61.5 C501.5 61.9 501.4 62.3 501.4 62.6 C501.4 62.9 501.4 63.3 501.4 63.6 C501.3 63.9 501.3 64.1 501.4 64.3 C501.4 64.5 501.4 64.7 501.5 64.8 C501.7 64.9 501.9 65.0 502.0 65.0 C502.2 65.0 502.4 65.0 502.5 65.0 C502.6 64.9 502.6 64.7 502.6 64.6 C502.6 64.4 502.6 64.2 502.6 63.9 C502.6 63.6 502.5 63.2 502.4 62.9 C502.4 62.6 502.3 62.3 502.3 61.9 C502.2 61.5 502.2 61.1 502.2 60.6 C502.2 60.2 502.2 59.7 502.2 59.3 C502.2 58.8 502.2 58.5 502.2 58.1 C502.2 57.7 502.2 57.3 502.3 56.9 C502.3 56.5 502.4 56.0 502.4 55.7 C502.4 55.4 502.4 55.5 502.4 55.1 C502.4 54.8 502.5 54.3 502.5 53.9 C502.5 53.5 502.4 52.9 502.5 52.5 C502.5 52.1 502.5 51.9 502.5 51.5 C502.6 51.1 502.6 50.6 502.6 50.2 C502.6 49.8 502.6 49.4 502.6 49.0 C502.7 48.6 502.7 48.1 502.8 47.6 C502.8 47.2 502.8 46.8 502.9 46.4 C502.9 45.9 502.9 45.5 502.9 45.1 C503.0 44.7 503.0 44.5 503.0 44.1 C503.0 43.7 503.0 43.0 503.0 42.8 C503.0 42.5 503.0 42.6 503.1 42.6 C503.1 42.6 503.1 42.5 503.1 42.8 C503.1 43.0 503.1 43.7 503.1 44.1 C503.1 44.5 503.1 44.7 503.1 45.1 C503.1 45.5 503.1 45.9 503.2 46.4 C503.2 46.8 503.2 47.2 503.3 47.6 C503.3 48.1 503.3 48.6 503.4 49.0 C503.4 49.4 503.4 49.8 503.4 50.2 C503.4 50.6 503.4 51.1 503.4 51.5 C503.4 51.9 503.3 52.2 503.3 52.5 C503.3 52.9 503.3 53.3 503.3 53.7 C503.3 54.1 503.3 54.7 503.3 55.1 C503.3 55.5 503.3 55.8 503.4 56.1 C503.4 56.5 503.4 57.0 503.5 57.4 C503.5 57.8 503.5 58.3 503.5 58.7 C503.5 59.1 503.4 59.5 503.4 59.9 C503.4 60.2 503.4 60.5 503.4 60.8 C503.4 61.2 503.4 61.5 503.5 61.8 C503.5 62.1 503.6 62.3 503.7 62.6 C503.7 62.9 503.7 63.2 503.7 63.5 C503.8 63.7 503.8 64.0 503.9 64.2 C503.9 64.4 504.0 64.6 504.1 64.7 C504.2 64.8 504.3 64.8 504.4 64.8 C504.5 64.7 504.7 64.5 504.8 64.4 C504.9 64.2 505.0 64.1 505.0 63.9 C505.0 63.7 504.9 63.5 504.9 63.3 C504.8 63.0 504.7 62.7 504.6 62.4 C504.6 62.1 504.5 61.8 504.4 61.5 C504.4 61.2 504.3 61.0 504.3 60.6 C504.3 60.3 504.2 59.9 504.2 59.6 C504.2 59.2 504.2 58.8 504.2 58.4 C504.2 58.0 504.3 57.7 504.3 57.3 C504.4 56.9 504.5 56.5 504.5 56.1 C504.5 55.8 504.6 55.4 504.6 55.1 C504.6 54.9 504.6 54.7 504.6 54.4 C504.6 54.1 504.6 53.8 504.6 53.4 C504.6 53.1 504.6 52.7 504.6 52.3 C504.6 52.0 504.6 51.6 504.6 51.2 C504.6 50.8 504.6 50.4 504.7 50.0 C504.7 49.6 504.7 49.2 504.7 48.8 C504.8 48.4 504.8 48.0 504.9 47.6 C504.9 47.2 505.0 46.8 505.0 46.4 C505.1 45.9 505.1 45.5 505.1 45.1 C505.1 44.7 505.1 44.5 505.1 44.1 C505.1 43.7 505.1 43.1 505.1 42.7 C505.1 42.2 505.0 41.8 505.0 41.4 C504.9 41.0 504.9 40.6 504.8 40.2 C504.8 39.8 504.7 39.2 504.6 38.7 C504.6 38.2 504.5 37.7 504.5 37.3 C504.5 36.9 504.4 36.7 504.4 36.4 C504.4 36.0 504.4 35.5 504.5 35.1 C504.5 34.7 504.5 34.3 504.5 33.9 C504.6 33.5 504.6 33.2 504.6 32.8 C504.6 32.4 504.6 31.6 504.6 31.5 C504.7 31.5 505.0 32.1 505.1 32.4 C505.3 32.7 505.5 33.0 505.6 33.3 C505.8 33.5 506.0 33.8 506.1 34.1 C506.3 34.5 506.4 34.9 506.5 35.2 C506.6 35.6 506.8 36.0 506.9 36.3 C507.0 36.6 507.2 36.7 507.3 36.9 C507.5 37.1 507.5 37.3 507.6 37.5 C507.7 37.7 507.9 37.8 508.0 38.0 C508.1 38.3 508.2 38.5 508.3 38.7 C508.4 39.0 508.5 39.3 508.6 39.5 C508.7 39.8 508.7 40.0 508.8 40.2 C508.8 40.5 508.9 40.7 509.0 41.0 C509.0 41.3 509.1 41.6 509.2 41.8 C509.2 42.0 509.3 42.1 509.3 42.1 C509.4 42.1 509.5 42.0 509.5 41.9 C509.5 41.7 509.5 41.5 509.5 41.3 C509.5 41.1 509.4 40.8 509.4 40.5 C509.3 40.2 509.3 40.0 509.3 39.7 C509.2 39.5 509.1 39.2 509.0 38.9 C508.9 38.7 508.8 38.5 508.7 38.2 C508.6 38.0 508.5 37.8 508.4 37.5 C508.3 37.2 508.2 36.8 508.1 36.5 C508.0 36.2 507.9 35.8 507.7 35.5 C507.6 35.2 507.5 34.7 507.4 34.4 C507.3 34.1 507.1 34.0 507.0 33.6 C506.9 33.3 506.7 32.9 506.6 32.6 C506.5 32.2 506.3 31.7 506.2 31.4 C506.1 31.1 505.9 30.9 505.8 30.6 C505.7 30.3 505.6 30.0 505.5 29.7 C505.4 29.4 505.4 28.9 505.2 28.6 C505.1 28.4 505.0 28.3 504.7 28.2 C504.5 28.0 504.1 28.1 504.0 28.0 C503.8 27.9 504.0 27.6 503.7 27.5 C503.4 27.3 502.7 27.1 502.4 27.2 Z" fill="#0e0f0e" opacity="1.0"/><path d="M503.1 21.0 C503.0 21.0 502.9 21.0 502.7 21.1 C502.6 21.2 502.5 21.3 502.4 21.5 C502.3 21.6 502.2 21.8 502.2 22.0 C502.1 22.2 502.1 22.4 502.1 22.6 C502.1 22.8 502.1 23.0 502.1 23.3 C502.1 23.6 502.1 24.1 502.1 24.4 C502.1 24.8 502.2 25.1 502.3 25.3 C502.3 25.5 502.3 25.5 502.4 25.7 C502.5 25.8 502.5 25.9 502.6 26.0 C502.7 26.1 502.9 26.2 503.1 26.2 C503.3 26.2 503.4 26.1 503.6 26.0 C503.7 25.9 503.7 25.8 503.8 25.7 C503.9 25.5 503.9 25.3 503.9 25.0 C504.0 24.7 504.0 24.2 504.0 23.7 C504.0 23.3 504.0 22.7 504.0 22.4 C504.0 22.0 503.9 21.7 503.8 21.5 C503.7 21.3 503.6 21.2 503.5 21.1 C503.4 21.0 503.2 21.0 503.1 21.0 Z" fill="#0e0f0e" opacity="1.0"/><path d="M502.3 25.6 C502.2 25.7 502.3 26.1 502.3 26.3 C502.3 26.6 502.3 26.8 502.3 27.0 C502.3 27.1 502.3 27.2 502.4 27.2 C502.5 27.3 502.8 27.4 503.0 27.4 C503.2 27.4 503.6 27.4 503.7 27.2 C503.8 27.1 503.7 26.9 503.7 26.7 C503.7 26.6 503.7 26.4 503.7 26.2 C503.7 26.0 503.9 25.6 503.8 25.6 C503.6 25.5 503.3 25.9 503.0 25.9 C502.8 25.9 502.5 25.5 502.3 25.6 Z" fill="#0e0f0e" opacity="1.0"/><rect x="560.5" y="17.5" width="38.5" height="48" fill="url(#clip)" stroke="#4e5d66" stroke-width="0.8"/><circle cx="580" cy="44" r="11" fill="url(#pbtn)" stroke="#9aa5ab" stroke-width="1"/><path d="M576.5 38.5 L586.0 44.0 L576.5 49.5 Z" fill="#222"/><path d="M641.0 49.0 Q638.0 43.0 644.0 42.5 L651.0 42.0 L651.0 36.0 L659.0 36.0 L659.0 42.0 L666.0 42.5 Q672.0 43.0 670.0 49.0 Q668.0 55.0 665.0 57.0 Q667.0 66.0 655.0 66.5 Q643.0 66.0 645.0 57.0 Q642.0 55.0 641.0 49.0 Z" fill="url(#skin)" stroke="#b88d55" stroke-width="0.7"/><rect x="648" y="17" width="14" height="20" rx="5.5" fill="url(#skin)" stroke="#b88d55" stroke-width="0.7"/><path d="M645.0 55.0 Q655.0 61.0 665.0 55.0" stroke="#b88d55" stroke-width="0.9" fill="none"/><rect x="702.0" y="12.0" width="60.5" height="60" fill="#4c515c" /><circle cx="731.8" cy="42" r="27.5" fill="url(#msph)"/><g opacity="0.35" fill="none" stroke="#7d8789" stroke-width="3"><path d="M716.0 29.0 Q726.0 19.0 736.0 27.0"/><path d="M740.0 23.0 Q752.0 29.0 754.0 43.0"/><path d="M712.0 45.0 Q720.0 39.0 730.0 47.0"/></g><rect x="777.5" y="12.0" width="61" height="60" fill="#8080ff" /><g fill="#9a9cff" opacity="0.6"><ellipse cx="804" cy="25" rx="5" ry="1.5"/><ellipse cx="792" cy="47" rx="2" ry="4"/><ellipse cx="820" cy="55" rx="4" ry="1.5"/></g></svg>
<div class="t" style="left:123.0px;top:878px;width:80px;text-align:center;font-size:9px;color:#111;letter-spacing:0.25px">albedo spa...</div>
<div class="t" style="left:199.0px;top:878px;width:80px;text-align:center;font-size:9px;color:#111;letter-spacing:0.25px">male sci fi</div>
<div class="t" style="left:275.0px;top:878px;width:80px;text-align:center;font-size:9px;color:#111;letter-spacing:0.25px">Armature</div>
<div class="t" style="left:351.0px;top:878px;width:80px;text-align:center;font-size:9px;color:#111;letter-spacing:0.25px">Cube</div>
<div class="t" style="left:427.0px;top:878px;width:80px;text-align:center;font-size:9px;color:#111;letter-spacing:0.25px">Plane.002</div>
<div class="t" style="left:503.0px;top:878px;width:80px;text-align:center;font-size:9px;color:#111;letter-spacing:0.25px">Cube</div>
<div class="t" style="left:579.0px;top:878px;width:80px;text-align:center;font-size:9px;color:#111;letter-spacing:0.25px">Plane.002</div>
<div class="t" style="left:655.0px;top:878px;width:80px;text-align:center;font-size:9px;color:#111;letter-spacing:0.25px">Armature...</div>
<div class="t" style="left:731.0px;top:878px;width:80px;text-align:center;font-size:9px;color:#111;letter-spacing:0.25px">male sci f...</div>
<div class="a" style="left:810.0px;top:878px;width:74px;height:14px;border-radius:7px;background:#8c8c8c"></div>
<div class="t" style="left:807.0px;top:878px;width:80px;text-align:center;font-size:9px;color:#fff;letter-spacing:0.25px">None</div>
<div class="t" style="left:883.0px;top:878px;width:80px;text-align:center;font-size:9px;color:#111;letter-spacing:0.25px">normal map...</div>
</body>
</html>
